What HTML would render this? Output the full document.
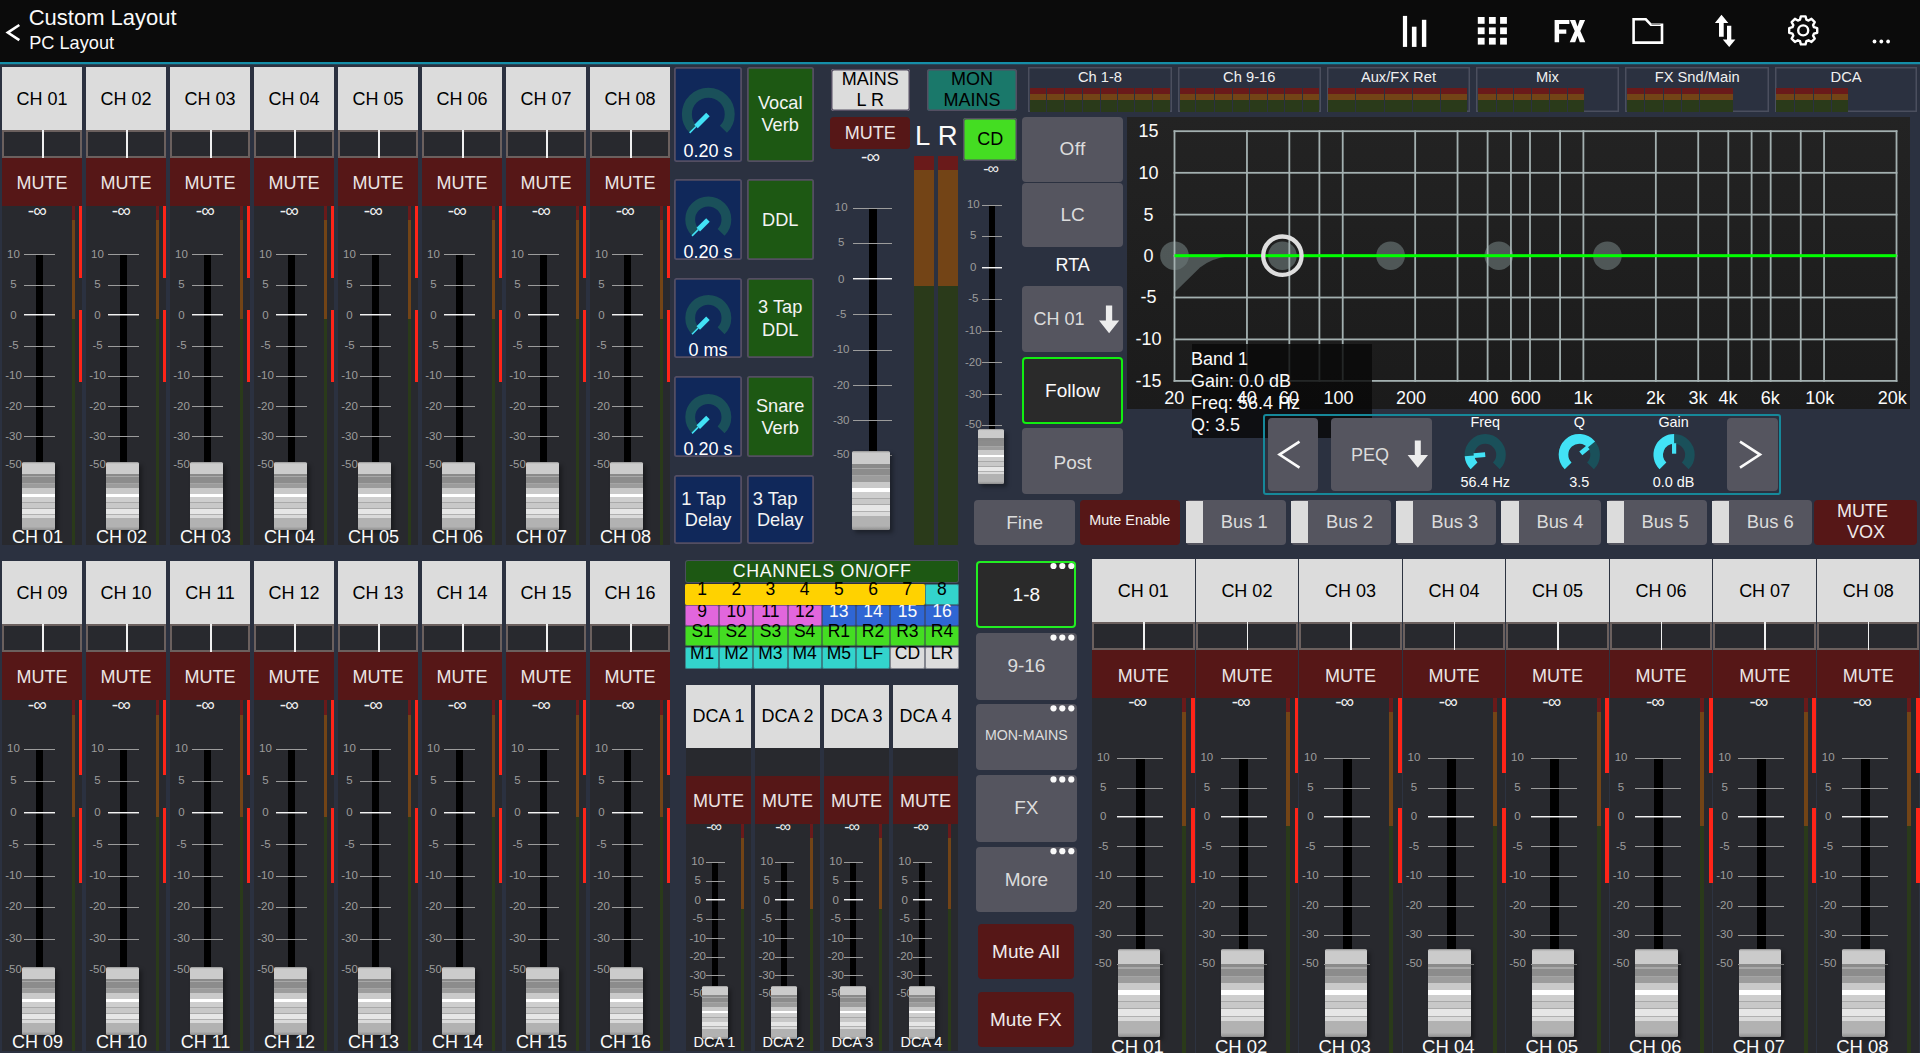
<!DOCTYPE html><html><head><meta charset="utf-8"><style>
*{margin:0;padding:0;box-sizing:border-box}
html,body{width:1920px;height:1053px;overflow:hidden;background:#2b3140}
body{position:relative;font-family:"Liberation Sans",sans-serif}
body>div,body>svg{position:absolute}
.t{white-space:nowrap}
</style></head><body><div style="left:0;top:0;width:1920px;height:62px;background:#0b0b0b"></div>
<div style="left:0px;top:62px;width:1920px;height:2px;background:#158ea8;"></div>
<div style="left:0px;top:64px;width:1920px;height:1px;background:rgba(26,141,166,0.25);"></div>
<div class="t" style="left:28.7px;top:7.38px;width:300px;font-size:22px;line-height:22px;color:#fafafa;text-align:left;">Custom Layout</div>
<div class="t" style="left:29.2px;top:34.39px;width:300px;font-size:18.2px;line-height:18.2px;color:#fafafa;text-align:left;">PC Layout</div>
<svg style="left:0;top:0" width="1920" height="62" viewBox="0 0 1920 62"><path d="M19.3 25 L7.8 32.6 L19.3 40.2" fill="none" stroke="#fff" stroke-width="2.6"/><rect x="1402.9" y="15.9" width="4.2" height="31" fill="#fff"/><rect x="1411.9" y="26.7" width="4.6" height="20.2" fill="#fff"/><rect x="1421.9" y="19.8" width="4.4" height="27.1" fill="#fff"/><rect x="1477.80" y="17.00" width="6.8" height="6.8" fill="#fff"/><rect x="1477.80" y="27.40" width="6.8" height="6.8" fill="#fff"/><rect x="1477.80" y="37.80" width="6.8" height="6.8" fill="#fff"/><rect x="1488.95" y="17.00" width="6.8" height="6.8" fill="#fff"/><rect x="1488.95" y="27.40" width="6.8" height="6.8" fill="#fff"/><rect x="1488.95" y="37.80" width="6.8" height="6.8" fill="#fff"/><rect x="1500.10" y="17.00" width="6.8" height="6.8" fill="#fff"/><rect x="1500.10" y="27.40" width="6.8" height="6.8" fill="#fff"/><rect x="1500.10" y="37.80" width="6.8" height="6.8" fill="#fff"/><path d="M1554.6 20.1 H1569.4 V24.1 H1559.1 V29.6 H1566.3 V33.7 H1559.1 V42.2 H1554.6 Z" fill="#fff"/><path d="M1569.9 20.1 H1575.3 L1577.5 26.4 L1579.7 20.1 H1585.1 L1580.3 31.1 L1585.3 42.2 H1579.8 L1577.5 35.7 L1575.2 42.2 H1569.7 L1574.7 31.1 Z" fill="#fff"/><path d="M1633.6 19.3 H1645.8 L1651 24.8 H1662 V42.6 H1633.6 Z" fill="none" stroke="#fff" stroke-width="2.6" stroke-linejoin="miter"/><path d="M1651.5 24.3 H1660.5" stroke="#888" stroke-width="1.2"/><path d="M1714.9 23 L1721.5 14.8 L1728.3 23 H1723.7 V36.7 H1719 V23 Z" fill="#fff"/><path d="M1727 25.8 H1731.3 V39.5 H1735.4 L1729.2 46.9 L1722.8 39.5 H1727 Z" fill="#fff"/><g transform="translate(1803.2 30.4)"><path d="" id="gear"/></g><circle cx="1874.5" cy="41.5" r="1.9" fill="#fff"/><circle cx="1881.3" cy="41.5" r="1.9" fill="#fff"/><circle cx="1888.1" cy="41.5" r="1.9" fill="#fff"/></svg>
<svg style="left:0;top:0" width="1920" height="62"><path d="M1813.93 27.19 L1817.21 28.07 L1817.21 32.73 L1813.93 33.61 L1813.06 35.72 L1814.75 38.66 L1811.46 41.95 L1808.52 40.26 L1806.41 41.13 L1805.53 44.41 L1800.87 44.41 L1799.99 41.13 L1797.88 40.26 L1794.94 41.95 L1791.65 38.66 L1793.34 35.72 L1792.47 33.61 L1789.19 32.73 L1789.19 28.07 L1792.47 27.19 L1793.34 25.08 L1791.65 22.14 L1794.94 18.85 L1797.88 20.54 L1799.99 19.67 L1800.87 16.39 L1805.53 16.39 L1806.41 19.67 L1808.52 20.54 L1811.46 18.85 L1814.75 22.14 L1813.06 25.08 Z" fill="none" stroke="#fff" stroke-width="2.4" stroke-linejoin="round"/><circle cx="1803.2" cy="30.4" r="5" fill="none" stroke="#fff" stroke-width="2.4"/></svg>
<div style="left:2px;top:67px;width:80px;height:63px;background:#dcdcdc;"></div>
<div class="t" style="left:2px;top:89.66px;width:80px;font-size:18px;line-height:18px;color:#000;text-align:center;">CH 01</div>
<div style="left:2px;top:130px;width:80px;height:28px;background:#28292e;box-shadow:inset 0 0 0 2px #6b605e;"></div>
<div style="left:42px;top:130px;width:1.6px;height:28px;background:#f0f0f0;"></div>
<div style="left:2px;top:158px;width:80px;height:48px;background:#561717;"></div>
<div class="t" style="left:2px;top:173.66px;width:80px;font-size:18px;line-height:18px;color:#ece4e4;text-align:center;">MUTE</div>
<div style="left:2px;top:206px;width:80px;height:339px;background:#28292e;"></div>
<div style="left:72.2px;top:206px;width:2.8px;height:14px;background:#6a1a1a;"></div>
<div style="left:72.2px;top:220px;width:2.8px;height:99px;background:#734416;"></div>
<div style="left:72.2px;top:319px;width:2.8px;height:226px;background:#2a3a1a;"></div>
<div style="left:79px;top:206px;width:3px;height:72px;background:#ff2418;"></div>
<div style="left:79px;top:310px;width:3px;height:72px;background:#ff2418;"></div>
<div class="t" style="left:6.8px;top:201.22px;width:60px;font-size:19px;line-height:19px;color:#f0f0f0;text-align:center;letter-spacing:-1px">-&#8734;</div>
<div style="left:36px;top:254.4px;width:7px;height:209.6px;background:#000;"></div>
<div style="left:24px;top:253.5px;width:31px;height:1px;background:#9c9c9c;"></div>
<div class="t" style="left:-6.5px;top:248.62px;width:40px;font-size:11.5px;line-height:11.5px;color:#9c9c9c;text-align:center;">10</div>
<div style="left:24px;top:284.5px;width:31px;height:1px;background:#9c9c9c;"></div>
<div class="t" style="left:-6.5px;top:279.22px;width:40px;font-size:11.5px;line-height:11.5px;color:#9c9c9c;text-align:center;">5</div>
<div style="left:24px;top:314px;width:31px;height:1px;background:#f4f4f4;"></div>
<div style="left:24px;top:315px;width:31px;height:1px;background:rgba(240,240,240,0.45);"></div>
<div class="t" style="left:-6.5px;top:309.62px;width:40px;font-size:11.5px;line-height:11.5px;color:#9c9c9c;text-align:center;">0</div>
<div style="left:24px;top:345.5px;width:31px;height:1px;background:#9c9c9c;"></div>
<div class="t" style="left:-6.5px;top:339.82px;width:40px;font-size:11.5px;line-height:11.5px;color:#9c9c9c;text-align:center;">-5</div>
<div style="left:24px;top:375.5px;width:31px;height:1px;background:#9c9c9c;"></div>
<div class="t" style="left:-6.5px;top:370.42px;width:40px;font-size:11.5px;line-height:11.5px;color:#9c9c9c;text-align:center;">-10</div>
<div style="left:24px;top:405.5px;width:31px;height:1px;background:#9c9c9c;"></div>
<div class="t" style="left:-6.5px;top:400.72px;width:40px;font-size:11.5px;line-height:11.5px;color:#9c9c9c;text-align:center;">-20</div>
<div style="left:24px;top:435.5px;width:31px;height:1px;background:#9c9c9c;"></div>
<div class="t" style="left:-6.5px;top:430.62px;width:40px;font-size:11.5px;line-height:11.5px;color:#9c9c9c;text-align:center;">-30</div>
<div style="left:24px;top:464.5px;width:31px;height:1px;background:#9c9c9c;"></div>
<div class="t" style="left:-6.5px;top:459.12px;width:40px;font-size:11.5px;line-height:11.5px;color:#9c9c9c;text-align:center;">-50</div>
<div style="left:22.4px;top:462px;width:33px;height:68px;background:linear-gradient(to bottom,#8e8e8e 0%,#b8b8b8 1.5%,#cbcbcb 3%,#cbcbcb 17%,#8a8a8a 17%,#8a8a8a 21%,#a8a8a8 21%,#a8a8a8 22.6%,#8c8c8c 22.6%,#8c8c8c 30.5%,#a5a5a5 30.5%,#a5a5a5 32.2%,#9c9c9c 32.2%,#9c9c9c 38.8%,#c9c9c9 38.8%,#c9c9c9 46.8%,#ffffff 46.8%,#ffffff 51.8%,#cecece 51.8%,#cecece 59%,#a9a9a9 59%,#a9a9a9 60.3%,#c8c8c8 60.3%,#c8c8c8 67.3%,#a9a9a9 67.3%,#a9a9a9 68.5%,#e6e6e6 68.5%,#e6e6e6 76.3%,#b0b0b0 76.3%,#b0b0b0 77.5%,#dadada 77.5%,#dadada 82%,#b2b2b2 82%,#b2b2b2 95%,#9a9a9a 98.5%,#8a8a8a 100%);border-radius:1.5px;box-shadow:3px 3px 4px rgba(0,0,0,.35);"></div>
<div class="t" style="left:-12.5px;top:528.06px;width:100px;font-size:18px;line-height:18px;color:#fafafa;text-align:center;">CH 01</div>
<div style="left:86px;top:67px;width:80px;height:63px;background:#dcdcdc;"></div>
<div class="t" style="left:86px;top:89.66px;width:80px;font-size:18px;line-height:18px;color:#000;text-align:center;">CH 02</div>
<div style="left:86px;top:130px;width:80px;height:28px;background:#28292e;box-shadow:inset 0 0 0 2px #6b605e;"></div>
<div style="left:126px;top:130px;width:1.6px;height:28px;background:#f0f0f0;"></div>
<div style="left:86px;top:158px;width:80px;height:48px;background:#561717;"></div>
<div class="t" style="left:86px;top:173.66px;width:80px;font-size:18px;line-height:18px;color:#ece4e4;text-align:center;">MUTE</div>
<div style="left:86px;top:206px;width:80px;height:339px;background:#28292e;"></div>
<div style="left:156.2px;top:206px;width:2.8px;height:14px;background:#6a1a1a;"></div>
<div style="left:156.2px;top:220px;width:2.8px;height:99px;background:#734416;"></div>
<div style="left:156.2px;top:319px;width:2.8px;height:226px;background:#2a3a1a;"></div>
<div style="left:163px;top:206px;width:3px;height:72px;background:#ff2418;"></div>
<div style="left:163px;top:310px;width:3px;height:72px;background:#ff2418;"></div>
<div class="t" style="left:90.8px;top:201.22px;width:60px;font-size:19px;line-height:19px;color:#f0f0f0;text-align:center;letter-spacing:-1px">-&#8734;</div>
<div style="left:120px;top:254.4px;width:7px;height:209.6px;background:#000;"></div>
<div style="left:108px;top:253.5px;width:31px;height:1px;background:#9c9c9c;"></div>
<div class="t" style="left:77.5px;top:248.62px;width:40px;font-size:11.5px;line-height:11.5px;color:#9c9c9c;text-align:center;">10</div>
<div style="left:108px;top:284.5px;width:31px;height:1px;background:#9c9c9c;"></div>
<div class="t" style="left:77.5px;top:279.22px;width:40px;font-size:11.5px;line-height:11.5px;color:#9c9c9c;text-align:center;">5</div>
<div style="left:108px;top:314px;width:31px;height:1px;background:#f4f4f4;"></div>
<div style="left:108px;top:315px;width:31px;height:1px;background:rgba(240,240,240,0.45);"></div>
<div class="t" style="left:77.5px;top:309.62px;width:40px;font-size:11.5px;line-height:11.5px;color:#9c9c9c;text-align:center;">0</div>
<div style="left:108px;top:345.5px;width:31px;height:1px;background:#9c9c9c;"></div>
<div class="t" style="left:77.5px;top:339.82px;width:40px;font-size:11.5px;line-height:11.5px;color:#9c9c9c;text-align:center;">-5</div>
<div style="left:108px;top:375.5px;width:31px;height:1px;background:#9c9c9c;"></div>
<div class="t" style="left:77.5px;top:370.42px;width:40px;font-size:11.5px;line-height:11.5px;color:#9c9c9c;text-align:center;">-10</div>
<div style="left:108px;top:405.5px;width:31px;height:1px;background:#9c9c9c;"></div>
<div class="t" style="left:77.5px;top:400.72px;width:40px;font-size:11.5px;line-height:11.5px;color:#9c9c9c;text-align:center;">-20</div>
<div style="left:108px;top:435.5px;width:31px;height:1px;background:#9c9c9c;"></div>
<div class="t" style="left:77.5px;top:430.62px;width:40px;font-size:11.5px;line-height:11.5px;color:#9c9c9c;text-align:center;">-30</div>
<div style="left:108px;top:464.5px;width:31px;height:1px;background:#9c9c9c;"></div>
<div class="t" style="left:77.5px;top:459.12px;width:40px;font-size:11.5px;line-height:11.5px;color:#9c9c9c;text-align:center;">-50</div>
<div style="left:106.4px;top:462px;width:33px;height:68px;background:linear-gradient(to bottom,#8e8e8e 0%,#b8b8b8 1.5%,#cbcbcb 3%,#cbcbcb 17%,#8a8a8a 17%,#8a8a8a 21%,#a8a8a8 21%,#a8a8a8 22.6%,#8c8c8c 22.6%,#8c8c8c 30.5%,#a5a5a5 30.5%,#a5a5a5 32.2%,#9c9c9c 32.2%,#9c9c9c 38.8%,#c9c9c9 38.8%,#c9c9c9 46.8%,#ffffff 46.8%,#ffffff 51.8%,#cecece 51.8%,#cecece 59%,#a9a9a9 59%,#a9a9a9 60.3%,#c8c8c8 60.3%,#c8c8c8 67.3%,#a9a9a9 67.3%,#a9a9a9 68.5%,#e6e6e6 68.5%,#e6e6e6 76.3%,#b0b0b0 76.3%,#b0b0b0 77.5%,#dadada 77.5%,#dadada 82%,#b2b2b2 82%,#b2b2b2 95%,#9a9a9a 98.5%,#8a8a8a 100%);border-radius:1.5px;box-shadow:3px 3px 4px rgba(0,0,0,.35);"></div>
<div class="t" style="left:71.5px;top:528.06px;width:100px;font-size:18px;line-height:18px;color:#fafafa;text-align:center;">CH 02</div>
<div style="left:170px;top:67px;width:80px;height:63px;background:#dcdcdc;"></div>
<div class="t" style="left:170px;top:89.66px;width:80px;font-size:18px;line-height:18px;color:#000;text-align:center;">CH 03</div>
<div style="left:170px;top:130px;width:80px;height:28px;background:#28292e;box-shadow:inset 0 0 0 2px #6b605e;"></div>
<div style="left:210px;top:130px;width:1.6px;height:28px;background:#f0f0f0;"></div>
<div style="left:170px;top:158px;width:80px;height:48px;background:#561717;"></div>
<div class="t" style="left:170px;top:173.66px;width:80px;font-size:18px;line-height:18px;color:#ece4e4;text-align:center;">MUTE</div>
<div style="left:170px;top:206px;width:80px;height:339px;background:#28292e;"></div>
<div style="left:240.2px;top:206px;width:2.8px;height:14px;background:#6a1a1a;"></div>
<div style="left:240.2px;top:220px;width:2.8px;height:99px;background:#734416;"></div>
<div style="left:240.2px;top:319px;width:2.8px;height:226px;background:#2a3a1a;"></div>
<div style="left:247px;top:206px;width:3px;height:72px;background:#ff2418;"></div>
<div style="left:247px;top:310px;width:3px;height:72px;background:#ff2418;"></div>
<div class="t" style="left:174.8px;top:201.22px;width:60px;font-size:19px;line-height:19px;color:#f0f0f0;text-align:center;letter-spacing:-1px">-&#8734;</div>
<div style="left:204px;top:254.4px;width:7px;height:209.6px;background:#000;"></div>
<div style="left:192px;top:253.5px;width:31px;height:1px;background:#9c9c9c;"></div>
<div class="t" style="left:161.5px;top:248.62px;width:40px;font-size:11.5px;line-height:11.5px;color:#9c9c9c;text-align:center;">10</div>
<div style="left:192px;top:284.5px;width:31px;height:1px;background:#9c9c9c;"></div>
<div class="t" style="left:161.5px;top:279.22px;width:40px;font-size:11.5px;line-height:11.5px;color:#9c9c9c;text-align:center;">5</div>
<div style="left:192px;top:314px;width:31px;height:1px;background:#f4f4f4;"></div>
<div style="left:192px;top:315px;width:31px;height:1px;background:rgba(240,240,240,0.45);"></div>
<div class="t" style="left:161.5px;top:309.62px;width:40px;font-size:11.5px;line-height:11.5px;color:#9c9c9c;text-align:center;">0</div>
<div style="left:192px;top:345.5px;width:31px;height:1px;background:#9c9c9c;"></div>
<div class="t" style="left:161.5px;top:339.82px;width:40px;font-size:11.5px;line-height:11.5px;color:#9c9c9c;text-align:center;">-5</div>
<div style="left:192px;top:375.5px;width:31px;height:1px;background:#9c9c9c;"></div>
<div class="t" style="left:161.5px;top:370.42px;width:40px;font-size:11.5px;line-height:11.5px;color:#9c9c9c;text-align:center;">-10</div>
<div style="left:192px;top:405.5px;width:31px;height:1px;background:#9c9c9c;"></div>
<div class="t" style="left:161.5px;top:400.72px;width:40px;font-size:11.5px;line-height:11.5px;color:#9c9c9c;text-align:center;">-20</div>
<div style="left:192px;top:435.5px;width:31px;height:1px;background:#9c9c9c;"></div>
<div class="t" style="left:161.5px;top:430.62px;width:40px;font-size:11.5px;line-height:11.5px;color:#9c9c9c;text-align:center;">-30</div>
<div style="left:192px;top:464.5px;width:31px;height:1px;background:#9c9c9c;"></div>
<div class="t" style="left:161.5px;top:459.12px;width:40px;font-size:11.5px;line-height:11.5px;color:#9c9c9c;text-align:center;">-50</div>
<div style="left:190.4px;top:462px;width:33px;height:68px;background:linear-gradient(to bottom,#8e8e8e 0%,#b8b8b8 1.5%,#cbcbcb 3%,#cbcbcb 17%,#8a8a8a 17%,#8a8a8a 21%,#a8a8a8 21%,#a8a8a8 22.6%,#8c8c8c 22.6%,#8c8c8c 30.5%,#a5a5a5 30.5%,#a5a5a5 32.2%,#9c9c9c 32.2%,#9c9c9c 38.8%,#c9c9c9 38.8%,#c9c9c9 46.8%,#ffffff 46.8%,#ffffff 51.8%,#cecece 51.8%,#cecece 59%,#a9a9a9 59%,#a9a9a9 60.3%,#c8c8c8 60.3%,#c8c8c8 67.3%,#a9a9a9 67.3%,#a9a9a9 68.5%,#e6e6e6 68.5%,#e6e6e6 76.3%,#b0b0b0 76.3%,#b0b0b0 77.5%,#dadada 77.5%,#dadada 82%,#b2b2b2 82%,#b2b2b2 95%,#9a9a9a 98.5%,#8a8a8a 100%);border-radius:1.5px;box-shadow:3px 3px 4px rgba(0,0,0,.35);"></div>
<div class="t" style="left:155.5px;top:528.06px;width:100px;font-size:18px;line-height:18px;color:#fafafa;text-align:center;">CH 03</div>
<div style="left:254px;top:67px;width:80px;height:63px;background:#dcdcdc;"></div>
<div class="t" style="left:254px;top:89.66px;width:80px;font-size:18px;line-height:18px;color:#000;text-align:center;">CH 04</div>
<div style="left:254px;top:130px;width:80px;height:28px;background:#28292e;box-shadow:inset 0 0 0 2px #6b605e;"></div>
<div style="left:294px;top:130px;width:1.6px;height:28px;background:#f0f0f0;"></div>
<div style="left:254px;top:158px;width:80px;height:48px;background:#561717;"></div>
<div class="t" style="left:254px;top:173.66px;width:80px;font-size:18px;line-height:18px;color:#ece4e4;text-align:center;">MUTE</div>
<div style="left:254px;top:206px;width:80px;height:339px;background:#28292e;"></div>
<div style="left:324.2px;top:206px;width:2.8px;height:14px;background:#6a1a1a;"></div>
<div style="left:324.2px;top:220px;width:2.8px;height:99px;background:#734416;"></div>
<div style="left:324.2px;top:319px;width:2.8px;height:226px;background:#2a3a1a;"></div>
<div style="left:331px;top:206px;width:3px;height:72px;background:#ff2418;"></div>
<div style="left:331px;top:310px;width:3px;height:72px;background:#ff2418;"></div>
<div class="t" style="left:258.8px;top:201.22px;width:60px;font-size:19px;line-height:19px;color:#f0f0f0;text-align:center;letter-spacing:-1px">-&#8734;</div>
<div style="left:288px;top:254.4px;width:7px;height:209.6px;background:#000;"></div>
<div style="left:276px;top:253.5px;width:31px;height:1px;background:#9c9c9c;"></div>
<div class="t" style="left:245.5px;top:248.62px;width:40px;font-size:11.5px;line-height:11.5px;color:#9c9c9c;text-align:center;">10</div>
<div style="left:276px;top:284.5px;width:31px;height:1px;background:#9c9c9c;"></div>
<div class="t" style="left:245.5px;top:279.22px;width:40px;font-size:11.5px;line-height:11.5px;color:#9c9c9c;text-align:center;">5</div>
<div style="left:276px;top:314px;width:31px;height:1px;background:#f4f4f4;"></div>
<div style="left:276px;top:315px;width:31px;height:1px;background:rgba(240,240,240,0.45);"></div>
<div class="t" style="left:245.5px;top:309.62px;width:40px;font-size:11.5px;line-height:11.5px;color:#9c9c9c;text-align:center;">0</div>
<div style="left:276px;top:345.5px;width:31px;height:1px;background:#9c9c9c;"></div>
<div class="t" style="left:245.5px;top:339.82px;width:40px;font-size:11.5px;line-height:11.5px;color:#9c9c9c;text-align:center;">-5</div>
<div style="left:276px;top:375.5px;width:31px;height:1px;background:#9c9c9c;"></div>
<div class="t" style="left:245.5px;top:370.42px;width:40px;font-size:11.5px;line-height:11.5px;color:#9c9c9c;text-align:center;">-10</div>
<div style="left:276px;top:405.5px;width:31px;height:1px;background:#9c9c9c;"></div>
<div class="t" style="left:245.5px;top:400.72px;width:40px;font-size:11.5px;line-height:11.5px;color:#9c9c9c;text-align:center;">-20</div>
<div style="left:276px;top:435.5px;width:31px;height:1px;background:#9c9c9c;"></div>
<div class="t" style="left:245.5px;top:430.62px;width:40px;font-size:11.5px;line-height:11.5px;color:#9c9c9c;text-align:center;">-30</div>
<div style="left:276px;top:464.5px;width:31px;height:1px;background:#9c9c9c;"></div>
<div class="t" style="left:245.5px;top:459.12px;width:40px;font-size:11.5px;line-height:11.5px;color:#9c9c9c;text-align:center;">-50</div>
<div style="left:274.4px;top:462px;width:33px;height:68px;background:linear-gradient(to bottom,#8e8e8e 0%,#b8b8b8 1.5%,#cbcbcb 3%,#cbcbcb 17%,#8a8a8a 17%,#8a8a8a 21%,#a8a8a8 21%,#a8a8a8 22.6%,#8c8c8c 22.6%,#8c8c8c 30.5%,#a5a5a5 30.5%,#a5a5a5 32.2%,#9c9c9c 32.2%,#9c9c9c 38.8%,#c9c9c9 38.8%,#c9c9c9 46.8%,#ffffff 46.8%,#ffffff 51.8%,#cecece 51.8%,#cecece 59%,#a9a9a9 59%,#a9a9a9 60.3%,#c8c8c8 60.3%,#c8c8c8 67.3%,#a9a9a9 67.3%,#a9a9a9 68.5%,#e6e6e6 68.5%,#e6e6e6 76.3%,#b0b0b0 76.3%,#b0b0b0 77.5%,#dadada 77.5%,#dadada 82%,#b2b2b2 82%,#b2b2b2 95%,#9a9a9a 98.5%,#8a8a8a 100%);border-radius:1.5px;box-shadow:3px 3px 4px rgba(0,0,0,.35);"></div>
<div class="t" style="left:239.5px;top:528.06px;width:100px;font-size:18px;line-height:18px;color:#fafafa;text-align:center;">CH 04</div>
<div style="left:338px;top:67px;width:80px;height:63px;background:#dcdcdc;"></div>
<div class="t" style="left:338px;top:89.66px;width:80px;font-size:18px;line-height:18px;color:#000;text-align:center;">CH 05</div>
<div style="left:338px;top:130px;width:80px;height:28px;background:#28292e;box-shadow:inset 0 0 0 2px #6b605e;"></div>
<div style="left:378px;top:130px;width:1.6px;height:28px;background:#f0f0f0;"></div>
<div style="left:338px;top:158px;width:80px;height:48px;background:#561717;"></div>
<div class="t" style="left:338px;top:173.66px;width:80px;font-size:18px;line-height:18px;color:#ece4e4;text-align:center;">MUTE</div>
<div style="left:338px;top:206px;width:80px;height:339px;background:#28292e;"></div>
<div style="left:408.2px;top:206px;width:2.8px;height:14px;background:#6a1a1a;"></div>
<div style="left:408.2px;top:220px;width:2.8px;height:99px;background:#734416;"></div>
<div style="left:408.2px;top:319px;width:2.8px;height:226px;background:#2a3a1a;"></div>
<div style="left:415px;top:206px;width:3px;height:72px;background:#ff2418;"></div>
<div style="left:415px;top:310px;width:3px;height:72px;background:#ff2418;"></div>
<div class="t" style="left:342.8px;top:201.22px;width:60px;font-size:19px;line-height:19px;color:#f0f0f0;text-align:center;letter-spacing:-1px">-&#8734;</div>
<div style="left:372px;top:254.4px;width:7px;height:209.6px;background:#000;"></div>
<div style="left:360px;top:253.5px;width:31px;height:1px;background:#9c9c9c;"></div>
<div class="t" style="left:329.5px;top:248.62px;width:40px;font-size:11.5px;line-height:11.5px;color:#9c9c9c;text-align:center;">10</div>
<div style="left:360px;top:284.5px;width:31px;height:1px;background:#9c9c9c;"></div>
<div class="t" style="left:329.5px;top:279.22px;width:40px;font-size:11.5px;line-height:11.5px;color:#9c9c9c;text-align:center;">5</div>
<div style="left:360px;top:314px;width:31px;height:1px;background:#f4f4f4;"></div>
<div style="left:360px;top:315px;width:31px;height:1px;background:rgba(240,240,240,0.45);"></div>
<div class="t" style="left:329.5px;top:309.62px;width:40px;font-size:11.5px;line-height:11.5px;color:#9c9c9c;text-align:center;">0</div>
<div style="left:360px;top:345.5px;width:31px;height:1px;background:#9c9c9c;"></div>
<div class="t" style="left:329.5px;top:339.82px;width:40px;font-size:11.5px;line-height:11.5px;color:#9c9c9c;text-align:center;">-5</div>
<div style="left:360px;top:375.5px;width:31px;height:1px;background:#9c9c9c;"></div>
<div class="t" style="left:329.5px;top:370.42px;width:40px;font-size:11.5px;line-height:11.5px;color:#9c9c9c;text-align:center;">-10</div>
<div style="left:360px;top:405.5px;width:31px;height:1px;background:#9c9c9c;"></div>
<div class="t" style="left:329.5px;top:400.72px;width:40px;font-size:11.5px;line-height:11.5px;color:#9c9c9c;text-align:center;">-20</div>
<div style="left:360px;top:435.5px;width:31px;height:1px;background:#9c9c9c;"></div>
<div class="t" style="left:329.5px;top:430.62px;width:40px;font-size:11.5px;line-height:11.5px;color:#9c9c9c;text-align:center;">-30</div>
<div style="left:360px;top:464.5px;width:31px;height:1px;background:#9c9c9c;"></div>
<div class="t" style="left:329.5px;top:459.12px;width:40px;font-size:11.5px;line-height:11.5px;color:#9c9c9c;text-align:center;">-50</div>
<div style="left:358.4px;top:462px;width:33px;height:68px;background:linear-gradient(to bottom,#8e8e8e 0%,#b8b8b8 1.5%,#cbcbcb 3%,#cbcbcb 17%,#8a8a8a 17%,#8a8a8a 21%,#a8a8a8 21%,#a8a8a8 22.6%,#8c8c8c 22.6%,#8c8c8c 30.5%,#a5a5a5 30.5%,#a5a5a5 32.2%,#9c9c9c 32.2%,#9c9c9c 38.8%,#c9c9c9 38.8%,#c9c9c9 46.8%,#ffffff 46.8%,#ffffff 51.8%,#cecece 51.8%,#cecece 59%,#a9a9a9 59%,#a9a9a9 60.3%,#c8c8c8 60.3%,#c8c8c8 67.3%,#a9a9a9 67.3%,#a9a9a9 68.5%,#e6e6e6 68.5%,#e6e6e6 76.3%,#b0b0b0 76.3%,#b0b0b0 77.5%,#dadada 77.5%,#dadada 82%,#b2b2b2 82%,#b2b2b2 95%,#9a9a9a 98.5%,#8a8a8a 100%);border-radius:1.5px;box-shadow:3px 3px 4px rgba(0,0,0,.35);"></div>
<div class="t" style="left:323.5px;top:528.06px;width:100px;font-size:18px;line-height:18px;color:#fafafa;text-align:center;">CH 05</div>
<div style="left:422px;top:67px;width:80px;height:63px;background:#dcdcdc;"></div>
<div class="t" style="left:422px;top:89.66px;width:80px;font-size:18px;line-height:18px;color:#000;text-align:center;">CH 06</div>
<div style="left:422px;top:130px;width:80px;height:28px;background:#28292e;box-shadow:inset 0 0 0 2px #6b605e;"></div>
<div style="left:462px;top:130px;width:1.6px;height:28px;background:#f0f0f0;"></div>
<div style="left:422px;top:158px;width:80px;height:48px;background:#561717;"></div>
<div class="t" style="left:422px;top:173.66px;width:80px;font-size:18px;line-height:18px;color:#ece4e4;text-align:center;">MUTE</div>
<div style="left:422px;top:206px;width:80px;height:339px;background:#28292e;"></div>
<div style="left:492.2px;top:206px;width:2.8px;height:14px;background:#6a1a1a;"></div>
<div style="left:492.2px;top:220px;width:2.8px;height:99px;background:#734416;"></div>
<div style="left:492.2px;top:319px;width:2.8px;height:226px;background:#2a3a1a;"></div>
<div style="left:499px;top:206px;width:3px;height:72px;background:#ff2418;"></div>
<div style="left:499px;top:310px;width:3px;height:72px;background:#ff2418;"></div>
<div class="t" style="left:426.8px;top:201.22px;width:60px;font-size:19px;line-height:19px;color:#f0f0f0;text-align:center;letter-spacing:-1px">-&#8734;</div>
<div style="left:456px;top:254.4px;width:7px;height:209.6px;background:#000;"></div>
<div style="left:444px;top:253.5px;width:31px;height:1px;background:#9c9c9c;"></div>
<div class="t" style="left:413.5px;top:248.62px;width:40px;font-size:11.5px;line-height:11.5px;color:#9c9c9c;text-align:center;">10</div>
<div style="left:444px;top:284.5px;width:31px;height:1px;background:#9c9c9c;"></div>
<div class="t" style="left:413.5px;top:279.22px;width:40px;font-size:11.5px;line-height:11.5px;color:#9c9c9c;text-align:center;">5</div>
<div style="left:444px;top:314px;width:31px;height:1px;background:#f4f4f4;"></div>
<div style="left:444px;top:315px;width:31px;height:1px;background:rgba(240,240,240,0.45);"></div>
<div class="t" style="left:413.5px;top:309.62px;width:40px;font-size:11.5px;line-height:11.5px;color:#9c9c9c;text-align:center;">0</div>
<div style="left:444px;top:345.5px;width:31px;height:1px;background:#9c9c9c;"></div>
<div class="t" style="left:413.5px;top:339.82px;width:40px;font-size:11.5px;line-height:11.5px;color:#9c9c9c;text-align:center;">-5</div>
<div style="left:444px;top:375.5px;width:31px;height:1px;background:#9c9c9c;"></div>
<div class="t" style="left:413.5px;top:370.42px;width:40px;font-size:11.5px;line-height:11.5px;color:#9c9c9c;text-align:center;">-10</div>
<div style="left:444px;top:405.5px;width:31px;height:1px;background:#9c9c9c;"></div>
<div class="t" style="left:413.5px;top:400.72px;width:40px;font-size:11.5px;line-height:11.5px;color:#9c9c9c;text-align:center;">-20</div>
<div style="left:444px;top:435.5px;width:31px;height:1px;background:#9c9c9c;"></div>
<div class="t" style="left:413.5px;top:430.62px;width:40px;font-size:11.5px;line-height:11.5px;color:#9c9c9c;text-align:center;">-30</div>
<div style="left:444px;top:464.5px;width:31px;height:1px;background:#9c9c9c;"></div>
<div class="t" style="left:413.5px;top:459.12px;width:40px;font-size:11.5px;line-height:11.5px;color:#9c9c9c;text-align:center;">-50</div>
<div style="left:442.4px;top:462px;width:33px;height:68px;background:linear-gradient(to bottom,#8e8e8e 0%,#b8b8b8 1.5%,#cbcbcb 3%,#cbcbcb 17%,#8a8a8a 17%,#8a8a8a 21%,#a8a8a8 21%,#a8a8a8 22.6%,#8c8c8c 22.6%,#8c8c8c 30.5%,#a5a5a5 30.5%,#a5a5a5 32.2%,#9c9c9c 32.2%,#9c9c9c 38.8%,#c9c9c9 38.8%,#c9c9c9 46.8%,#ffffff 46.8%,#ffffff 51.8%,#cecece 51.8%,#cecece 59%,#a9a9a9 59%,#a9a9a9 60.3%,#c8c8c8 60.3%,#c8c8c8 67.3%,#a9a9a9 67.3%,#a9a9a9 68.5%,#e6e6e6 68.5%,#e6e6e6 76.3%,#b0b0b0 76.3%,#b0b0b0 77.5%,#dadada 77.5%,#dadada 82%,#b2b2b2 82%,#b2b2b2 95%,#9a9a9a 98.5%,#8a8a8a 100%);border-radius:1.5px;box-shadow:3px 3px 4px rgba(0,0,0,.35);"></div>
<div class="t" style="left:407.5px;top:528.06px;width:100px;font-size:18px;line-height:18px;color:#fafafa;text-align:center;">CH 06</div>
<div style="left:506px;top:67px;width:80px;height:63px;background:#dcdcdc;"></div>
<div class="t" style="left:506px;top:89.66px;width:80px;font-size:18px;line-height:18px;color:#000;text-align:center;">CH 07</div>
<div style="left:506px;top:130px;width:80px;height:28px;background:#28292e;box-shadow:inset 0 0 0 2px #6b605e;"></div>
<div style="left:546px;top:130px;width:1.6px;height:28px;background:#f0f0f0;"></div>
<div style="left:506px;top:158px;width:80px;height:48px;background:#561717;"></div>
<div class="t" style="left:506px;top:173.66px;width:80px;font-size:18px;line-height:18px;color:#ece4e4;text-align:center;">MUTE</div>
<div style="left:506px;top:206px;width:80px;height:339px;background:#28292e;"></div>
<div style="left:576.2px;top:206px;width:2.8px;height:14px;background:#6a1a1a;"></div>
<div style="left:576.2px;top:220px;width:2.8px;height:99px;background:#734416;"></div>
<div style="left:576.2px;top:319px;width:2.8px;height:226px;background:#2a3a1a;"></div>
<div style="left:583px;top:206px;width:3px;height:72px;background:#ff2418;"></div>
<div style="left:583px;top:310px;width:3px;height:72px;background:#ff2418;"></div>
<div class="t" style="left:510.8px;top:201.22px;width:60px;font-size:19px;line-height:19px;color:#f0f0f0;text-align:center;letter-spacing:-1px">-&#8734;</div>
<div style="left:540px;top:254.4px;width:7px;height:209.6px;background:#000;"></div>
<div style="left:528px;top:253.5px;width:31px;height:1px;background:#9c9c9c;"></div>
<div class="t" style="left:497.5px;top:248.62px;width:40px;font-size:11.5px;line-height:11.5px;color:#9c9c9c;text-align:center;">10</div>
<div style="left:528px;top:284.5px;width:31px;height:1px;background:#9c9c9c;"></div>
<div class="t" style="left:497.5px;top:279.22px;width:40px;font-size:11.5px;line-height:11.5px;color:#9c9c9c;text-align:center;">5</div>
<div style="left:528px;top:314px;width:31px;height:1px;background:#f4f4f4;"></div>
<div style="left:528px;top:315px;width:31px;height:1px;background:rgba(240,240,240,0.45);"></div>
<div class="t" style="left:497.5px;top:309.62px;width:40px;font-size:11.5px;line-height:11.5px;color:#9c9c9c;text-align:center;">0</div>
<div style="left:528px;top:345.5px;width:31px;height:1px;background:#9c9c9c;"></div>
<div class="t" style="left:497.5px;top:339.82px;width:40px;font-size:11.5px;line-height:11.5px;color:#9c9c9c;text-align:center;">-5</div>
<div style="left:528px;top:375.5px;width:31px;height:1px;background:#9c9c9c;"></div>
<div class="t" style="left:497.5px;top:370.42px;width:40px;font-size:11.5px;line-height:11.5px;color:#9c9c9c;text-align:center;">-10</div>
<div style="left:528px;top:405.5px;width:31px;height:1px;background:#9c9c9c;"></div>
<div class="t" style="left:497.5px;top:400.72px;width:40px;font-size:11.5px;line-height:11.5px;color:#9c9c9c;text-align:center;">-20</div>
<div style="left:528px;top:435.5px;width:31px;height:1px;background:#9c9c9c;"></div>
<div class="t" style="left:497.5px;top:430.62px;width:40px;font-size:11.5px;line-height:11.5px;color:#9c9c9c;text-align:center;">-30</div>
<div style="left:528px;top:464.5px;width:31px;height:1px;background:#9c9c9c;"></div>
<div class="t" style="left:497.5px;top:459.12px;width:40px;font-size:11.5px;line-height:11.5px;color:#9c9c9c;text-align:center;">-50</div>
<div style="left:526.4px;top:462px;width:33px;height:68px;background:linear-gradient(to bottom,#8e8e8e 0%,#b8b8b8 1.5%,#cbcbcb 3%,#cbcbcb 17%,#8a8a8a 17%,#8a8a8a 21%,#a8a8a8 21%,#a8a8a8 22.6%,#8c8c8c 22.6%,#8c8c8c 30.5%,#a5a5a5 30.5%,#a5a5a5 32.2%,#9c9c9c 32.2%,#9c9c9c 38.8%,#c9c9c9 38.8%,#c9c9c9 46.8%,#ffffff 46.8%,#ffffff 51.8%,#cecece 51.8%,#cecece 59%,#a9a9a9 59%,#a9a9a9 60.3%,#c8c8c8 60.3%,#c8c8c8 67.3%,#a9a9a9 67.3%,#a9a9a9 68.5%,#e6e6e6 68.5%,#e6e6e6 76.3%,#b0b0b0 76.3%,#b0b0b0 77.5%,#dadada 77.5%,#dadada 82%,#b2b2b2 82%,#b2b2b2 95%,#9a9a9a 98.5%,#8a8a8a 100%);border-radius:1.5px;box-shadow:3px 3px 4px rgba(0,0,0,.35);"></div>
<div class="t" style="left:491.5px;top:528.06px;width:100px;font-size:18px;line-height:18px;color:#fafafa;text-align:center;">CH 07</div>
<div style="left:590px;top:67px;width:80px;height:63px;background:#dcdcdc;"></div>
<div class="t" style="left:590px;top:89.66px;width:80px;font-size:18px;line-height:18px;color:#000;text-align:center;">CH 08</div>
<div style="left:590px;top:130px;width:80px;height:28px;background:#28292e;box-shadow:inset 0 0 0 2px #6b605e;"></div>
<div style="left:630px;top:130px;width:1.6px;height:28px;background:#f0f0f0;"></div>
<div style="left:590px;top:158px;width:80px;height:48px;background:#561717;"></div>
<div class="t" style="left:590px;top:173.66px;width:80px;font-size:18px;line-height:18px;color:#ece4e4;text-align:center;">MUTE</div>
<div style="left:590px;top:206px;width:80px;height:339px;background:#28292e;"></div>
<div style="left:660.2px;top:206px;width:2.8px;height:14px;background:#6a1a1a;"></div>
<div style="left:660.2px;top:220px;width:2.8px;height:99px;background:#734416;"></div>
<div style="left:660.2px;top:319px;width:2.8px;height:226px;background:#2a3a1a;"></div>
<div style="left:667px;top:206px;width:3px;height:72px;background:#ff2418;"></div>
<div style="left:667px;top:310px;width:3px;height:72px;background:#ff2418;"></div>
<div class="t" style="left:594.8px;top:201.22px;width:60px;font-size:19px;line-height:19px;color:#f0f0f0;text-align:center;letter-spacing:-1px">-&#8734;</div>
<div style="left:624px;top:254.4px;width:7px;height:209.6px;background:#000;"></div>
<div style="left:612px;top:253.5px;width:31px;height:1px;background:#9c9c9c;"></div>
<div class="t" style="left:581.5px;top:248.62px;width:40px;font-size:11.5px;line-height:11.5px;color:#9c9c9c;text-align:center;">10</div>
<div style="left:612px;top:284.5px;width:31px;height:1px;background:#9c9c9c;"></div>
<div class="t" style="left:581.5px;top:279.22px;width:40px;font-size:11.5px;line-height:11.5px;color:#9c9c9c;text-align:center;">5</div>
<div style="left:612px;top:314px;width:31px;height:1px;background:#f4f4f4;"></div>
<div style="left:612px;top:315px;width:31px;height:1px;background:rgba(240,240,240,0.45);"></div>
<div class="t" style="left:581.5px;top:309.62px;width:40px;font-size:11.5px;line-height:11.5px;color:#9c9c9c;text-align:center;">0</div>
<div style="left:612px;top:345.5px;width:31px;height:1px;background:#9c9c9c;"></div>
<div class="t" style="left:581.5px;top:339.82px;width:40px;font-size:11.5px;line-height:11.5px;color:#9c9c9c;text-align:center;">-5</div>
<div style="left:612px;top:375.5px;width:31px;height:1px;background:#9c9c9c;"></div>
<div class="t" style="left:581.5px;top:370.42px;width:40px;font-size:11.5px;line-height:11.5px;color:#9c9c9c;text-align:center;">-10</div>
<div style="left:612px;top:405.5px;width:31px;height:1px;background:#9c9c9c;"></div>
<div class="t" style="left:581.5px;top:400.72px;width:40px;font-size:11.5px;line-height:11.5px;color:#9c9c9c;text-align:center;">-20</div>
<div style="left:612px;top:435.5px;width:31px;height:1px;background:#9c9c9c;"></div>
<div class="t" style="left:581.5px;top:430.62px;width:40px;font-size:11.5px;line-height:11.5px;color:#9c9c9c;text-align:center;">-30</div>
<div style="left:612px;top:464.5px;width:31px;height:1px;background:#9c9c9c;"></div>
<div class="t" style="left:581.5px;top:459.12px;width:40px;font-size:11.5px;line-height:11.5px;color:#9c9c9c;text-align:center;">-50</div>
<div style="left:610.4px;top:462px;width:33px;height:68px;background:linear-gradient(to bottom,#8e8e8e 0%,#b8b8b8 1.5%,#cbcbcb 3%,#cbcbcb 17%,#8a8a8a 17%,#8a8a8a 21%,#a8a8a8 21%,#a8a8a8 22.6%,#8c8c8c 22.6%,#8c8c8c 30.5%,#a5a5a5 30.5%,#a5a5a5 32.2%,#9c9c9c 32.2%,#9c9c9c 38.8%,#c9c9c9 38.8%,#c9c9c9 46.8%,#ffffff 46.8%,#ffffff 51.8%,#cecece 51.8%,#cecece 59%,#a9a9a9 59%,#a9a9a9 60.3%,#c8c8c8 60.3%,#c8c8c8 67.3%,#a9a9a9 67.3%,#a9a9a9 68.5%,#e6e6e6 68.5%,#e6e6e6 76.3%,#b0b0b0 76.3%,#b0b0b0 77.5%,#dadada 77.5%,#dadada 82%,#b2b2b2 82%,#b2b2b2 95%,#9a9a9a 98.5%,#8a8a8a 100%);border-radius:1.5px;box-shadow:3px 3px 4px rgba(0,0,0,.35);"></div>
<div class="t" style="left:575.5px;top:528.06px;width:100px;font-size:18px;line-height:18px;color:#fafafa;text-align:center;">CH 08</div>
<div style="left:2px;top:561px;width:80px;height:63px;background:#dcdcdc;"></div>
<div class="t" style="left:2px;top:583.66px;width:80px;font-size:18px;line-height:18px;color:#000;text-align:center;">CH 09</div>
<div style="left:2px;top:624px;width:80px;height:28px;background:#28292e;box-shadow:inset 0 0 0 2px #6b605e;"></div>
<div style="left:42px;top:624px;width:1.6px;height:28px;background:#f0f0f0;"></div>
<div style="left:2px;top:652px;width:80px;height:48px;background:#561717;"></div>
<div class="t" style="left:2px;top:667.66px;width:80px;font-size:18px;line-height:18px;color:#ece4e4;text-align:center;">MUTE</div>
<div style="left:2px;top:700px;width:80px;height:351px;background:#28292e;"></div>
<div style="left:72.2px;top:700px;width:2.8px;height:15px;background:#6a1a1a;"></div>
<div style="left:72.2px;top:715px;width:2.8px;height:102px;background:#734416;"></div>
<div style="left:72.2px;top:817px;width:2.8px;height:234px;background:#2a3a1a;"></div>
<div style="left:79px;top:700px;width:3px;height:74.5px;background:#ff2418;"></div>
<div style="left:79px;top:808px;width:3px;height:75px;background:#ff2418;"></div>
<div class="t" style="left:6.8px;top:695.22px;width:60px;font-size:19px;line-height:19px;color:#f0f0f0;text-align:center;letter-spacing:-1px">-&#8734;</div>
<div style="left:36px;top:749px;width:7px;height:220px;background:#000;"></div>
<div style="left:24px;top:748.5px;width:31px;height:1px;background:#9c9c9c;"></div>
<div class="t" style="left:-6.5px;top:743.22px;width:40px;font-size:11.5px;line-height:11.5px;color:#9c9c9c;text-align:center;">10</div>
<div style="left:24px;top:780.5px;width:31px;height:1px;background:#9c9c9c;"></div>
<div class="t" style="left:-6.5px;top:775.12px;width:40px;font-size:11.5px;line-height:11.5px;color:#9c9c9c;text-align:center;">5</div>
<div style="left:24px;top:812px;width:31px;height:1px;background:#f4f4f4;"></div>
<div style="left:24px;top:813px;width:31px;height:1px;background:rgba(240,240,240,0.45);"></div>
<div class="t" style="left:-6.5px;top:806.92px;width:40px;font-size:11.5px;line-height:11.5px;color:#9c9c9c;text-align:center;">0</div>
<div style="left:24px;top:843.5px;width:31px;height:1px;background:#9c9c9c;"></div>
<div class="t" style="left:-6.5px;top:838.52px;width:40px;font-size:11.5px;line-height:11.5px;color:#9c9c9c;text-align:center;">-5</div>
<div style="left:24px;top:875.5px;width:31px;height:1px;background:#9c9c9c;"></div>
<div class="t" style="left:-6.5px;top:870.22px;width:40px;font-size:11.5px;line-height:11.5px;color:#9c9c9c;text-align:center;">-10</div>
<div style="left:24px;top:906.5px;width:31px;height:1px;background:#9c9c9c;"></div>
<div class="t" style="left:-6.5px;top:901.42px;width:40px;font-size:11.5px;line-height:11.5px;color:#9c9c9c;text-align:center;">-20</div>
<div style="left:24px;top:938.5px;width:31px;height:1px;background:#9c9c9c;"></div>
<div class="t" style="left:-6.5px;top:933.22px;width:40px;font-size:11.5px;line-height:11.5px;color:#9c9c9c;text-align:center;">-30</div>
<div style="left:24px;top:969.5px;width:31px;height:1px;background:#9c9c9c;"></div>
<div class="t" style="left:-6.5px;top:964.22px;width:40px;font-size:11.5px;line-height:11.5px;color:#9c9c9c;text-align:center;">-50</div>
<div style="left:22.4px;top:967px;width:33px;height:68px;background:linear-gradient(to bottom,#8e8e8e 0%,#b8b8b8 1.5%,#cbcbcb 3%,#cbcbcb 17%,#8a8a8a 17%,#8a8a8a 21%,#a8a8a8 21%,#a8a8a8 22.6%,#8c8c8c 22.6%,#8c8c8c 30.5%,#a5a5a5 30.5%,#a5a5a5 32.2%,#9c9c9c 32.2%,#9c9c9c 38.8%,#c9c9c9 38.8%,#c9c9c9 46.8%,#ffffff 46.8%,#ffffff 51.8%,#cecece 51.8%,#cecece 59%,#a9a9a9 59%,#a9a9a9 60.3%,#c8c8c8 60.3%,#c8c8c8 67.3%,#a9a9a9 67.3%,#a9a9a9 68.5%,#e6e6e6 68.5%,#e6e6e6 76.3%,#b0b0b0 76.3%,#b0b0b0 77.5%,#dadada 77.5%,#dadada 82%,#b2b2b2 82%,#b2b2b2 95%,#9a9a9a 98.5%,#8a8a8a 100%);border-radius:1.5px;box-shadow:3px 3px 4px rgba(0,0,0,.35);"></div>
<div class="t" style="left:-12.5px;top:1033.06px;width:100px;font-size:18px;line-height:18px;color:#fafafa;text-align:center;">CH 09</div>
<div style="left:86px;top:561px;width:80px;height:63px;background:#dcdcdc;"></div>
<div class="t" style="left:86px;top:583.66px;width:80px;font-size:18px;line-height:18px;color:#000;text-align:center;">CH 10</div>
<div style="left:86px;top:624px;width:80px;height:28px;background:#28292e;box-shadow:inset 0 0 0 2px #6b605e;"></div>
<div style="left:126px;top:624px;width:1.6px;height:28px;background:#f0f0f0;"></div>
<div style="left:86px;top:652px;width:80px;height:48px;background:#561717;"></div>
<div class="t" style="left:86px;top:667.66px;width:80px;font-size:18px;line-height:18px;color:#ece4e4;text-align:center;">MUTE</div>
<div style="left:86px;top:700px;width:80px;height:351px;background:#28292e;"></div>
<div style="left:156.2px;top:700px;width:2.8px;height:15px;background:#6a1a1a;"></div>
<div style="left:156.2px;top:715px;width:2.8px;height:102px;background:#734416;"></div>
<div style="left:156.2px;top:817px;width:2.8px;height:234px;background:#2a3a1a;"></div>
<div style="left:163px;top:700px;width:3px;height:74.5px;background:#ff2418;"></div>
<div style="left:163px;top:808px;width:3px;height:75px;background:#ff2418;"></div>
<div class="t" style="left:90.8px;top:695.22px;width:60px;font-size:19px;line-height:19px;color:#f0f0f0;text-align:center;letter-spacing:-1px">-&#8734;</div>
<div style="left:120px;top:749px;width:7px;height:220px;background:#000;"></div>
<div style="left:108px;top:748.5px;width:31px;height:1px;background:#9c9c9c;"></div>
<div class="t" style="left:77.5px;top:743.22px;width:40px;font-size:11.5px;line-height:11.5px;color:#9c9c9c;text-align:center;">10</div>
<div style="left:108px;top:780.5px;width:31px;height:1px;background:#9c9c9c;"></div>
<div class="t" style="left:77.5px;top:775.12px;width:40px;font-size:11.5px;line-height:11.5px;color:#9c9c9c;text-align:center;">5</div>
<div style="left:108px;top:812px;width:31px;height:1px;background:#f4f4f4;"></div>
<div style="left:108px;top:813px;width:31px;height:1px;background:rgba(240,240,240,0.45);"></div>
<div class="t" style="left:77.5px;top:806.92px;width:40px;font-size:11.5px;line-height:11.5px;color:#9c9c9c;text-align:center;">0</div>
<div style="left:108px;top:843.5px;width:31px;height:1px;background:#9c9c9c;"></div>
<div class="t" style="left:77.5px;top:838.52px;width:40px;font-size:11.5px;line-height:11.5px;color:#9c9c9c;text-align:center;">-5</div>
<div style="left:108px;top:875.5px;width:31px;height:1px;background:#9c9c9c;"></div>
<div class="t" style="left:77.5px;top:870.22px;width:40px;font-size:11.5px;line-height:11.5px;color:#9c9c9c;text-align:center;">-10</div>
<div style="left:108px;top:906.5px;width:31px;height:1px;background:#9c9c9c;"></div>
<div class="t" style="left:77.5px;top:901.42px;width:40px;font-size:11.5px;line-height:11.5px;color:#9c9c9c;text-align:center;">-20</div>
<div style="left:108px;top:938.5px;width:31px;height:1px;background:#9c9c9c;"></div>
<div class="t" style="left:77.5px;top:933.22px;width:40px;font-size:11.5px;line-height:11.5px;color:#9c9c9c;text-align:center;">-30</div>
<div style="left:108px;top:969.5px;width:31px;height:1px;background:#9c9c9c;"></div>
<div class="t" style="left:77.5px;top:964.22px;width:40px;font-size:11.5px;line-height:11.5px;color:#9c9c9c;text-align:center;">-50</div>
<div style="left:106.4px;top:967px;width:33px;height:68px;background:linear-gradient(to bottom,#8e8e8e 0%,#b8b8b8 1.5%,#cbcbcb 3%,#cbcbcb 17%,#8a8a8a 17%,#8a8a8a 21%,#a8a8a8 21%,#a8a8a8 22.6%,#8c8c8c 22.6%,#8c8c8c 30.5%,#a5a5a5 30.5%,#a5a5a5 32.2%,#9c9c9c 32.2%,#9c9c9c 38.8%,#c9c9c9 38.8%,#c9c9c9 46.8%,#ffffff 46.8%,#ffffff 51.8%,#cecece 51.8%,#cecece 59%,#a9a9a9 59%,#a9a9a9 60.3%,#c8c8c8 60.3%,#c8c8c8 67.3%,#a9a9a9 67.3%,#a9a9a9 68.5%,#e6e6e6 68.5%,#e6e6e6 76.3%,#b0b0b0 76.3%,#b0b0b0 77.5%,#dadada 77.5%,#dadada 82%,#b2b2b2 82%,#b2b2b2 95%,#9a9a9a 98.5%,#8a8a8a 100%);border-radius:1.5px;box-shadow:3px 3px 4px rgba(0,0,0,.35);"></div>
<div class="t" style="left:71.5px;top:1033.06px;width:100px;font-size:18px;line-height:18px;color:#fafafa;text-align:center;">CH 10</div>
<div style="left:170px;top:561px;width:80px;height:63px;background:#dcdcdc;"></div>
<div class="t" style="left:170px;top:583.66px;width:80px;font-size:18px;line-height:18px;color:#000;text-align:center;">CH 11</div>
<div style="left:170px;top:624px;width:80px;height:28px;background:#28292e;box-shadow:inset 0 0 0 2px #6b605e;"></div>
<div style="left:210px;top:624px;width:1.6px;height:28px;background:#f0f0f0;"></div>
<div style="left:170px;top:652px;width:80px;height:48px;background:#561717;"></div>
<div class="t" style="left:170px;top:667.66px;width:80px;font-size:18px;line-height:18px;color:#ece4e4;text-align:center;">MUTE</div>
<div style="left:170px;top:700px;width:80px;height:351px;background:#28292e;"></div>
<div style="left:240.2px;top:700px;width:2.8px;height:15px;background:#6a1a1a;"></div>
<div style="left:240.2px;top:715px;width:2.8px;height:102px;background:#734416;"></div>
<div style="left:240.2px;top:817px;width:2.8px;height:234px;background:#2a3a1a;"></div>
<div style="left:247px;top:700px;width:3px;height:74.5px;background:#ff2418;"></div>
<div style="left:247px;top:808px;width:3px;height:75px;background:#ff2418;"></div>
<div class="t" style="left:174.8px;top:695.22px;width:60px;font-size:19px;line-height:19px;color:#f0f0f0;text-align:center;letter-spacing:-1px">-&#8734;</div>
<div style="left:204px;top:749px;width:7px;height:220px;background:#000;"></div>
<div style="left:192px;top:748.5px;width:31px;height:1px;background:#9c9c9c;"></div>
<div class="t" style="left:161.5px;top:743.22px;width:40px;font-size:11.5px;line-height:11.5px;color:#9c9c9c;text-align:center;">10</div>
<div style="left:192px;top:780.5px;width:31px;height:1px;background:#9c9c9c;"></div>
<div class="t" style="left:161.5px;top:775.12px;width:40px;font-size:11.5px;line-height:11.5px;color:#9c9c9c;text-align:center;">5</div>
<div style="left:192px;top:812px;width:31px;height:1px;background:#f4f4f4;"></div>
<div style="left:192px;top:813px;width:31px;height:1px;background:rgba(240,240,240,0.45);"></div>
<div class="t" style="left:161.5px;top:806.92px;width:40px;font-size:11.5px;line-height:11.5px;color:#9c9c9c;text-align:center;">0</div>
<div style="left:192px;top:843.5px;width:31px;height:1px;background:#9c9c9c;"></div>
<div class="t" style="left:161.5px;top:838.52px;width:40px;font-size:11.5px;line-height:11.5px;color:#9c9c9c;text-align:center;">-5</div>
<div style="left:192px;top:875.5px;width:31px;height:1px;background:#9c9c9c;"></div>
<div class="t" style="left:161.5px;top:870.22px;width:40px;font-size:11.5px;line-height:11.5px;color:#9c9c9c;text-align:center;">-10</div>
<div style="left:192px;top:906.5px;width:31px;height:1px;background:#9c9c9c;"></div>
<div class="t" style="left:161.5px;top:901.42px;width:40px;font-size:11.5px;line-height:11.5px;color:#9c9c9c;text-align:center;">-20</div>
<div style="left:192px;top:938.5px;width:31px;height:1px;background:#9c9c9c;"></div>
<div class="t" style="left:161.5px;top:933.22px;width:40px;font-size:11.5px;line-height:11.5px;color:#9c9c9c;text-align:center;">-30</div>
<div style="left:192px;top:969.5px;width:31px;height:1px;background:#9c9c9c;"></div>
<div class="t" style="left:161.5px;top:964.22px;width:40px;font-size:11.5px;line-height:11.5px;color:#9c9c9c;text-align:center;">-50</div>
<div style="left:190.4px;top:967px;width:33px;height:68px;background:linear-gradient(to bottom,#8e8e8e 0%,#b8b8b8 1.5%,#cbcbcb 3%,#cbcbcb 17%,#8a8a8a 17%,#8a8a8a 21%,#a8a8a8 21%,#a8a8a8 22.6%,#8c8c8c 22.6%,#8c8c8c 30.5%,#a5a5a5 30.5%,#a5a5a5 32.2%,#9c9c9c 32.2%,#9c9c9c 38.8%,#c9c9c9 38.8%,#c9c9c9 46.8%,#ffffff 46.8%,#ffffff 51.8%,#cecece 51.8%,#cecece 59%,#a9a9a9 59%,#a9a9a9 60.3%,#c8c8c8 60.3%,#c8c8c8 67.3%,#a9a9a9 67.3%,#a9a9a9 68.5%,#e6e6e6 68.5%,#e6e6e6 76.3%,#b0b0b0 76.3%,#b0b0b0 77.5%,#dadada 77.5%,#dadada 82%,#b2b2b2 82%,#b2b2b2 95%,#9a9a9a 98.5%,#8a8a8a 100%);border-radius:1.5px;box-shadow:3px 3px 4px rgba(0,0,0,.35);"></div>
<div class="t" style="left:155.5px;top:1033.06px;width:100px;font-size:18px;line-height:18px;color:#fafafa;text-align:center;">CH 11</div>
<div style="left:254px;top:561px;width:80px;height:63px;background:#dcdcdc;"></div>
<div class="t" style="left:254px;top:583.66px;width:80px;font-size:18px;line-height:18px;color:#000;text-align:center;">CH 12</div>
<div style="left:254px;top:624px;width:80px;height:28px;background:#28292e;box-shadow:inset 0 0 0 2px #6b605e;"></div>
<div style="left:294px;top:624px;width:1.6px;height:28px;background:#f0f0f0;"></div>
<div style="left:254px;top:652px;width:80px;height:48px;background:#561717;"></div>
<div class="t" style="left:254px;top:667.66px;width:80px;font-size:18px;line-height:18px;color:#ece4e4;text-align:center;">MUTE</div>
<div style="left:254px;top:700px;width:80px;height:351px;background:#28292e;"></div>
<div style="left:324.2px;top:700px;width:2.8px;height:15px;background:#6a1a1a;"></div>
<div style="left:324.2px;top:715px;width:2.8px;height:102px;background:#734416;"></div>
<div style="left:324.2px;top:817px;width:2.8px;height:234px;background:#2a3a1a;"></div>
<div style="left:331px;top:700px;width:3px;height:74.5px;background:#ff2418;"></div>
<div style="left:331px;top:808px;width:3px;height:75px;background:#ff2418;"></div>
<div class="t" style="left:258.8px;top:695.22px;width:60px;font-size:19px;line-height:19px;color:#f0f0f0;text-align:center;letter-spacing:-1px">-&#8734;</div>
<div style="left:288px;top:749px;width:7px;height:220px;background:#000;"></div>
<div style="left:276px;top:748.5px;width:31px;height:1px;background:#9c9c9c;"></div>
<div class="t" style="left:245.5px;top:743.22px;width:40px;font-size:11.5px;line-height:11.5px;color:#9c9c9c;text-align:center;">10</div>
<div style="left:276px;top:780.5px;width:31px;height:1px;background:#9c9c9c;"></div>
<div class="t" style="left:245.5px;top:775.12px;width:40px;font-size:11.5px;line-height:11.5px;color:#9c9c9c;text-align:center;">5</div>
<div style="left:276px;top:812px;width:31px;height:1px;background:#f4f4f4;"></div>
<div style="left:276px;top:813px;width:31px;height:1px;background:rgba(240,240,240,0.45);"></div>
<div class="t" style="left:245.5px;top:806.92px;width:40px;font-size:11.5px;line-height:11.5px;color:#9c9c9c;text-align:center;">0</div>
<div style="left:276px;top:843.5px;width:31px;height:1px;background:#9c9c9c;"></div>
<div class="t" style="left:245.5px;top:838.52px;width:40px;font-size:11.5px;line-height:11.5px;color:#9c9c9c;text-align:center;">-5</div>
<div style="left:276px;top:875.5px;width:31px;height:1px;background:#9c9c9c;"></div>
<div class="t" style="left:245.5px;top:870.22px;width:40px;font-size:11.5px;line-height:11.5px;color:#9c9c9c;text-align:center;">-10</div>
<div style="left:276px;top:906.5px;width:31px;height:1px;background:#9c9c9c;"></div>
<div class="t" style="left:245.5px;top:901.42px;width:40px;font-size:11.5px;line-height:11.5px;color:#9c9c9c;text-align:center;">-20</div>
<div style="left:276px;top:938.5px;width:31px;height:1px;background:#9c9c9c;"></div>
<div class="t" style="left:245.5px;top:933.22px;width:40px;font-size:11.5px;line-height:11.5px;color:#9c9c9c;text-align:center;">-30</div>
<div style="left:276px;top:969.5px;width:31px;height:1px;background:#9c9c9c;"></div>
<div class="t" style="left:245.5px;top:964.22px;width:40px;font-size:11.5px;line-height:11.5px;color:#9c9c9c;text-align:center;">-50</div>
<div style="left:274.4px;top:967px;width:33px;height:68px;background:linear-gradient(to bottom,#8e8e8e 0%,#b8b8b8 1.5%,#cbcbcb 3%,#cbcbcb 17%,#8a8a8a 17%,#8a8a8a 21%,#a8a8a8 21%,#a8a8a8 22.6%,#8c8c8c 22.6%,#8c8c8c 30.5%,#a5a5a5 30.5%,#a5a5a5 32.2%,#9c9c9c 32.2%,#9c9c9c 38.8%,#c9c9c9 38.8%,#c9c9c9 46.8%,#ffffff 46.8%,#ffffff 51.8%,#cecece 51.8%,#cecece 59%,#a9a9a9 59%,#a9a9a9 60.3%,#c8c8c8 60.3%,#c8c8c8 67.3%,#a9a9a9 67.3%,#a9a9a9 68.5%,#e6e6e6 68.5%,#e6e6e6 76.3%,#b0b0b0 76.3%,#b0b0b0 77.5%,#dadada 77.5%,#dadada 82%,#b2b2b2 82%,#b2b2b2 95%,#9a9a9a 98.5%,#8a8a8a 100%);border-radius:1.5px;box-shadow:3px 3px 4px rgba(0,0,0,.35);"></div>
<div class="t" style="left:239.5px;top:1033.06px;width:100px;font-size:18px;line-height:18px;color:#fafafa;text-align:center;">CH 12</div>
<div style="left:338px;top:561px;width:80px;height:63px;background:#dcdcdc;"></div>
<div class="t" style="left:338px;top:583.66px;width:80px;font-size:18px;line-height:18px;color:#000;text-align:center;">CH 13</div>
<div style="left:338px;top:624px;width:80px;height:28px;background:#28292e;box-shadow:inset 0 0 0 2px #6b605e;"></div>
<div style="left:378px;top:624px;width:1.6px;height:28px;background:#f0f0f0;"></div>
<div style="left:338px;top:652px;width:80px;height:48px;background:#561717;"></div>
<div class="t" style="left:338px;top:667.66px;width:80px;font-size:18px;line-height:18px;color:#ece4e4;text-align:center;">MUTE</div>
<div style="left:338px;top:700px;width:80px;height:351px;background:#28292e;"></div>
<div style="left:408.2px;top:700px;width:2.8px;height:15px;background:#6a1a1a;"></div>
<div style="left:408.2px;top:715px;width:2.8px;height:102px;background:#734416;"></div>
<div style="left:408.2px;top:817px;width:2.8px;height:234px;background:#2a3a1a;"></div>
<div style="left:415px;top:700px;width:3px;height:74.5px;background:#ff2418;"></div>
<div style="left:415px;top:808px;width:3px;height:75px;background:#ff2418;"></div>
<div class="t" style="left:342.8px;top:695.22px;width:60px;font-size:19px;line-height:19px;color:#f0f0f0;text-align:center;letter-spacing:-1px">-&#8734;</div>
<div style="left:372px;top:749px;width:7px;height:220px;background:#000;"></div>
<div style="left:360px;top:748.5px;width:31px;height:1px;background:#9c9c9c;"></div>
<div class="t" style="left:329.5px;top:743.22px;width:40px;font-size:11.5px;line-height:11.5px;color:#9c9c9c;text-align:center;">10</div>
<div style="left:360px;top:780.5px;width:31px;height:1px;background:#9c9c9c;"></div>
<div class="t" style="left:329.5px;top:775.12px;width:40px;font-size:11.5px;line-height:11.5px;color:#9c9c9c;text-align:center;">5</div>
<div style="left:360px;top:812px;width:31px;height:1px;background:#f4f4f4;"></div>
<div style="left:360px;top:813px;width:31px;height:1px;background:rgba(240,240,240,0.45);"></div>
<div class="t" style="left:329.5px;top:806.92px;width:40px;font-size:11.5px;line-height:11.5px;color:#9c9c9c;text-align:center;">0</div>
<div style="left:360px;top:843.5px;width:31px;height:1px;background:#9c9c9c;"></div>
<div class="t" style="left:329.5px;top:838.52px;width:40px;font-size:11.5px;line-height:11.5px;color:#9c9c9c;text-align:center;">-5</div>
<div style="left:360px;top:875.5px;width:31px;height:1px;background:#9c9c9c;"></div>
<div class="t" style="left:329.5px;top:870.22px;width:40px;font-size:11.5px;line-height:11.5px;color:#9c9c9c;text-align:center;">-10</div>
<div style="left:360px;top:906.5px;width:31px;height:1px;background:#9c9c9c;"></div>
<div class="t" style="left:329.5px;top:901.42px;width:40px;font-size:11.5px;line-height:11.5px;color:#9c9c9c;text-align:center;">-20</div>
<div style="left:360px;top:938.5px;width:31px;height:1px;background:#9c9c9c;"></div>
<div class="t" style="left:329.5px;top:933.22px;width:40px;font-size:11.5px;line-height:11.5px;color:#9c9c9c;text-align:center;">-30</div>
<div style="left:360px;top:969.5px;width:31px;height:1px;background:#9c9c9c;"></div>
<div class="t" style="left:329.5px;top:964.22px;width:40px;font-size:11.5px;line-height:11.5px;color:#9c9c9c;text-align:center;">-50</div>
<div style="left:358.4px;top:967px;width:33px;height:68px;background:linear-gradient(to bottom,#8e8e8e 0%,#b8b8b8 1.5%,#cbcbcb 3%,#cbcbcb 17%,#8a8a8a 17%,#8a8a8a 21%,#a8a8a8 21%,#a8a8a8 22.6%,#8c8c8c 22.6%,#8c8c8c 30.5%,#a5a5a5 30.5%,#a5a5a5 32.2%,#9c9c9c 32.2%,#9c9c9c 38.8%,#c9c9c9 38.8%,#c9c9c9 46.8%,#ffffff 46.8%,#ffffff 51.8%,#cecece 51.8%,#cecece 59%,#a9a9a9 59%,#a9a9a9 60.3%,#c8c8c8 60.3%,#c8c8c8 67.3%,#a9a9a9 67.3%,#a9a9a9 68.5%,#e6e6e6 68.5%,#e6e6e6 76.3%,#b0b0b0 76.3%,#b0b0b0 77.5%,#dadada 77.5%,#dadada 82%,#b2b2b2 82%,#b2b2b2 95%,#9a9a9a 98.5%,#8a8a8a 100%);border-radius:1.5px;box-shadow:3px 3px 4px rgba(0,0,0,.35);"></div>
<div class="t" style="left:323.5px;top:1033.06px;width:100px;font-size:18px;line-height:18px;color:#fafafa;text-align:center;">CH 13</div>
<div style="left:422px;top:561px;width:80px;height:63px;background:#dcdcdc;"></div>
<div class="t" style="left:422px;top:583.66px;width:80px;font-size:18px;line-height:18px;color:#000;text-align:center;">CH 14</div>
<div style="left:422px;top:624px;width:80px;height:28px;background:#28292e;box-shadow:inset 0 0 0 2px #6b605e;"></div>
<div style="left:462px;top:624px;width:1.6px;height:28px;background:#f0f0f0;"></div>
<div style="left:422px;top:652px;width:80px;height:48px;background:#561717;"></div>
<div class="t" style="left:422px;top:667.66px;width:80px;font-size:18px;line-height:18px;color:#ece4e4;text-align:center;">MUTE</div>
<div style="left:422px;top:700px;width:80px;height:351px;background:#28292e;"></div>
<div style="left:492.2px;top:700px;width:2.8px;height:15px;background:#6a1a1a;"></div>
<div style="left:492.2px;top:715px;width:2.8px;height:102px;background:#734416;"></div>
<div style="left:492.2px;top:817px;width:2.8px;height:234px;background:#2a3a1a;"></div>
<div style="left:499px;top:700px;width:3px;height:74.5px;background:#ff2418;"></div>
<div style="left:499px;top:808px;width:3px;height:75px;background:#ff2418;"></div>
<div class="t" style="left:426.8px;top:695.22px;width:60px;font-size:19px;line-height:19px;color:#f0f0f0;text-align:center;letter-spacing:-1px">-&#8734;</div>
<div style="left:456px;top:749px;width:7px;height:220px;background:#000;"></div>
<div style="left:444px;top:748.5px;width:31px;height:1px;background:#9c9c9c;"></div>
<div class="t" style="left:413.5px;top:743.22px;width:40px;font-size:11.5px;line-height:11.5px;color:#9c9c9c;text-align:center;">10</div>
<div style="left:444px;top:780.5px;width:31px;height:1px;background:#9c9c9c;"></div>
<div class="t" style="left:413.5px;top:775.12px;width:40px;font-size:11.5px;line-height:11.5px;color:#9c9c9c;text-align:center;">5</div>
<div style="left:444px;top:812px;width:31px;height:1px;background:#f4f4f4;"></div>
<div style="left:444px;top:813px;width:31px;height:1px;background:rgba(240,240,240,0.45);"></div>
<div class="t" style="left:413.5px;top:806.92px;width:40px;font-size:11.5px;line-height:11.5px;color:#9c9c9c;text-align:center;">0</div>
<div style="left:444px;top:843.5px;width:31px;height:1px;background:#9c9c9c;"></div>
<div class="t" style="left:413.5px;top:838.52px;width:40px;font-size:11.5px;line-height:11.5px;color:#9c9c9c;text-align:center;">-5</div>
<div style="left:444px;top:875.5px;width:31px;height:1px;background:#9c9c9c;"></div>
<div class="t" style="left:413.5px;top:870.22px;width:40px;font-size:11.5px;line-height:11.5px;color:#9c9c9c;text-align:center;">-10</div>
<div style="left:444px;top:906.5px;width:31px;height:1px;background:#9c9c9c;"></div>
<div class="t" style="left:413.5px;top:901.42px;width:40px;font-size:11.5px;line-height:11.5px;color:#9c9c9c;text-align:center;">-20</div>
<div style="left:444px;top:938.5px;width:31px;height:1px;background:#9c9c9c;"></div>
<div class="t" style="left:413.5px;top:933.22px;width:40px;font-size:11.5px;line-height:11.5px;color:#9c9c9c;text-align:center;">-30</div>
<div style="left:444px;top:969.5px;width:31px;height:1px;background:#9c9c9c;"></div>
<div class="t" style="left:413.5px;top:964.22px;width:40px;font-size:11.5px;line-height:11.5px;color:#9c9c9c;text-align:center;">-50</div>
<div style="left:442.4px;top:967px;width:33px;height:68px;background:linear-gradient(to bottom,#8e8e8e 0%,#b8b8b8 1.5%,#cbcbcb 3%,#cbcbcb 17%,#8a8a8a 17%,#8a8a8a 21%,#a8a8a8 21%,#a8a8a8 22.6%,#8c8c8c 22.6%,#8c8c8c 30.5%,#a5a5a5 30.5%,#a5a5a5 32.2%,#9c9c9c 32.2%,#9c9c9c 38.8%,#c9c9c9 38.8%,#c9c9c9 46.8%,#ffffff 46.8%,#ffffff 51.8%,#cecece 51.8%,#cecece 59%,#a9a9a9 59%,#a9a9a9 60.3%,#c8c8c8 60.3%,#c8c8c8 67.3%,#a9a9a9 67.3%,#a9a9a9 68.5%,#e6e6e6 68.5%,#e6e6e6 76.3%,#b0b0b0 76.3%,#b0b0b0 77.5%,#dadada 77.5%,#dadada 82%,#b2b2b2 82%,#b2b2b2 95%,#9a9a9a 98.5%,#8a8a8a 100%);border-radius:1.5px;box-shadow:3px 3px 4px rgba(0,0,0,.35);"></div>
<div class="t" style="left:407.5px;top:1033.06px;width:100px;font-size:18px;line-height:18px;color:#fafafa;text-align:center;">CH 14</div>
<div style="left:506px;top:561px;width:80px;height:63px;background:#dcdcdc;"></div>
<div class="t" style="left:506px;top:583.66px;width:80px;font-size:18px;line-height:18px;color:#000;text-align:center;">CH 15</div>
<div style="left:506px;top:624px;width:80px;height:28px;background:#28292e;box-shadow:inset 0 0 0 2px #6b605e;"></div>
<div style="left:546px;top:624px;width:1.6px;height:28px;background:#f0f0f0;"></div>
<div style="left:506px;top:652px;width:80px;height:48px;background:#561717;"></div>
<div class="t" style="left:506px;top:667.66px;width:80px;font-size:18px;line-height:18px;color:#ece4e4;text-align:center;">MUTE</div>
<div style="left:506px;top:700px;width:80px;height:351px;background:#28292e;"></div>
<div style="left:576.2px;top:700px;width:2.8px;height:15px;background:#6a1a1a;"></div>
<div style="left:576.2px;top:715px;width:2.8px;height:102px;background:#734416;"></div>
<div style="left:576.2px;top:817px;width:2.8px;height:234px;background:#2a3a1a;"></div>
<div style="left:583px;top:700px;width:3px;height:74.5px;background:#ff2418;"></div>
<div style="left:583px;top:808px;width:3px;height:75px;background:#ff2418;"></div>
<div class="t" style="left:510.8px;top:695.22px;width:60px;font-size:19px;line-height:19px;color:#f0f0f0;text-align:center;letter-spacing:-1px">-&#8734;</div>
<div style="left:540px;top:749px;width:7px;height:220px;background:#000;"></div>
<div style="left:528px;top:748.5px;width:31px;height:1px;background:#9c9c9c;"></div>
<div class="t" style="left:497.5px;top:743.22px;width:40px;font-size:11.5px;line-height:11.5px;color:#9c9c9c;text-align:center;">10</div>
<div style="left:528px;top:780.5px;width:31px;height:1px;background:#9c9c9c;"></div>
<div class="t" style="left:497.5px;top:775.12px;width:40px;font-size:11.5px;line-height:11.5px;color:#9c9c9c;text-align:center;">5</div>
<div style="left:528px;top:812px;width:31px;height:1px;background:#f4f4f4;"></div>
<div style="left:528px;top:813px;width:31px;height:1px;background:rgba(240,240,240,0.45);"></div>
<div class="t" style="left:497.5px;top:806.92px;width:40px;font-size:11.5px;line-height:11.5px;color:#9c9c9c;text-align:center;">0</div>
<div style="left:528px;top:843.5px;width:31px;height:1px;background:#9c9c9c;"></div>
<div class="t" style="left:497.5px;top:838.52px;width:40px;font-size:11.5px;line-height:11.5px;color:#9c9c9c;text-align:center;">-5</div>
<div style="left:528px;top:875.5px;width:31px;height:1px;background:#9c9c9c;"></div>
<div class="t" style="left:497.5px;top:870.22px;width:40px;font-size:11.5px;line-height:11.5px;color:#9c9c9c;text-align:center;">-10</div>
<div style="left:528px;top:906.5px;width:31px;height:1px;background:#9c9c9c;"></div>
<div class="t" style="left:497.5px;top:901.42px;width:40px;font-size:11.5px;line-height:11.5px;color:#9c9c9c;text-align:center;">-20</div>
<div style="left:528px;top:938.5px;width:31px;height:1px;background:#9c9c9c;"></div>
<div class="t" style="left:497.5px;top:933.22px;width:40px;font-size:11.5px;line-height:11.5px;color:#9c9c9c;text-align:center;">-30</div>
<div style="left:528px;top:969.5px;width:31px;height:1px;background:#9c9c9c;"></div>
<div class="t" style="left:497.5px;top:964.22px;width:40px;font-size:11.5px;line-height:11.5px;color:#9c9c9c;text-align:center;">-50</div>
<div style="left:526.4px;top:967px;width:33px;height:68px;background:linear-gradient(to bottom,#8e8e8e 0%,#b8b8b8 1.5%,#cbcbcb 3%,#cbcbcb 17%,#8a8a8a 17%,#8a8a8a 21%,#a8a8a8 21%,#a8a8a8 22.6%,#8c8c8c 22.6%,#8c8c8c 30.5%,#a5a5a5 30.5%,#a5a5a5 32.2%,#9c9c9c 32.2%,#9c9c9c 38.8%,#c9c9c9 38.8%,#c9c9c9 46.8%,#ffffff 46.8%,#ffffff 51.8%,#cecece 51.8%,#cecece 59%,#a9a9a9 59%,#a9a9a9 60.3%,#c8c8c8 60.3%,#c8c8c8 67.3%,#a9a9a9 67.3%,#a9a9a9 68.5%,#e6e6e6 68.5%,#e6e6e6 76.3%,#b0b0b0 76.3%,#b0b0b0 77.5%,#dadada 77.5%,#dadada 82%,#b2b2b2 82%,#b2b2b2 95%,#9a9a9a 98.5%,#8a8a8a 100%);border-radius:1.5px;box-shadow:3px 3px 4px rgba(0,0,0,.35);"></div>
<div class="t" style="left:491.5px;top:1033.06px;width:100px;font-size:18px;line-height:18px;color:#fafafa;text-align:center;">CH 15</div>
<div style="left:590px;top:561px;width:80px;height:63px;background:#dcdcdc;"></div>
<div class="t" style="left:590px;top:583.66px;width:80px;font-size:18px;line-height:18px;color:#000;text-align:center;">CH 16</div>
<div style="left:590px;top:624px;width:80px;height:28px;background:#28292e;box-shadow:inset 0 0 0 2px #6b605e;"></div>
<div style="left:630px;top:624px;width:1.6px;height:28px;background:#f0f0f0;"></div>
<div style="left:590px;top:652px;width:80px;height:48px;background:#561717;"></div>
<div class="t" style="left:590px;top:667.66px;width:80px;font-size:18px;line-height:18px;color:#ece4e4;text-align:center;">MUTE</div>
<div style="left:590px;top:700px;width:80px;height:351px;background:#28292e;"></div>
<div style="left:660.2px;top:700px;width:2.8px;height:15px;background:#6a1a1a;"></div>
<div style="left:660.2px;top:715px;width:2.8px;height:102px;background:#734416;"></div>
<div style="left:660.2px;top:817px;width:2.8px;height:234px;background:#2a3a1a;"></div>
<div style="left:667px;top:700px;width:3px;height:74.5px;background:#ff2418;"></div>
<div style="left:667px;top:808px;width:3px;height:75px;background:#ff2418;"></div>
<div class="t" style="left:594.8px;top:695.22px;width:60px;font-size:19px;line-height:19px;color:#f0f0f0;text-align:center;letter-spacing:-1px">-&#8734;</div>
<div style="left:624px;top:749px;width:7px;height:220px;background:#000;"></div>
<div style="left:612px;top:748.5px;width:31px;height:1px;background:#9c9c9c;"></div>
<div class="t" style="left:581.5px;top:743.22px;width:40px;font-size:11.5px;line-height:11.5px;color:#9c9c9c;text-align:center;">10</div>
<div style="left:612px;top:780.5px;width:31px;height:1px;background:#9c9c9c;"></div>
<div class="t" style="left:581.5px;top:775.12px;width:40px;font-size:11.5px;line-height:11.5px;color:#9c9c9c;text-align:center;">5</div>
<div style="left:612px;top:812px;width:31px;height:1px;background:#f4f4f4;"></div>
<div style="left:612px;top:813px;width:31px;height:1px;background:rgba(240,240,240,0.45);"></div>
<div class="t" style="left:581.5px;top:806.92px;width:40px;font-size:11.5px;line-height:11.5px;color:#9c9c9c;text-align:center;">0</div>
<div style="left:612px;top:843.5px;width:31px;height:1px;background:#9c9c9c;"></div>
<div class="t" style="left:581.5px;top:838.52px;width:40px;font-size:11.5px;line-height:11.5px;color:#9c9c9c;text-align:center;">-5</div>
<div style="left:612px;top:875.5px;width:31px;height:1px;background:#9c9c9c;"></div>
<div class="t" style="left:581.5px;top:870.22px;width:40px;font-size:11.5px;line-height:11.5px;color:#9c9c9c;text-align:center;">-10</div>
<div style="left:612px;top:906.5px;width:31px;height:1px;background:#9c9c9c;"></div>
<div class="t" style="left:581.5px;top:901.42px;width:40px;font-size:11.5px;line-height:11.5px;color:#9c9c9c;text-align:center;">-20</div>
<div style="left:612px;top:938.5px;width:31px;height:1px;background:#9c9c9c;"></div>
<div class="t" style="left:581.5px;top:933.22px;width:40px;font-size:11.5px;line-height:11.5px;color:#9c9c9c;text-align:center;">-30</div>
<div style="left:612px;top:969.5px;width:31px;height:1px;background:#9c9c9c;"></div>
<div class="t" style="left:581.5px;top:964.22px;width:40px;font-size:11.5px;line-height:11.5px;color:#9c9c9c;text-align:center;">-50</div>
<div style="left:610.4px;top:967px;width:33px;height:68px;background:linear-gradient(to bottom,#8e8e8e 0%,#b8b8b8 1.5%,#cbcbcb 3%,#cbcbcb 17%,#8a8a8a 17%,#8a8a8a 21%,#a8a8a8 21%,#a8a8a8 22.6%,#8c8c8c 22.6%,#8c8c8c 30.5%,#a5a5a5 30.5%,#a5a5a5 32.2%,#9c9c9c 32.2%,#9c9c9c 38.8%,#c9c9c9 38.8%,#c9c9c9 46.8%,#ffffff 46.8%,#ffffff 51.8%,#cecece 51.8%,#cecece 59%,#a9a9a9 59%,#a9a9a9 60.3%,#c8c8c8 60.3%,#c8c8c8 67.3%,#a9a9a9 67.3%,#a9a9a9 68.5%,#e6e6e6 68.5%,#e6e6e6 76.3%,#b0b0b0 76.3%,#b0b0b0 77.5%,#dadada 77.5%,#dadada 82%,#b2b2b2 82%,#b2b2b2 95%,#9a9a9a 98.5%,#8a8a8a 100%);border-radius:1.5px;box-shadow:3px 3px 4px rgba(0,0,0,.35);"></div>
<div class="t" style="left:575.5px;top:1033.06px;width:100px;font-size:18px;line-height:18px;color:#fafafa;text-align:center;">CH 16</div>
<div style="left:674.2px;top:67.3px;width:67.8px;height:94.4px;background:#10285a;border-radius:2.5px;box-shadow:inset 0 0 0 1.8px #544e62;"></div>
<div style="left:746.8px;top:67.3px;width:66.8px;height:94.4px;background:#1d5813;border-radius:2.5px;box-shadow:inset 0 0 0 1.8px #544e62;"></div>
<div class="t" style="left:674.2px;top:142.16px;width:67.8px;font-size:18px;line-height:18px;color:#fff;text-align:center;">0.20 s</div>
<div class="t" style="left:746.8px;top:94.39px;width:66.8px;font-size:18.2px;line-height:18.2px;color:#f4f4f4;text-align:center;">Vocal</div>
<div class="t" style="left:746.8px;top:116.29px;width:66.8px;font-size:18.2px;line-height:18.2px;color:#f4f4f4;text-align:center;">Verb</div>
<div style="left:674.2px;top:178.5px;width:67.8px;height:81.7px;background:#10285a;border-radius:2.5px;box-shadow:inset 0 0 0 1.8px #544e62;"></div>
<div style="left:746.8px;top:178.5px;width:66.8px;height:81.7px;background:#1d5813;border-radius:2.5px;box-shadow:inset 0 0 0 1.8px #544e62;"></div>
<div class="t" style="left:674.2px;top:242.86px;width:67.8px;font-size:18px;line-height:18px;color:#fff;text-align:center;">0.20 s</div>
<div class="t" style="left:746.8px;top:210.59px;width:66.8px;font-size:18.2px;line-height:18.2px;color:#f4f4f4;text-align:center;">DDL</div>
<div style="left:674.2px;top:277.8px;width:67.8px;height:80.4px;background:#10285a;border-radius:2.5px;box-shadow:inset 0 0 0 1.8px #544e62;"></div>
<div style="left:746.8px;top:277.8px;width:66.8px;height:80.4px;background:#1d5813;border-radius:2.5px;box-shadow:inset 0 0 0 1.8px #544e62;"></div>
<div class="t" style="left:674.2px;top:340.66px;width:67.8px;font-size:18px;line-height:18px;color:#fff;text-align:center;">0 ms</div>
<div class="t" style="left:746.8px;top:297.89px;width:66.8px;font-size:18.2px;line-height:18.2px;color:#f4f4f4;text-align:center;">3 Tap</div>
<div class="t" style="left:746.8px;top:320.69px;width:66.8px;font-size:18.2px;line-height:18.2px;color:#f4f4f4;text-align:center;">DDL</div>
<div style="left:674.2px;top:376.4px;width:67.8px;height:80.8px;background:#10285a;border-radius:2.5px;box-shadow:inset 0 0 0 1.8px #544e62;"></div>
<div style="left:746.8px;top:376.4px;width:66.8px;height:80.8px;background:#1d5813;border-radius:2.5px;box-shadow:inset 0 0 0 1.8px #544e62;"></div>
<div class="t" style="left:674.2px;top:440.16px;width:67.8px;font-size:18px;line-height:18px;color:#fff;text-align:center;">0.20 s</div>
<div class="t" style="left:746.8px;top:397.39px;width:66.8px;font-size:18.2px;line-height:18.2px;color:#f4f4f4;text-align:center;">Snare</div>
<div class="t" style="left:746.8px;top:418.99px;width:66.8px;font-size:18.2px;line-height:18.2px;color:#f4f4f4;text-align:center;">Verb</div>
<div style="left:674.2px;top:475.2px;width:67.8px;height:69px;background:#10285a;border-radius:2.5px;box-shadow:inset 0 0 0 1.8px #544e62;"></div>
<div style="left:746.8px;top:475.2px;width:66.8px;height:69px;background:#10285a;border-radius:2.5px;box-shadow:inset 0 0 0 1.8px #544e62;"></div>
<div class="t" style="left:669.7px;top:489.92px;width:67.8px;font-size:18.4px;line-height:18.4px;color:#f4f4f4;text-align:center;">1 Tap</div>
<div class="t" style="left:674.2px;top:510.89px;width:67.8px;font-size:18.2px;line-height:18.2px;color:#f4f4f4;text-align:center;">Delay</div>
<div class="t" style="left:741.8px;top:489.92px;width:66.8px;font-size:18.4px;line-height:18.4px;color:#f4f4f4;text-align:center;">3 Tap</div>
<div class="t" style="left:746.8px;top:510.89px;width:66.8px;font-size:18.2px;line-height:18.2px;color:#f4f4f4;text-align:center;">Delay</div>
<svg style="left:0;top:0" width="1920" height="1053"><path d="M693.17 129.33 A21.40 21.40 0 1 1 723.43 129.33" fill="none" stroke="#1a505a" stroke-width="10.00"/><path d="M707.95 114.55 L696.00 126.50" stroke="#42e2f6" stroke-width="5"/><path d="M696.00 126.50 L689.63 132.87" stroke="#42e2f6" stroke-width="1.5"/><path d="M695.50 232.40 A18.10 18.10 0 1 1 721.10 232.40" fill="none" stroke="#1a505a" stroke-width="9.80"/><path d="M707.95 219.95 L698.26 229.64" stroke="#42e2f6" stroke-width="5"/><path d="M698.26 229.64 L692.04 235.86" stroke="#42e2f6" stroke-width="1.5"/><path d="M695.50 330.70 A18.10 18.10 0 1 1 721.10 330.70" fill="none" stroke="#1a505a" stroke-width="9.80"/><path d="M707.95 318.25 L698.26 327.94" stroke="#42e2f6" stroke-width="5"/><path d="M698.26 327.94 L692.04 334.16" stroke="#42e2f6" stroke-width="1.5"/><path d="M695.50 429.90 A18.10 18.10 0 1 1 721.10 429.90" fill="none" stroke="#1a505a" stroke-width="9.80"/><path d="M707.95 417.45 L698.26 427.14" stroke="#42e2f6" stroke-width="5"/><path d="M698.26 427.14 L692.04 433.36" stroke="#42e2f6" stroke-width="1.5"/></svg>
<div style="left:831px;top:68.7px;width:78.5px;height:42.6px;background:#dcdcdc;border-radius:3px;box-shadow:inset 0 0 0 1.5px #544e62;"></div>
<div class="t" style="left:831px;top:69.76px;width:78.5px;font-size:18px;line-height:18px;color:#000;text-align:center;">MAINS</div>
<div class="t" style="left:831px;top:91.46px;width:78.5px;font-size:18px;line-height:18px;color:#000;text-align:center;">L R</div>
<div style="left:926.7px;top:68.7px;width:90.7px;height:42.6px;background:#1a786a;border-radius:3px;box-shadow:inset 0 0 0 1.5px #544e62;"></div>
<div class="t" style="left:926.7px;top:69.76px;width:90.7px;font-size:18px;line-height:18px;color:#000;text-align:center;">MON</div>
<div class="t" style="left:926.7px;top:91.46px;width:90.7px;font-size:18px;line-height:18px;color:#000;text-align:center;">MAINS</div>
<div style="left:830.3px;top:117px;width:79.7px;height:32px;background:#561717;border-radius:4px;"></div>
<div class="t" style="left:830.3px;top:124.36px;width:79.7px;font-size:18px;line-height:18px;color:#ece4e4;text-align:center;">MUTE</div>
<div class="t" style="left:906.3px;top:122.22px;width:60px;font-size:27.5px;line-height:27.5px;color:#fafafa;text-align:center;">L&nbsp;R</div>
<div class="t" style="left:840px;top:146.92px;width:60px;font-size:19px;line-height:19px;color:#f0f0f0;text-align:center;letter-spacing:-1px">-&#8734;</div>
<div style="left:914px;top:155.8px;width:20px;height:14.1px;background:#6a1a1a;"></div>
<div style="left:914px;top:169.9px;width:20px;height:116.3px;background:#734416;"></div>
<div style="left:914px;top:286.2px;width:20px;height:258.8px;background:#2a3a1a;"></div>
<div style="left:937.9px;top:155.8px;width:20px;height:14.1px;background:#6a1a1a;"></div>
<div style="left:937.9px;top:169.9px;width:20px;height:116.3px;background:#734416;"></div>
<div style="left:937.9px;top:286.2px;width:20px;height:258.8px;background:#2a3a1a;"></div>
<div style="left:869px;top:209.3px;width:8px;height:243.7px;background:#000;"></div>
<div style="left:853px;top:207.5px;width:39px;height:1.2px;background:#9c9c9c;"></div>
<div class="t" style="left:821.2px;top:202.42px;width:40px;font-size:11.5px;line-height:11.5px;color:#9c9c9c;text-align:center;">10</div>
<div style="left:853px;top:242.5px;width:39px;height:1.2px;background:#9c9c9c;"></div>
<div class="t" style="left:821.2px;top:237.22px;width:40px;font-size:11.5px;line-height:11.5px;color:#9c9c9c;text-align:center;">5</div>
<div style="left:853px;top:278px;width:39px;height:1px;background:#f4f4f4;"></div>
<div style="left:853px;top:279px;width:39px;height:1px;background:rgba(240,240,240,0.45);"></div>
<div class="t" style="left:821.2px;top:273.52px;width:40px;font-size:11.5px;line-height:11.5px;color:#9c9c9c;text-align:center;">0</div>
<div style="left:853px;top:313.5px;width:39px;height:1.2px;background:#9c9c9c;"></div>
<div class="t" style="left:821.2px;top:308.62px;width:40px;font-size:11.5px;line-height:11.5px;color:#9c9c9c;text-align:center;">-5</div>
<div style="left:853px;top:349.5px;width:39px;height:1.2px;background:#9c9c9c;"></div>
<div class="t" style="left:821.2px;top:343.72px;width:40px;font-size:11.5px;line-height:11.5px;color:#9c9c9c;text-align:center;">-10</div>
<div style="left:853px;top:384.5px;width:39px;height:1.2px;background:#9c9c9c;"></div>
<div class="t" style="left:821.2px;top:379.62px;width:40px;font-size:11.5px;line-height:11.5px;color:#9c9c9c;text-align:center;">-20</div>
<div style="left:853px;top:419.5px;width:39px;height:1.2px;background:#9c9c9c;"></div>
<div class="t" style="left:821.2px;top:414.52px;width:40px;font-size:11.5px;line-height:11.5px;color:#9c9c9c;text-align:center;">-30</div>
<div style="left:853px;top:454.5px;width:39px;height:1.2px;background:#9c9c9c;"></div>
<div class="t" style="left:821.2px;top:449.22px;width:40px;font-size:11.5px;line-height:11.5px;color:#9c9c9c;text-align:center;">-50</div>
<div style="left:852px;top:451px;width:37.7px;height:78.7px;background:linear-gradient(to bottom,#8e8e8e 0%,#b8b8b8 1.5%,#cbcbcb 3%,#cbcbcb 17%,#8a8a8a 17%,#8a8a8a 21%,#a8a8a8 21%,#a8a8a8 22.6%,#8c8c8c 22.6%,#8c8c8c 30.5%,#a5a5a5 30.5%,#a5a5a5 32.2%,#9c9c9c 32.2%,#9c9c9c 38.8%,#c9c9c9 38.8%,#c9c9c9 46.8%,#ffffff 46.8%,#ffffff 51.8%,#cecece 51.8%,#cecece 59%,#a9a9a9 59%,#a9a9a9 60.3%,#c8c8c8 60.3%,#c8c8c8 67.3%,#a9a9a9 67.3%,#a9a9a9 68.5%,#e6e6e6 68.5%,#e6e6e6 76.3%,#b0b0b0 76.3%,#b0b0b0 77.5%,#dadada 77.5%,#dadada 82%,#b2b2b2 82%,#b2b2b2 95%,#9a9a9a 98.5%,#8a8a8a 100%);border-radius:1.5px;box-shadow:3px 3px 4px rgba(0,0,0,.35);"></div>
<div style="left:963.2px;top:117.5px;width:54.2px;height:43.3px;background:#44dd22;border-radius:3px;box-shadow:inset 0 0 0 1.5px #544e62;"></div>
<div class="t" style="left:963.2px;top:129.76px;width:54.2px;font-size:18px;line-height:18px;color:#000;text-align:center;">CD</div>
<div class="t" style="left:960.5px;top:160.96px;width:60px;font-size:16px;line-height:16px;color:#f0f0f0;text-align:center;letter-spacing:-1px">-&#8734;</div>
<div style="left:988.7px;top:206px;width:6.4px;height:225.2px;background:#000;"></div>
<div style="left:982px;top:204.5px;width:20px;height:1.2px;background:#9c9c9c;"></div>
<div class="t" style="left:953.3px;top:199.22px;width:40px;font-size:11.5px;line-height:11.5px;color:#9c9c9c;text-align:center;">10</div>
<div style="left:982px;top:235.5px;width:20px;height:1.2px;background:#9c9c9c;"></div>
<div class="t" style="left:953.3px;top:230.42px;width:40px;font-size:11.5px;line-height:11.5px;color:#9c9c9c;text-align:center;">5</div>
<div style="left:982px;top:267px;width:20px;height:1px;background:#f4f4f4;"></div>
<div style="left:982px;top:268px;width:20px;height:1px;background:rgba(240,240,240,0.45);"></div>
<div class="t" style="left:953.3px;top:262.42px;width:40px;font-size:11.5px;line-height:11.5px;color:#9c9c9c;text-align:center;">0</div>
<div style="left:982px;top:298.5px;width:20px;height:1.2px;background:#9c9c9c;"></div>
<div class="t" style="left:953.3px;top:293.42px;width:40px;font-size:11.5px;line-height:11.5px;color:#9c9c9c;text-align:center;">-5</div>
<div style="left:982px;top:330.5px;width:20px;height:1.2px;background:#9c9c9c;"></div>
<div class="t" style="left:953.3px;top:325.22px;width:40px;font-size:11.5px;line-height:11.5px;color:#9c9c9c;text-align:center;">-10</div>
<div style="left:982px;top:361.5px;width:20px;height:1.2px;background:#9c9c9c;"></div>
<div class="t" style="left:953.3px;top:356.52px;width:40px;font-size:11.5px;line-height:11.5px;color:#9c9c9c;text-align:center;">-20</div>
<div style="left:982px;top:393.5px;width:20px;height:1.2px;background:#9c9c9c;"></div>
<div class="t" style="left:953.3px;top:388.62px;width:40px;font-size:11.5px;line-height:11.5px;color:#9c9c9c;text-align:center;">-30</div>
<div style="left:982px;top:424.5px;width:20px;height:1.2px;background:#9c9c9c;"></div>
<div class="t" style="left:953.3px;top:419.32px;width:40px;font-size:11.5px;line-height:11.5px;color:#9c9c9c;text-align:center;">-50</div>
<div style="left:977.7px;top:429.2px;width:26.3px;height:54.9px;background:linear-gradient(to bottom,#8e8e8e 0%,#b8b8b8 1.5%,#cbcbcb 3%,#cbcbcb 17%,#8a8a8a 17%,#8a8a8a 21%,#a8a8a8 21%,#a8a8a8 22.6%,#8c8c8c 22.6%,#8c8c8c 30.5%,#a5a5a5 30.5%,#a5a5a5 32.2%,#9c9c9c 32.2%,#9c9c9c 38.8%,#c9c9c9 38.8%,#c9c9c9 46.8%,#ffffff 46.8%,#ffffff 51.8%,#cecece 51.8%,#cecece 59%,#a9a9a9 59%,#a9a9a9 60.3%,#c8c8c8 60.3%,#c8c8c8 67.3%,#a9a9a9 67.3%,#a9a9a9 68.5%,#e6e6e6 68.5%,#e6e6e6 76.3%,#b0b0b0 76.3%,#b0b0b0 77.5%,#dadada 77.5%,#dadada 82%,#b2b2b2 82%,#b2b2b2 95%,#9a9a9a 98.5%,#8a8a8a 100%);border-radius:1.5px;box-shadow:3px 3px 4px rgba(0,0,0,.35);"></div>
<div style="left:1028px;top:67.3px;width:144px;height:44.9px;box-shadow:inset 0 0 0 1.5px #4b4f5e;"></div>
<div class="t" style="left:1028px;top:69.86px;width:144px;font-size:14.7px;line-height:14.7px;color:#f0f0f0;text-align:center;">Ch 1-8</div>
<div style="left:1030px;top:88px;width:140px;height:6px;background:#6a1a1a;"></div>
<div style="left:1030px;top:94px;width:140px;height:6px;background:#734416;"></div>
<div style="left:1030px;top:100px;width:140px;height:12px;background:#2a3a1a;"></div>
<div style="left:1045.5px;top:88px;width:1.2px;height:24px;background:#2b3140;"></div>
<div style="left:1063.5px;top:88px;width:1.2px;height:24px;background:#2b3140;"></div>
<div style="left:1081.5px;top:88px;width:1.2px;height:24px;background:#2b3140;"></div>
<div style="left:1099.5px;top:88px;width:1.2px;height:24px;background:#2b3140;"></div>
<div style="left:1116.5px;top:88px;width:1.2px;height:24px;background:#2b3140;"></div>
<div style="left:1133.5px;top:88px;width:1.2px;height:24px;background:#2b3140;"></div>
<div style="left:1151.5px;top:88px;width:1.2px;height:24px;background:#2b3140;"></div>
<div style="left:1178px;top:67.3px;width:142.5px;height:44.9px;box-shadow:inset 0 0 0 1.5px #4b4f5e;"></div>
<div class="t" style="left:1178px;top:69.86px;width:142.5px;font-size:14.7px;line-height:14.7px;color:#f0f0f0;text-align:center;">Ch 9-16</div>
<div style="left:1179.5px;top:88px;width:139px;height:6px;background:#6a1a1a;"></div>
<div style="left:1179.5px;top:94px;width:139px;height:6px;background:#734416;"></div>
<div style="left:1179.5px;top:100px;width:139px;height:12px;background:#2a3a1a;"></div>
<div style="left:1194.5px;top:88px;width:1.2px;height:24px;background:#2b3140;"></div>
<div style="left:1213.5px;top:88px;width:1.2px;height:24px;background:#2b3140;"></div>
<div style="left:1231.5px;top:88px;width:1.2px;height:24px;background:#2b3140;"></div>
<div style="left:1248.5px;top:88px;width:1.2px;height:24px;background:#2b3140;"></div>
<div style="left:1266.5px;top:88px;width:1.2px;height:24px;background:#2b3140;"></div>
<div style="left:1283.5px;top:88px;width:1.2px;height:24px;background:#2b3140;"></div>
<div style="left:1301.5px;top:88px;width:1.2px;height:24px;background:#2b3140;"></div>
<div style="left:1326.9px;top:67.3px;width:143.1px;height:44.9px;box-shadow:inset 0 0 0 1.5px #4b4f5e;"></div>
<div class="t" style="left:1326.9px;top:69.86px;width:143.1px;font-size:14.7px;line-height:14.7px;color:#f0f0f0;text-align:center;">Aux/FX Ret</div>
<div style="left:1327.8px;top:88px;width:139.2px;height:6px;background:#6a1a1a;"></div>
<div style="left:1327.8px;top:94px;width:139.2px;height:6px;background:#734416;"></div>
<div style="left:1327.8px;top:100px;width:139.2px;height:12px;background:#2a3a1a;"></div>
<div style="left:1354.5px;top:88px;width:1.2px;height:24px;background:#2b3140;"></div>
<div style="left:1383.5px;top:88px;width:1.2px;height:24px;background:#2b3140;"></div>
<div style="left:1411.5px;top:88px;width:1.2px;height:24px;background:#2b3140;"></div>
<div style="left:1439.5px;top:88px;width:1.2px;height:24px;background:#2b3140;"></div>
<div style="left:1476px;top:67.3px;width:143px;height:44.9px;box-shadow:inset 0 0 0 1.5px #4b4f5e;"></div>
<div class="t" style="left:1476px;top:69.86px;width:143px;font-size:14.7px;line-height:14.7px;color:#f0f0f0;text-align:center;">Mix</div>
<div style="left:1477.8px;top:88px;width:106.2px;height:6px;background:#6a1a1a;"></div>
<div style="left:1477.8px;top:94px;width:106.2px;height:6px;background:#734416;"></div>
<div style="left:1477.8px;top:100px;width:106.2px;height:12px;background:#2a3a1a;"></div>
<div style="left:1495.5px;top:88px;width:1.2px;height:24px;background:#2b3140;"></div>
<div style="left:1512.5px;top:88px;width:1.2px;height:24px;background:#2b3140;"></div>
<div style="left:1530.5px;top:88px;width:1.2px;height:24px;background:#2b3140;"></div>
<div style="left:1548.5px;top:88px;width:1.2px;height:24px;background:#2b3140;"></div>
<div style="left:1566.5px;top:88px;width:1.2px;height:24px;background:#2b3140;"></div>
<div style="left:1625.3px;top:67.3px;width:143.7px;height:44.9px;box-shadow:inset 0 0 0 1.5px #4b4f5e;"></div>
<div class="t" style="left:1625.3px;top:69.86px;width:143.7px;font-size:14.7px;line-height:14.7px;color:#f0f0f0;text-align:center;">FX Snd/Main</div>
<div style="left:1626.9px;top:88px;width:106.1px;height:6px;background:#6a1a1a;"></div>
<div style="left:1626.9px;top:94px;width:106.1px;height:6px;background:#734416;"></div>
<div style="left:1626.9px;top:100px;width:106.1px;height:12px;background:#2a3a1a;"></div>
<div style="left:1643.5px;top:88px;width:1.2px;height:24px;background:#2b3140;"></div>
<div style="left:1662.5px;top:88px;width:1.2px;height:24px;background:#2b3140;"></div>
<div style="left:1680.5px;top:88px;width:1.2px;height:24px;background:#2b3140;"></div>
<div style="left:1698.5px;top:88px;width:1.2px;height:24px;background:#2b3140;"></div>
<div style="left:1774.7px;top:67.3px;width:142.8px;height:44.9px;box-shadow:inset 0 0 0 1.5px #4b4f5e;"></div>
<div class="t" style="left:1774.7px;top:69.86px;width:142.8px;font-size:14.7px;line-height:14.7px;color:#f0f0f0;text-align:center;">DCA</div>
<div style="left:1776.2px;top:88px;width:71.8px;height:6px;background:#6a1a1a;"></div>
<div style="left:1776.2px;top:94px;width:71.8px;height:6px;background:#734416;"></div>
<div style="left:1776.2px;top:100px;width:71.8px;height:12px;background:#2a3a1a;"></div>
<div style="left:1793.5px;top:88px;width:1.2px;height:24px;background:#2b3140;"></div>
<div style="left:1812.5px;top:88px;width:1.2px;height:24px;background:#2b3140;"></div>
<div style="left:1830.5px;top:88px;width:1.2px;height:24px;background:#2b3140;"></div>
<div style="left:1022.3px;top:116.8px;width:100.7px;height:64.8px;background:#55555f;border-radius:4px;box-shadow:inset 0 0 0 0px #55555f;"></div>
<div class="t" style="left:1022.3px;top:138.92px;width:100.7px;font-size:19px;line-height:19px;color:#dcdcdc;text-align:center;letter-spacing:0.5px">Off</div>
<div style="left:1022.3px;top:183.2px;width:100.7px;height:64.2px;background:#55555f;border-radius:4px;box-shadow:inset 0 0 0 0px #55555f;"></div>
<div class="t" style="left:1022.3px;top:204.92px;width:100.7px;font-size:19px;line-height:19px;color:#dcdcdc;text-align:center;">LC</div>
<div class="t" style="left:1022.3px;top:255.66px;width:100.7px;font-size:18px;line-height:18px;color:#fafafa;text-align:center;">RTA</div>
<div style="left:1021.9px;top:286.2px;width:101.2px;height:66.1px;background:#55555f;border-radius:4px;box-shadow:inset 0 0 0 0px #55555f;"></div>
<div class="t" style="left:1033.4px;top:309.96px;width:60px;font-size:18px;line-height:18px;color:#dcdcdc;text-align:left;">CH 01</div>
<svg style="left:0;top:0" width="1920" height="1053"><path d="M1105.9 305.4 H1112.2 V320.5 H1119.2 L1109.1 333.3 L1099 320.5 H1105.9 Z" fill="#ececec"/></svg>
<div style="left:1021.9px;top:356.8px;width:101.2px;height:67px;background:#2a2a2a;border-radius:4px;box-shadow:inset 0 0 0 2px #11ee11;"></div>
<div class="t" style="left:1021.9px;top:381.42px;width:101.2px;font-size:19px;line-height:19px;color:#fafafa;text-align:center;">Follow</div>
<div style="left:1021.9px;top:428.4px;width:101.2px;height:65.9px;background:#55555f;border-radius:4px;box-shadow:inset 0 0 0 0px #55555f;"></div>
<div class="t" style="left:1021.9px;top:452.92px;width:101.2px;font-size:19px;line-height:19px;color:#dcdcdc;text-align:center;">Post</div>
<div style="left:1127px;top:116.6px;width:783.3px;height:292.3px;background:linear-gradient(#232323,#1b1b1b);"></div>
<svg style="left:0;top:0" width="1920" height="1053"><path d="M1174.5 292.5 L1200 267.5 Q1212 258 1228 256.5 L1174.5 256.5 Z" fill="#4e5656"/><circle cx="1174.5" cy="255.7" r="14.3" fill="#687575" fill-opacity="0.66"/><circle cx="1282.4" cy="255.7" r="14.3" fill="#687575" fill-opacity="0.66"/><circle cx="1390.6" cy="255.7" r="14.3" fill="#687575" fill-opacity="0.66"/><circle cx="1498.8" cy="255.7" r="14.3" fill="#687575" fill-opacity="0.66"/><circle cx="1607.4" cy="255.7" r="14.3" fill="#687575" fill-opacity="0.66"/><rect x="1173.60" y="130.30" width="723.80" height="1.8" fill="#a3b0b0"/><rect x="1173.60" y="171.90" width="723.80" height="1.8" fill="#a3b0b0"/><rect x="1173.60" y="213.70" width="723.80" height="1.8" fill="#a3b0b0"/><rect x="1173.60" y="254.90" width="723.80" height="1.8" fill="#a3b0b0"/><rect x="1173.60" y="296.60" width="723.80" height="1.8" fill="#a3b0b0"/><rect x="1173.60" y="338.50" width="723.80" height="1.8" fill="#a3b0b0"/><rect x="1173.60" y="380.00" width="723.80" height="1.8" fill="#a3b0b0"/><rect x="1173.60" y="130.30" width="1.8" height="251.50" fill="#a3b0b0"/><rect x="1246.05" y="130.30" width="1.8" height="251.50" fill="#a3b0b0"/><rect x="1288.43" y="130.30" width="1.8" height="251.50" fill="#a3b0b0"/><rect x="1318.50" y="130.30" width="1.8" height="251.50" fill="#a3b0b0"/><rect x="1341.82" y="130.30" width="1.8" height="251.50" fill="#a3b0b0"/><rect x="1414.27" y="130.30" width="1.8" height="251.50" fill="#a3b0b0"/><rect x="1456.65" y="130.30" width="1.8" height="251.50" fill="#a3b0b0"/><rect x="1486.72" y="130.30" width="1.8" height="251.50" fill="#a3b0b0"/><rect x="1510.04" y="130.30" width="1.8" height="251.50" fill="#a3b0b0"/><rect x="1529.10" y="130.30" width="1.8" height="251.50" fill="#a3b0b0"/><rect x="1559.17" y="130.30" width="1.8" height="251.50" fill="#a3b0b0"/><rect x="1582.49" y="130.30" width="1.8" height="251.50" fill="#a3b0b0"/><rect x="1654.94" y="130.30" width="1.8" height="251.50" fill="#a3b0b0"/><rect x="1697.32" y="130.30" width="1.8" height="251.50" fill="#a3b0b0"/><rect x="1727.39" y="130.30" width="1.8" height="251.50" fill="#a3b0b0"/><rect x="1750.71" y="130.30" width="1.8" height="251.50" fill="#a3b0b0"/><rect x="1769.77" y="130.30" width="1.8" height="251.50" fill="#a3b0b0"/><rect x="1799.84" y="130.30" width="1.8" height="251.50" fill="#a3b0b0"/><rect x="1823.16" y="130.30" width="1.8" height="251.50" fill="#a3b0b0"/><rect x="1895.61" y="130.30" width="1.8" height="251.50" fill="#a3b0b0"/><rect x="1174.5" y="254.2" width="722.0" height="3" fill="#00ff00"/><circle cx="1282.4" cy="255.7" r="19.2" fill="none" stroke="#dedede" stroke-width="4.3"/></svg>
<div style="left:1192px;top:343.8px;width:179.5px;height:94.7px;background:rgba(8,8,8,0.82);"></div>
<div class="t" style="left:1191px;top:349.76px;width:200px;font-size:18px;line-height:18px;color:#fafafa;text-align:left;">Band 1</div>
<div class="t" style="left:1191px;top:371.76px;width:200px;font-size:18px;line-height:18px;color:#fafafa;text-align:left;">Gain: 0.0 dB</div>
<div class="t" style="left:1191px;top:393.76px;width:200px;font-size:18px;line-height:18px;color:#fafafa;text-align:left;">Freq: 56.4 Hz</div>
<div class="t" style="left:1191px;top:415.76px;width:200px;font-size:18px;line-height:18px;color:#fafafa;text-align:left;">Q: 3.5</div>
<div class="t" style="left:1118.5px;top:122.16px;width:60px;font-size:18px;line-height:18px;color:#fafafa;text-align:center;">15</div>
<div class="t" style="left:1118.5px;top:163.76px;width:60px;font-size:18px;line-height:18px;color:#fafafa;text-align:center;">10</div>
<div class="t" style="left:1118.5px;top:205.56px;width:60px;font-size:18px;line-height:18px;color:#fafafa;text-align:center;">5</div>
<div class="t" style="left:1118.5px;top:246.76px;width:60px;font-size:18px;line-height:18px;color:#fafafa;text-align:center;">0</div>
<div class="t" style="left:1118.5px;top:288.46px;width:60px;font-size:18px;line-height:18px;color:#fafafa;text-align:center;">-5</div>
<div class="t" style="left:1118.5px;top:330.36px;width:60px;font-size:18px;line-height:18px;color:#fafafa;text-align:center;">-10</div>
<div class="t" style="left:1118.5px;top:371.86px;width:60px;font-size:18px;line-height:18px;color:#fafafa;text-align:center;">-15</div>
<div class="t" style="left:1134.2px;top:388.76px;width:80px;font-size:18px;line-height:18px;color:#fafafa;text-align:center;">20</div>
<div class="t" style="left:1206.65px;top:388.76px;width:80px;font-size:18px;line-height:18px;color:#fafafa;text-align:center;">40</div>
<div class="t" style="left:1249.03px;top:388.76px;width:80px;font-size:18px;line-height:18px;color:#fafafa;text-align:center;">60</div>
<div class="t" style="left:1298.52px;top:388.76px;width:80px;font-size:18px;line-height:18px;color:#fafafa;text-align:center;">100</div>
<div class="t" style="left:1370.97px;top:388.76px;width:80px;font-size:18px;line-height:18px;color:#fafafa;text-align:center;">200</div>
<div class="t" style="left:1443.42px;top:388.76px;width:80px;font-size:18px;line-height:18px;color:#fafafa;text-align:center;">400</div>
<div class="t" style="left:1485.8px;top:388.76px;width:80px;font-size:18px;line-height:18px;color:#fafafa;text-align:center;">600</div>
<div class="t" style="left:1543.09px;top:388.76px;width:80px;font-size:18px;line-height:18px;color:#fafafa;text-align:center;">1k</div>
<div class="t" style="left:1615.54px;top:388.76px;width:80px;font-size:18px;line-height:18px;color:#fafafa;text-align:center;">2k</div>
<div class="t" style="left:1657.92px;top:388.76px;width:80px;font-size:18px;line-height:18px;color:#fafafa;text-align:center;">3k</div>
<div class="t" style="left:1687.99px;top:388.76px;width:80px;font-size:18px;line-height:18px;color:#fafafa;text-align:center;">4k</div>
<div class="t" style="left:1730.37px;top:388.76px;width:80px;font-size:18px;line-height:18px;color:#fafafa;text-align:center;">6k</div>
<div class="t" style="left:1779.86px;top:388.76px;width:80px;font-size:18px;line-height:18px;color:#fafafa;text-align:center;">10k</div>
<div class="t" style="left:1852.31px;top:388.76px;width:80px;font-size:18px;line-height:18px;color:#fafafa;text-align:center;">20k</div>
<div style="left:1263.3px;top:413.6px;width:517.9px;height:81px;border-radius:3px;box-shadow:inset 0 0 0 2px #16889a;"></div>
<div style="left:1267.8px;top:417.8px;width:50.4px;height:73.2px;background:#55555f;border-radius:4px;box-shadow:inset 0 0 0 0px #55555f;"></div>
<div style="left:1331.1px;top:417.8px;width:100.8px;height:73.2px;background:#55555f;border-radius:4px;box-shadow:inset 0 0 0 0px #55555f;"></div>
<div style="left:1727.3px;top:417.8px;width:50.7px;height:73.2px;background:#55555f;border-radius:4px;box-shadow:inset 0 0 0 0px #55555f;"></div>
<div class="t" style="left:1351px;top:445.76px;width:60px;font-size:18px;line-height:18px;color:#dcdcdc;text-align:left;">PEQ</div>
<svg style="left:0;top:0" width="1920" height="1053"><path d="M1299.5 441.6 L1279.5 454.6 L1299.5 467.6" fill="none" stroke="#fafafa" stroke-width="2.6"/><path d="M1740 441.6 L1760 454.6 L1740 467.6" fill="none" stroke="#fafafa" stroke-width="2.6"/><path d="M1414.8 440.4 H1420.8 V455 H1428 L1417.8 467.8 L1407.6 455 H1414.8 Z" fill="#ececec"/><path d="M1474.03 465.87 A15.80 15.80 0 1 1 1496.37 465.87" fill="none" stroke="#1a505a" stroke-width="9.60"/><path d="M1474.03 465.87 A15.80 15.80 0 0 1 1469.45 455.94" fill="none" stroke="#42e2f6" stroke-width="9.60"/><path d="M1485.20 454.70 L1473.74 455.60" stroke="#42e2f6" stroke-width="4.8"/><path d="M1568.13 465.87 A15.80 15.80 0 1 1 1590.47 465.87" fill="none" stroke="#1a505a" stroke-width="9.60"/><path d="M1568.13 465.87 A15.80 15.80 0 1 1 1591.40 444.54" fill="none" stroke="#42e2f6" stroke-width="9.60"/><path d="M1580.83 453.41 L1588.11 447.31" stroke="#42e2f6" stroke-width="4.8"/><path d="M1662.93 465.87 A15.80 15.80 0 1 1 1685.27 465.87" fill="none" stroke="#1a505a" stroke-width="9.60"/><path d="M1662.93 465.87 A15.80 15.80 0 0 1 1674.10 438.90" fill="none" stroke="#42e2f6" stroke-width="9.60"/><path d="M1674.10 453.70 L1674.10 443.20" stroke="#42e2f6" stroke-width="4.2"/></svg>
<div class="t" style="left:1435.2px;top:414.71px;width:100px;font-size:14.4px;line-height:14.4px;color:#fafafa;text-align:center;">Freq</div>
<div class="t" style="left:1435.2px;top:474.71px;width:100px;font-size:14.4px;line-height:14.4px;color:#fafafa;text-align:center;">56.4 Hz</div>
<div class="t" style="left:1529.3px;top:414.71px;width:100px;font-size:14.4px;line-height:14.4px;color:#fafafa;text-align:center;">Q</div>
<div class="t" style="left:1529.3px;top:474.71px;width:100px;font-size:14.4px;line-height:14.4px;color:#fafafa;text-align:center;">3.5</div>
<div class="t" style="left:1623.6px;top:414.71px;width:100px;font-size:14.4px;line-height:14.4px;color:#fafafa;text-align:center;">Gain</div>
<div class="t" style="left:1623.6px;top:474.71px;width:100px;font-size:14.4px;line-height:14.4px;color:#fafafa;text-align:center;">0.0 dB</div>
<div style="left:974.3px;top:500px;width:100.7px;height:44.5px;background:#55555f;border-radius:4px;box-shadow:inset 0 0 0 0px #55555f;"></div>
<div class="t" style="left:974.3px;top:512.52px;width:100.7px;font-size:19px;line-height:19px;color:#dcdcdc;text-align:center;">Fine</div>
<div style="left:1079.5px;top:500px;width:100.5px;height:44.5px;background:#561717;border-radius:4px;box-shadow:inset 0 0 0 0px #561717;"></div>
<div class="t" style="left:1079.5px;top:512.81px;width:100.5px;font-size:14.4px;line-height:14.4px;color:#f4f0f0;text-align:center;">Mute Enable</div>
<div style="left:1185.8px;top:500px;width:100px;height:44.5px;background:#55555f;border-radius:4px;box-shadow:inset 0 0 0 0px #55555f;"></div>
<div style="left:1185.8px;top:501px;width:17.2px;height:42px;background:#dcdcdc;"></div>
<div class="t" style="left:1202.8px;top:513.02px;width:83px;font-size:18.4px;line-height:18.4px;color:#dcdcdc;text-align:center;">Bus 1</div>
<div style="left:1291px;top:500px;width:100px;height:44.5px;background:#55555f;border-radius:4px;box-shadow:inset 0 0 0 0px #55555f;"></div>
<div style="left:1291px;top:501px;width:17.2px;height:42px;background:#dcdcdc;"></div>
<div class="t" style="left:1308px;top:513.02px;width:83px;font-size:18.4px;line-height:18.4px;color:#dcdcdc;text-align:center;">Bus 2</div>
<div style="left:1396.2px;top:500px;width:100px;height:44.5px;background:#55555f;border-radius:4px;box-shadow:inset 0 0 0 0px #55555f;"></div>
<div style="left:1396.2px;top:501px;width:17.2px;height:42px;background:#dcdcdc;"></div>
<div class="t" style="left:1413.2px;top:513.02px;width:83px;font-size:18.4px;line-height:18.4px;color:#dcdcdc;text-align:center;">Bus 3</div>
<div style="left:1501.4px;top:500px;width:100px;height:44.5px;background:#55555f;border-radius:4px;box-shadow:inset 0 0 0 0px #55555f;"></div>
<div style="left:1501.4px;top:501px;width:17.2px;height:42px;background:#dcdcdc;"></div>
<div class="t" style="left:1518.4px;top:513.02px;width:83px;font-size:18.4px;line-height:18.4px;color:#dcdcdc;text-align:center;">Bus 4</div>
<div style="left:1606.6px;top:500px;width:100px;height:44.5px;background:#55555f;border-radius:4px;box-shadow:inset 0 0 0 0px #55555f;"></div>
<div style="left:1606.6px;top:501px;width:17.2px;height:42px;background:#dcdcdc;"></div>
<div class="t" style="left:1623.6px;top:513.02px;width:83px;font-size:18.4px;line-height:18.4px;color:#dcdcdc;text-align:center;">Bus 5</div>
<div style="left:1711.8px;top:500px;width:100px;height:44.5px;background:#55555f;border-radius:4px;box-shadow:inset 0 0 0 0px #55555f;"></div>
<div style="left:1711.8px;top:501px;width:17.2px;height:42px;background:#dcdcdc;"></div>
<div class="t" style="left:1728.8px;top:513.02px;width:83px;font-size:18.4px;line-height:18.4px;color:#dcdcdc;text-align:center;">Bus 6</div>
<div style="left:1814.3px;top:500px;width:103.2px;height:44.5px;background:#561717;border-radius:4px;box-shadow:inset 0 0 0 0px #561717;"></div>
<div class="t" style="left:1810.8px;top:501.76px;width:103.2px;font-size:18px;line-height:18px;color:#f0eaea;text-align:center;">MUTE</div>
<div class="t" style="left:1814.3px;top:523.46px;width:103.2px;font-size:18px;line-height:18px;color:#f0eaea;text-align:center;">VOX</div>
<div style="left:685px;top:560px;width:274.3px;height:22.6px;background:#1d5813;border-radius:3px;box-shadow:inset 0 0 0 1px #4b4f5e;"></div>
<div class="t" style="left:685px;top:562.93px;width:274.3px;font-size:17.8px;line-height:17.8px;color:#fafafa;text-align:center;letter-spacing:0.65px">CHANNELS ON/OFF</div>
<div style="left:685px;top:584.1px;width:34.3px;height:21.2px;background:#ffd200;border-radius:2px;box-shadow:inset 0 0 0 1px rgba(60,64,80,0.55);"></div>
<div class="t" style="left:685px;top:581.19px;width:34.3px;font-size:17.5px;line-height:17.5px;color:#000;text-align:center;">1</div>
<div style="left:719.3px;top:584.1px;width:34px;height:21.2px;background:#ffd200;border-radius:2px;box-shadow:inset 0 0 0 1px rgba(60,64,80,0.55);"></div>
<div class="t" style="left:719.3px;top:581.19px;width:34px;font-size:17.5px;line-height:17.5px;color:#000;text-align:center;">2</div>
<div style="left:753.3px;top:584.1px;width:34.3px;height:21.2px;background:#ffd200;border-radius:2px;box-shadow:inset 0 0 0 1px rgba(60,64,80,0.55);"></div>
<div class="t" style="left:753.3px;top:581.19px;width:34.3px;font-size:17.5px;line-height:17.5px;color:#000;text-align:center;">3</div>
<div style="left:787.6px;top:584.1px;width:34.1px;height:21.2px;background:#ffd200;border-radius:2px;box-shadow:inset 0 0 0 1px rgba(60,64,80,0.55);"></div>
<div class="t" style="left:787.6px;top:581.19px;width:34.1px;font-size:17.5px;line-height:17.5px;color:#000;text-align:center;">4</div>
<div style="left:821.7px;top:584.1px;width:34.3px;height:21.2px;background:#ffd200;border-radius:2px;box-shadow:inset 0 0 0 1px rgba(60,64,80,0.55);"></div>
<div class="t" style="left:821.7px;top:581.19px;width:34.3px;font-size:17.5px;line-height:17.5px;color:#000;text-align:center;">5</div>
<div style="left:856px;top:584.1px;width:34.1px;height:21.2px;background:#ffd200;border-radius:2px;box-shadow:inset 0 0 0 1px rgba(60,64,80,0.55);"></div>
<div class="t" style="left:856px;top:581.19px;width:34.1px;font-size:17.5px;line-height:17.5px;color:#000;text-align:center;">6</div>
<div style="left:890.1px;top:584.1px;width:34.6px;height:21.2px;background:#ffd200;border-radius:2px;box-shadow:inset 0 0 0 1px rgba(60,64,80,0.55);"></div>
<div class="t" style="left:890.1px;top:581.19px;width:34.6px;font-size:17.5px;line-height:17.5px;color:#000;text-align:center;">7</div>
<div style="left:924.7px;top:584.1px;width:34.6px;height:21.2px;background:#33d4cc;border-radius:2px;box-shadow:inset 0 0 0 1px rgba(60,64,80,0.55);"></div>
<div class="t" style="left:924.7px;top:581.19px;width:34.6px;font-size:17.5px;line-height:17.5px;color:#000;text-align:center;">8</div>
<div style="left:685px;top:605.3px;width:34.3px;height:20.9px;background:#e266dd;border-radius:2px;box-shadow:inset 0 0 0 1px rgba(60,64,80,0.55);"></div>
<div class="t" style="left:685px;top:602.79px;width:34.3px;font-size:17.5px;line-height:17.5px;color:#000;text-align:center;">9</div>
<div style="left:719.3px;top:605.3px;width:34px;height:20.9px;background:#e266dd;border-radius:2px;box-shadow:inset 0 0 0 1px rgba(60,64,80,0.55);"></div>
<div class="t" style="left:719.3px;top:602.79px;width:34px;font-size:17.5px;line-height:17.5px;color:#000;text-align:center;">10</div>
<div style="left:753.3px;top:605.3px;width:34.3px;height:20.9px;background:#e266dd;border-radius:2px;box-shadow:inset 0 0 0 1px rgba(60,64,80,0.55);"></div>
<div class="t" style="left:753.3px;top:602.79px;width:34.3px;font-size:17.5px;line-height:17.5px;color:#000;text-align:center;">11</div>
<div style="left:787.6px;top:605.3px;width:34.1px;height:20.9px;background:#e266dd;border-radius:2px;box-shadow:inset 0 0 0 1px rgba(60,64,80,0.55);"></div>
<div class="t" style="left:787.6px;top:602.79px;width:34.1px;font-size:17.5px;line-height:17.5px;color:#000;text-align:center;">12</div>
<div style="left:821.7px;top:605.3px;width:34.3px;height:20.9px;background:#2f66d4;border-radius:2px;box-shadow:inset 0 0 0 1px rgba(60,64,80,0.55);"></div>
<div class="t" style="left:821.7px;top:602.79px;width:34.3px;font-size:17.5px;line-height:17.5px;color:#fafafa;text-align:center;">13</div>
<div style="left:856px;top:605.3px;width:34.1px;height:20.9px;background:#2f66d4;border-radius:2px;box-shadow:inset 0 0 0 1px rgba(60,64,80,0.55);"></div>
<div class="t" style="left:856px;top:602.79px;width:34.1px;font-size:17.5px;line-height:17.5px;color:#fafafa;text-align:center;">14</div>
<div style="left:890.1px;top:605.3px;width:34.6px;height:20.9px;background:#2f66d4;border-radius:2px;box-shadow:inset 0 0 0 1px rgba(60,64,80,0.55);"></div>
<div class="t" style="left:890.1px;top:602.79px;width:34.6px;font-size:17.5px;line-height:17.5px;color:#fafafa;text-align:center;">15</div>
<div style="left:924.7px;top:605.3px;width:34.6px;height:20.9px;background:#2f66d4;border-radius:2px;box-shadow:inset 0 0 0 1px rgba(60,64,80,0.55);"></div>
<div class="t" style="left:924.7px;top:602.79px;width:34.6px;font-size:17.5px;line-height:17.5px;color:#fafafa;text-align:center;">16</div>
<div style="left:685px;top:626.2px;width:34.3px;height:20.3px;background:#44dd22;border-radius:2px;box-shadow:inset 0 0 0 1px rgba(60,64,80,0.55);"></div>
<div class="t" style="left:685px;top:623.09px;width:34.3px;font-size:17.5px;line-height:17.5px;color:#000;text-align:center;">S1</div>
<div style="left:719.3px;top:626.2px;width:34px;height:20.3px;background:#44dd22;border-radius:2px;box-shadow:inset 0 0 0 1px rgba(60,64,80,0.55);"></div>
<div class="t" style="left:719.3px;top:623.09px;width:34px;font-size:17.5px;line-height:17.5px;color:#000;text-align:center;">S2</div>
<div style="left:753.3px;top:626.2px;width:34.3px;height:20.3px;background:#44dd22;border-radius:2px;box-shadow:inset 0 0 0 1px rgba(60,64,80,0.55);"></div>
<div class="t" style="left:753.3px;top:623.09px;width:34.3px;font-size:17.5px;line-height:17.5px;color:#000;text-align:center;">S3</div>
<div style="left:787.6px;top:626.2px;width:34.1px;height:20.3px;background:#44dd22;border-radius:2px;box-shadow:inset 0 0 0 1px rgba(60,64,80,0.55);"></div>
<div class="t" style="left:787.6px;top:623.09px;width:34.1px;font-size:17.5px;line-height:17.5px;color:#000;text-align:center;">S4</div>
<div style="left:821.7px;top:626.2px;width:34.3px;height:20.3px;background:#44dd22;border-radius:2px;box-shadow:inset 0 0 0 1px rgba(60,64,80,0.55);"></div>
<div class="t" style="left:821.7px;top:623.09px;width:34.3px;font-size:17.5px;line-height:17.5px;color:#000;text-align:center;">R1</div>
<div style="left:856px;top:626.2px;width:34.1px;height:20.3px;background:#44dd22;border-radius:2px;box-shadow:inset 0 0 0 1px rgba(60,64,80,0.55);"></div>
<div class="t" style="left:856px;top:623.09px;width:34.1px;font-size:17.5px;line-height:17.5px;color:#000;text-align:center;">R2</div>
<div style="left:890.1px;top:626.2px;width:34.6px;height:20.3px;background:#44dd22;border-radius:2px;box-shadow:inset 0 0 0 1px rgba(60,64,80,0.55);"></div>
<div class="t" style="left:890.1px;top:623.09px;width:34.6px;font-size:17.5px;line-height:17.5px;color:#000;text-align:center;">R3</div>
<div style="left:924.7px;top:626.2px;width:34.6px;height:20.3px;background:#44dd22;border-radius:2px;box-shadow:inset 0 0 0 1px rgba(60,64,80,0.55);"></div>
<div class="t" style="left:924.7px;top:623.09px;width:34.6px;font-size:17.5px;line-height:17.5px;color:#000;text-align:center;">R4</div>
<div style="left:685px;top:646.5px;width:34.3px;height:22.1px;background:#33d4cc;border-radius:2px;box-shadow:inset 0 0 0 1px rgba(60,64,80,0.55);"></div>
<div class="t" style="left:685px;top:644.59px;width:34.3px;font-size:17.5px;line-height:17.5px;color:#000;text-align:center;">M1</div>
<div style="left:719.3px;top:646.5px;width:34px;height:22.1px;background:#33d4cc;border-radius:2px;box-shadow:inset 0 0 0 1px rgba(60,64,80,0.55);"></div>
<div class="t" style="left:719.3px;top:644.59px;width:34px;font-size:17.5px;line-height:17.5px;color:#000;text-align:center;">M2</div>
<div style="left:753.3px;top:646.5px;width:34.3px;height:22.1px;background:#33d4cc;border-radius:2px;box-shadow:inset 0 0 0 1px rgba(60,64,80,0.55);"></div>
<div class="t" style="left:753.3px;top:644.59px;width:34.3px;font-size:17.5px;line-height:17.5px;color:#000;text-align:center;">M3</div>
<div style="left:787.6px;top:646.5px;width:34.1px;height:22.1px;background:#33d4cc;border-radius:2px;box-shadow:inset 0 0 0 1px rgba(60,64,80,0.55);"></div>
<div class="t" style="left:787.6px;top:644.59px;width:34.1px;font-size:17.5px;line-height:17.5px;color:#000;text-align:center;">M4</div>
<div style="left:821.7px;top:646.5px;width:34.3px;height:22.1px;background:#33d4cc;border-radius:2px;box-shadow:inset 0 0 0 1px rgba(60,64,80,0.55);"></div>
<div class="t" style="left:821.7px;top:644.59px;width:34.3px;font-size:17.5px;line-height:17.5px;color:#000;text-align:center;">M5</div>
<div style="left:856px;top:646.5px;width:34.1px;height:22.1px;background:#33d4cc;border-radius:2px;box-shadow:inset 0 0 0 1px rgba(60,64,80,0.55);"></div>
<div class="t" style="left:856px;top:644.59px;width:34.1px;font-size:17.5px;line-height:17.5px;color:#000;text-align:center;">LF</div>
<div style="left:890.1px;top:646.5px;width:34.6px;height:22.1px;background:#dcdcdc;border-radius:2px;box-shadow:inset 0 0 0 1px rgba(60,64,80,0.55);"></div>
<div class="t" style="left:890.1px;top:644.59px;width:34.6px;font-size:17.5px;line-height:17.5px;color:#000;text-align:center;">CD</div>
<div style="left:924.7px;top:646.5px;width:34.6px;height:22.1px;background:#dcdcdc;border-radius:2px;box-shadow:inset 0 0 0 1px rgba(60,64,80,0.55);"></div>
<div class="t" style="left:924.7px;top:644.59px;width:34.6px;font-size:17.5px;line-height:17.5px;color:#000;text-align:center;">LR</div>
<div style="left:685px;top:584.1px;width:239.7px;height:21.2px;background:#ffd200;border-radius:2px;"></div>
<div class="t" style="left:685px;top:581.19px;width:34.3px;font-size:17.5px;line-height:17.5px;color:#000;text-align:center;">1</div>
<div class="t" style="left:719.3px;top:581.19px;width:34px;font-size:17.5px;line-height:17.5px;color:#000;text-align:center;">2</div>
<div class="t" style="left:753.3px;top:581.19px;width:34.3px;font-size:17.5px;line-height:17.5px;color:#000;text-align:center;">3</div>
<div class="t" style="left:787.6px;top:581.19px;width:34.1px;font-size:17.5px;line-height:17.5px;color:#000;text-align:center;">4</div>
<div class="t" style="left:821.7px;top:581.19px;width:34.3px;font-size:17.5px;line-height:17.5px;color:#000;text-align:center;">5</div>
<div class="t" style="left:856px;top:581.19px;width:34.1px;font-size:17.5px;line-height:17.5px;color:#000;text-align:center;">6</div>
<div class="t" style="left:890.1px;top:581.19px;width:34.6px;font-size:17.5px;line-height:17.5px;color:#000;text-align:center;">7</div>
<div style="left:686px;top:685.2px;width:65px;height:62.7px;background:#dcdcdc;"></div>
<div class="t" style="left:686px;top:706.76px;width:65px;font-size:18px;line-height:18px;color:#000;text-align:center;">DCA 1</div>
<div style="left:686px;top:747.9px;width:65px;height:28.5px;background:#28292e;"></div>
<div style="left:686px;top:776.4px;width:65px;height:47.5px;background:#561717;"></div>
<div class="t" style="left:686px;top:791.76px;width:65px;font-size:18px;line-height:18px;color:#ece4e4;text-align:center;">MUTE</div>
<div style="left:686px;top:823.9px;width:65px;height:226.9px;background:#28292e;"></div>
<div style="left:741px;top:823.9px;width:3px;height:14.2px;background:#6a1a1a;"></div>
<div style="left:741px;top:838.1px;width:3px;height:70.7px;background:#734416;"></div>
<div style="left:741px;top:908.8px;width:3px;height:142px;background:#2a3a1a;"></div>
<div class="t" style="left:683.5px;top:818.76px;width:60px;font-size:16px;line-height:16px;color:#f0f0f0;text-align:center;letter-spacing:-1px">-&#8734;</div>
<div style="left:712px;top:862.1px;width:6px;height:125.9px;background:#000;"></div>
<div style="left:706px;top:861.5px;width:19px;height:1px;background:#9c9c9c;"></div>
<div class="t" style="left:677.7px;top:856.32px;width:40px;font-size:11.5px;line-height:11.5px;color:#9c9c9c;text-align:center;">10</div>
<div style="left:706px;top:880.5px;width:19px;height:1px;background:#9c9c9c;"></div>
<div class="t" style="left:677.7px;top:875.42px;width:40px;font-size:11.5px;line-height:11.5px;color:#9c9c9c;text-align:center;">5</div>
<div style="left:706px;top:899px;width:19px;height:1px;background:#f4f4f4;"></div>
<div style="left:706px;top:900px;width:19px;height:1px;background:rgba(240,240,240,0.45);"></div>
<div class="t" style="left:677.7px;top:894.72px;width:40px;font-size:11.5px;line-height:11.5px;color:#9c9c9c;text-align:center;">0</div>
<div style="left:706px;top:918.5px;width:19px;height:1px;background:#9c9c9c;"></div>
<div class="t" style="left:677.7px;top:913.22px;width:40px;font-size:11.5px;line-height:11.5px;color:#9c9c9c;text-align:center;">-5</div>
<div style="left:706px;top:937.5px;width:19px;height:1px;background:#9c9c9c;"></div>
<div class="t" style="left:677.7px;top:932.52px;width:40px;font-size:11.5px;line-height:11.5px;color:#9c9c9c;text-align:center;">-10</div>
<div style="left:706px;top:956.5px;width:19px;height:1px;background:#9c9c9c;"></div>
<div class="t" style="left:677.7px;top:951.42px;width:40px;font-size:11.5px;line-height:11.5px;color:#9c9c9c;text-align:center;">-20</div>
<div style="left:706px;top:974.5px;width:19px;height:1px;background:#9c9c9c;"></div>
<div class="t" style="left:677.7px;top:969.52px;width:40px;font-size:11.5px;line-height:11.5px;color:#9c9c9c;text-align:center;">-30</div>
<div style="left:706px;top:993.5px;width:19px;height:1px;background:#9c9c9c;"></div>
<div class="t" style="left:677.7px;top:987.92px;width:40px;font-size:11.5px;line-height:11.5px;color:#9c9c9c;text-align:center;">-50</div>
<div style="left:702px;top:986px;width:25.6px;height:53px;background:linear-gradient(to bottom,#8e8e8e 0%,#b8b8b8 1.5%,#cbcbcb 3%,#cbcbcb 17%,#8a8a8a 17%,#8a8a8a 21%,#a8a8a8 21%,#a8a8a8 22.6%,#8c8c8c 22.6%,#8c8c8c 30.5%,#a5a5a5 30.5%,#a5a5a5 32.2%,#9c9c9c 32.2%,#9c9c9c 38.8%,#c9c9c9 38.8%,#c9c9c9 46.8%,#ffffff 46.8%,#ffffff 51.8%,#cecece 51.8%,#cecece 59%,#a9a9a9 59%,#a9a9a9 60.3%,#c8c8c8 60.3%,#c8c8c8 67.3%,#a9a9a9 67.3%,#a9a9a9 68.5%,#e6e6e6 68.5%,#e6e6e6 76.3%,#b0b0b0 76.3%,#b0b0b0 77.5%,#dadada 77.5%,#dadada 82%,#b2b2b2 82%,#b2b2b2 95%,#9a9a9a 98.5%,#8a8a8a 100%);border-radius:1.5px;box-shadow:3px 3px 4px rgba(0,0,0,.35);"></div>
<div class="t" style="left:664.5px;top:1035.33px;width:100px;font-size:14.5px;line-height:14.5px;color:#fafafa;text-align:center;">DCA 1</div>
<div style="left:755px;top:685.2px;width:65px;height:62.7px;background:#dcdcdc;"></div>
<div class="t" style="left:755px;top:706.76px;width:65px;font-size:18px;line-height:18px;color:#000;text-align:center;">DCA 2</div>
<div style="left:755px;top:747.9px;width:65px;height:28.5px;background:#28292e;"></div>
<div style="left:755px;top:776.4px;width:65px;height:47.5px;background:#561717;"></div>
<div class="t" style="left:755px;top:791.76px;width:65px;font-size:18px;line-height:18px;color:#ece4e4;text-align:center;">MUTE</div>
<div style="left:755px;top:823.9px;width:65px;height:226.9px;background:#28292e;"></div>
<div style="left:810px;top:823.9px;width:3px;height:14.2px;background:#6a1a1a;"></div>
<div style="left:810px;top:838.1px;width:3px;height:70.7px;background:#734416;"></div>
<div style="left:810px;top:908.8px;width:3px;height:142px;background:#2a3a1a;"></div>
<div class="t" style="left:752.5px;top:818.76px;width:60px;font-size:16px;line-height:16px;color:#f0f0f0;text-align:center;letter-spacing:-1px">-&#8734;</div>
<div style="left:781px;top:862.1px;width:6px;height:125.9px;background:#000;"></div>
<div style="left:775px;top:861.5px;width:19px;height:1px;background:#9c9c9c;"></div>
<div class="t" style="left:746.7px;top:856.32px;width:40px;font-size:11.5px;line-height:11.5px;color:#9c9c9c;text-align:center;">10</div>
<div style="left:775px;top:880.5px;width:19px;height:1px;background:#9c9c9c;"></div>
<div class="t" style="left:746.7px;top:875.42px;width:40px;font-size:11.5px;line-height:11.5px;color:#9c9c9c;text-align:center;">5</div>
<div style="left:775px;top:899px;width:19px;height:1px;background:#f4f4f4;"></div>
<div style="left:775px;top:900px;width:19px;height:1px;background:rgba(240,240,240,0.45);"></div>
<div class="t" style="left:746.7px;top:894.72px;width:40px;font-size:11.5px;line-height:11.5px;color:#9c9c9c;text-align:center;">0</div>
<div style="left:775px;top:918.5px;width:19px;height:1px;background:#9c9c9c;"></div>
<div class="t" style="left:746.7px;top:913.22px;width:40px;font-size:11.5px;line-height:11.5px;color:#9c9c9c;text-align:center;">-5</div>
<div style="left:775px;top:937.5px;width:19px;height:1px;background:#9c9c9c;"></div>
<div class="t" style="left:746.7px;top:932.52px;width:40px;font-size:11.5px;line-height:11.5px;color:#9c9c9c;text-align:center;">-10</div>
<div style="left:775px;top:956.5px;width:19px;height:1px;background:#9c9c9c;"></div>
<div class="t" style="left:746.7px;top:951.42px;width:40px;font-size:11.5px;line-height:11.5px;color:#9c9c9c;text-align:center;">-20</div>
<div style="left:775px;top:974.5px;width:19px;height:1px;background:#9c9c9c;"></div>
<div class="t" style="left:746.7px;top:969.52px;width:40px;font-size:11.5px;line-height:11.5px;color:#9c9c9c;text-align:center;">-30</div>
<div style="left:775px;top:993.5px;width:19px;height:1px;background:#9c9c9c;"></div>
<div class="t" style="left:746.7px;top:987.92px;width:40px;font-size:11.5px;line-height:11.5px;color:#9c9c9c;text-align:center;">-50</div>
<div style="left:771px;top:986px;width:25.6px;height:53px;background:linear-gradient(to bottom,#8e8e8e 0%,#b8b8b8 1.5%,#cbcbcb 3%,#cbcbcb 17%,#8a8a8a 17%,#8a8a8a 21%,#a8a8a8 21%,#a8a8a8 22.6%,#8c8c8c 22.6%,#8c8c8c 30.5%,#a5a5a5 30.5%,#a5a5a5 32.2%,#9c9c9c 32.2%,#9c9c9c 38.8%,#c9c9c9 38.8%,#c9c9c9 46.8%,#ffffff 46.8%,#ffffff 51.8%,#cecece 51.8%,#cecece 59%,#a9a9a9 59%,#a9a9a9 60.3%,#c8c8c8 60.3%,#c8c8c8 67.3%,#a9a9a9 67.3%,#a9a9a9 68.5%,#e6e6e6 68.5%,#e6e6e6 76.3%,#b0b0b0 76.3%,#b0b0b0 77.5%,#dadada 77.5%,#dadada 82%,#b2b2b2 82%,#b2b2b2 95%,#9a9a9a 98.5%,#8a8a8a 100%);border-radius:1.5px;box-shadow:3px 3px 4px rgba(0,0,0,.35);"></div>
<div class="t" style="left:733.5px;top:1035.33px;width:100px;font-size:14.5px;line-height:14.5px;color:#fafafa;text-align:center;">DCA 2</div>
<div style="left:824px;top:685.2px;width:65px;height:62.7px;background:#dcdcdc;"></div>
<div class="t" style="left:824px;top:706.76px;width:65px;font-size:18px;line-height:18px;color:#000;text-align:center;">DCA 3</div>
<div style="left:824px;top:747.9px;width:65px;height:28.5px;background:#28292e;"></div>
<div style="left:824px;top:776.4px;width:65px;height:47.5px;background:#561717;"></div>
<div class="t" style="left:824px;top:791.76px;width:65px;font-size:18px;line-height:18px;color:#ece4e4;text-align:center;">MUTE</div>
<div style="left:824px;top:823.9px;width:65px;height:226.9px;background:#28292e;"></div>
<div style="left:879px;top:823.9px;width:3px;height:14.2px;background:#6a1a1a;"></div>
<div style="left:879px;top:838.1px;width:3px;height:70.7px;background:#734416;"></div>
<div style="left:879px;top:908.8px;width:3px;height:142px;background:#2a3a1a;"></div>
<div class="t" style="left:821.5px;top:818.76px;width:60px;font-size:16px;line-height:16px;color:#f0f0f0;text-align:center;letter-spacing:-1px">-&#8734;</div>
<div style="left:850px;top:862.1px;width:6px;height:125.9px;background:#000;"></div>
<div style="left:844px;top:861.5px;width:19px;height:1px;background:#9c9c9c;"></div>
<div class="t" style="left:815.7px;top:856.32px;width:40px;font-size:11.5px;line-height:11.5px;color:#9c9c9c;text-align:center;">10</div>
<div style="left:844px;top:880.5px;width:19px;height:1px;background:#9c9c9c;"></div>
<div class="t" style="left:815.7px;top:875.42px;width:40px;font-size:11.5px;line-height:11.5px;color:#9c9c9c;text-align:center;">5</div>
<div style="left:844px;top:899px;width:19px;height:1px;background:#f4f4f4;"></div>
<div style="left:844px;top:900px;width:19px;height:1px;background:rgba(240,240,240,0.45);"></div>
<div class="t" style="left:815.7px;top:894.72px;width:40px;font-size:11.5px;line-height:11.5px;color:#9c9c9c;text-align:center;">0</div>
<div style="left:844px;top:918.5px;width:19px;height:1px;background:#9c9c9c;"></div>
<div class="t" style="left:815.7px;top:913.22px;width:40px;font-size:11.5px;line-height:11.5px;color:#9c9c9c;text-align:center;">-5</div>
<div style="left:844px;top:937.5px;width:19px;height:1px;background:#9c9c9c;"></div>
<div class="t" style="left:815.7px;top:932.52px;width:40px;font-size:11.5px;line-height:11.5px;color:#9c9c9c;text-align:center;">-10</div>
<div style="left:844px;top:956.5px;width:19px;height:1px;background:#9c9c9c;"></div>
<div class="t" style="left:815.7px;top:951.42px;width:40px;font-size:11.5px;line-height:11.5px;color:#9c9c9c;text-align:center;">-20</div>
<div style="left:844px;top:974.5px;width:19px;height:1px;background:#9c9c9c;"></div>
<div class="t" style="left:815.7px;top:969.52px;width:40px;font-size:11.5px;line-height:11.5px;color:#9c9c9c;text-align:center;">-30</div>
<div style="left:844px;top:993.5px;width:19px;height:1px;background:#9c9c9c;"></div>
<div class="t" style="left:815.7px;top:987.92px;width:40px;font-size:11.5px;line-height:11.5px;color:#9c9c9c;text-align:center;">-50</div>
<div style="left:840px;top:986px;width:25.6px;height:53px;background:linear-gradient(to bottom,#8e8e8e 0%,#b8b8b8 1.5%,#cbcbcb 3%,#cbcbcb 17%,#8a8a8a 17%,#8a8a8a 21%,#a8a8a8 21%,#a8a8a8 22.6%,#8c8c8c 22.6%,#8c8c8c 30.5%,#a5a5a5 30.5%,#a5a5a5 32.2%,#9c9c9c 32.2%,#9c9c9c 38.8%,#c9c9c9 38.8%,#c9c9c9 46.8%,#ffffff 46.8%,#ffffff 51.8%,#cecece 51.8%,#cecece 59%,#a9a9a9 59%,#a9a9a9 60.3%,#c8c8c8 60.3%,#c8c8c8 67.3%,#a9a9a9 67.3%,#a9a9a9 68.5%,#e6e6e6 68.5%,#e6e6e6 76.3%,#b0b0b0 76.3%,#b0b0b0 77.5%,#dadada 77.5%,#dadada 82%,#b2b2b2 82%,#b2b2b2 95%,#9a9a9a 98.5%,#8a8a8a 100%);border-radius:1.5px;box-shadow:3px 3px 4px rgba(0,0,0,.35);"></div>
<div class="t" style="left:802.5px;top:1035.33px;width:100px;font-size:14.5px;line-height:14.5px;color:#fafafa;text-align:center;">DCA 3</div>
<div style="left:893px;top:685.2px;width:65px;height:62.7px;background:#dcdcdc;"></div>
<div class="t" style="left:893px;top:706.76px;width:65px;font-size:18px;line-height:18px;color:#000;text-align:center;">DCA 4</div>
<div style="left:893px;top:747.9px;width:65px;height:28.5px;background:#28292e;"></div>
<div style="left:893px;top:776.4px;width:65px;height:47.5px;background:#561717;"></div>
<div class="t" style="left:893px;top:791.76px;width:65px;font-size:18px;line-height:18px;color:#ece4e4;text-align:center;">MUTE</div>
<div style="left:893px;top:823.9px;width:65px;height:226.9px;background:#28292e;"></div>
<div style="left:948px;top:823.9px;width:3px;height:14.2px;background:#6a1a1a;"></div>
<div style="left:948px;top:838.1px;width:3px;height:70.7px;background:#734416;"></div>
<div style="left:948px;top:908.8px;width:3px;height:142px;background:#2a3a1a;"></div>
<div class="t" style="left:890.5px;top:818.76px;width:60px;font-size:16px;line-height:16px;color:#f0f0f0;text-align:center;letter-spacing:-1px">-&#8734;</div>
<div style="left:919px;top:862.1px;width:6px;height:125.9px;background:#000;"></div>
<div style="left:913px;top:861.5px;width:19px;height:1px;background:#9c9c9c;"></div>
<div class="t" style="left:884.7px;top:856.32px;width:40px;font-size:11.5px;line-height:11.5px;color:#9c9c9c;text-align:center;">10</div>
<div style="left:913px;top:880.5px;width:19px;height:1px;background:#9c9c9c;"></div>
<div class="t" style="left:884.7px;top:875.42px;width:40px;font-size:11.5px;line-height:11.5px;color:#9c9c9c;text-align:center;">5</div>
<div style="left:913px;top:899px;width:19px;height:1px;background:#f4f4f4;"></div>
<div style="left:913px;top:900px;width:19px;height:1px;background:rgba(240,240,240,0.45);"></div>
<div class="t" style="left:884.7px;top:894.72px;width:40px;font-size:11.5px;line-height:11.5px;color:#9c9c9c;text-align:center;">0</div>
<div style="left:913px;top:918.5px;width:19px;height:1px;background:#9c9c9c;"></div>
<div class="t" style="left:884.7px;top:913.22px;width:40px;font-size:11.5px;line-height:11.5px;color:#9c9c9c;text-align:center;">-5</div>
<div style="left:913px;top:937.5px;width:19px;height:1px;background:#9c9c9c;"></div>
<div class="t" style="left:884.7px;top:932.52px;width:40px;font-size:11.5px;line-height:11.5px;color:#9c9c9c;text-align:center;">-10</div>
<div style="left:913px;top:956.5px;width:19px;height:1px;background:#9c9c9c;"></div>
<div class="t" style="left:884.7px;top:951.42px;width:40px;font-size:11.5px;line-height:11.5px;color:#9c9c9c;text-align:center;">-20</div>
<div style="left:913px;top:974.5px;width:19px;height:1px;background:#9c9c9c;"></div>
<div class="t" style="left:884.7px;top:969.52px;width:40px;font-size:11.5px;line-height:11.5px;color:#9c9c9c;text-align:center;">-30</div>
<div style="left:913px;top:993.5px;width:19px;height:1px;background:#9c9c9c;"></div>
<div class="t" style="left:884.7px;top:987.92px;width:40px;font-size:11.5px;line-height:11.5px;color:#9c9c9c;text-align:center;">-50</div>
<div style="left:909px;top:986px;width:25.6px;height:53px;background:linear-gradient(to bottom,#8e8e8e 0%,#b8b8b8 1.5%,#cbcbcb 3%,#cbcbcb 17%,#8a8a8a 17%,#8a8a8a 21%,#a8a8a8 21%,#a8a8a8 22.6%,#8c8c8c 22.6%,#8c8c8c 30.5%,#a5a5a5 30.5%,#a5a5a5 32.2%,#9c9c9c 32.2%,#9c9c9c 38.8%,#c9c9c9 38.8%,#c9c9c9 46.8%,#ffffff 46.8%,#ffffff 51.8%,#cecece 51.8%,#cecece 59%,#a9a9a9 59%,#a9a9a9 60.3%,#c8c8c8 60.3%,#c8c8c8 67.3%,#a9a9a9 67.3%,#a9a9a9 68.5%,#e6e6e6 68.5%,#e6e6e6 76.3%,#b0b0b0 76.3%,#b0b0b0 77.5%,#dadada 77.5%,#dadada 82%,#b2b2b2 82%,#b2b2b2 95%,#9a9a9a 98.5%,#8a8a8a 100%);border-radius:1.5px;box-shadow:3px 3px 4px rgba(0,0,0,.35);"></div>
<div class="t" style="left:871.5px;top:1035.33px;width:100px;font-size:14.5px;line-height:14.5px;color:#fafafa;text-align:center;">DCA 4</div>
<div style="left:976.2px;top:561.4px;width:100.3px;height:66.4px;background:#2a2a2a;border-radius:4px;box-shadow:inset 0 0 0 2px #22ee22;"></div>
<div class="t" style="left:976.2px;top:584.82px;width:100.3px;font-size:19px;line-height:19px;color:#fafafa;text-align:center;">1-8</div>
<div style="left:976px;top:633px;width:100.8px;height:66.5px;background:#55555f;border-radius:4px;box-shadow:inset 0 0 0 0px #55555f;"></div>
<div class="t" style="left:976px;top:656.42px;width:100.8px;font-size:19px;line-height:19px;color:#dcdcdc;text-align:center;">9-16</div>
<div style="left:976px;top:703.7px;width:100.8px;height:66.5px;background:#55555f;border-radius:4px;box-shadow:inset 0 0 0 0px #55555f;"></div>
<div class="t" style="left:976px;top:727.98px;width:100.8px;font-size:14.2px;line-height:14.2px;color:#dcdcdc;text-align:center;">MON-MAINS</div>
<div style="left:976px;top:774.8px;width:100.8px;height:67.3px;background:#55555f;border-radius:4px;box-shadow:inset 0 0 0 0px #55555f;"></div>
<div class="t" style="left:976px;top:798.22px;width:100.8px;font-size:19px;line-height:19px;color:#dcdcdc;text-align:center;">FX</div>
<div style="left:976px;top:846.6px;width:100.8px;height:65.9px;background:#55555f;border-radius:4px;box-shadow:inset 0 0 0 0px #55555f;"></div>
<div class="t" style="left:976px;top:870.02px;width:100.8px;font-size:19px;line-height:19px;color:#dcdcdc;text-align:center;">More</div>
<svg style="left:0;top:0" width="1920" height="1053"><circle cx="1053.5" cy="566.0" r="3.1" fill="#fafafa"/><circle cx="1062.3" cy="566.0" r="3.1" fill="#fafafa"/><circle cx="1071.3" cy="566.0" r="3.1" fill="#fafafa"/><circle cx="1053.5" cy="637.6" r="3.1" fill="#fafafa"/><circle cx="1062.3" cy="637.6" r="3.1" fill="#fafafa"/><circle cx="1071.3" cy="637.6" r="3.1" fill="#fafafa"/><circle cx="1053.5" cy="708.3" r="3.1" fill="#fafafa"/><circle cx="1062.3" cy="708.3" r="3.1" fill="#fafafa"/><circle cx="1071.3" cy="708.3" r="3.1" fill="#fafafa"/><circle cx="1053.5" cy="779.4" r="3.1" fill="#fafafa"/><circle cx="1062.3" cy="779.4" r="3.1" fill="#fafafa"/><circle cx="1071.3" cy="779.4" r="3.1" fill="#fafafa"/><circle cx="1053.5" cy="851.2" r="3.1" fill="#fafafa"/><circle cx="1062.3" cy="851.2" r="3.1" fill="#fafafa"/><circle cx="1071.3" cy="851.2" r="3.1" fill="#fafafa"/></svg>
<div style="left:977.9px;top:923.8px;width:96px;height:55.1px;background:#561717;border-radius:4px;"></div>
<div class="t" style="left:977.9px;top:941.52px;width:96px;font-size:19px;line-height:19px;color:#f0eaea;text-align:center;">Mute All</div>
<div style="left:977.9px;top:991.8px;width:96px;height:55.2px;background:#561717;border-radius:4px;"></div>
<div class="t" style="left:977.9px;top:1009.52px;width:96px;font-size:19px;line-height:19px;color:#f0eaea;text-align:center;">Mute FX</div>
<div style="left:1092px;top:559px;width:828px;height:494px;background:#2d3341;"></div>
<div style="left:1092.1px;top:559px;width:102.5px;height:62.7px;background:#dcdcdc;"></div>
<div class="t" style="left:1092.1px;top:582.26px;width:102.5px;font-size:18px;line-height:18px;color:#000;text-align:center;">CH 01</div>
<div style="left:1092.1px;top:621.7px;width:102.5px;height:28px;background:#28292e;box-shadow:inset 0 0 0 2px #6b605e;"></div>
<div style="left:1142.95px;top:621.7px;width:1.6px;height:28px;background:#f0f0f0;"></div>
<div style="left:1092.1px;top:649.7px;width:102.5px;height:47.9px;background:#561717;"></div>
<div class="t" style="left:1092.1px;top:667.06px;width:102.5px;font-size:18px;line-height:18px;color:#ece4e4;text-align:center;">MUTE</div>
<div style="left:1092.1px;top:697.6px;width:102.5px;height:355.4px;background:#28292e;"></div>
<div style="left:1182.3px;top:697.6px;width:4px;height:14.5px;background:#6a1a1a;"></div>
<div style="left:1182.3px;top:712.1px;width:4px;height:114.1px;background:#734416;"></div>
<div style="left:1182.3px;top:826.2px;width:4px;height:226.8px;background:#2a3a1a;"></div>
<div style="left:1191.1px;top:697.6px;width:3.8px;height:75.5px;background:#ff2418;"></div>
<div style="left:1191.1px;top:808px;width:3.8px;height:75px;background:#ff2418;"></div>
<div class="t" style="left:1107.1px;top:691.72px;width:60px;font-size:19px;line-height:19px;color:#f0f0f0;text-align:center;letter-spacing:-1px">-&#8734;</div>
<div style="left:1135.9px;top:758.2px;width:9px;height:193px;background:#000;"></div>
<div style="left:1117.1px;top:757.5px;width:46px;height:1px;background:#9c9c9c;"></div>
<div class="t" style="left:1083.3px;top:752.42px;width:40px;font-size:11.5px;line-height:11.5px;color:#9c9c9c;text-align:center;">10</div>
<div style="left:1117.1px;top:787.5px;width:46px;height:1px;background:#9c9c9c;"></div>
<div class="t" style="left:1083.3px;top:782.32px;width:40px;font-size:11.5px;line-height:11.5px;color:#9c9c9c;text-align:center;">5</div>
<div style="left:1117.1px;top:816px;width:46px;height:1px;background:#f4f4f4;"></div>
<div style="left:1117.1px;top:817px;width:46px;height:1px;background:rgba(240,240,240,0.45);"></div>
<div class="t" style="left:1083.3px;top:811.22px;width:40px;font-size:11.5px;line-height:11.5px;color:#9c9c9c;text-align:center;">0</div>
<div style="left:1117.1px;top:845.5px;width:46px;height:1px;background:#9c9c9c;"></div>
<div class="t" style="left:1083.3px;top:840.72px;width:40px;font-size:11.5px;line-height:11.5px;color:#9c9c9c;text-align:center;">-5</div>
<div style="left:1117.1px;top:875.5px;width:46px;height:1px;background:#9c9c9c;"></div>
<div class="t" style="left:1083.3px;top:870.42px;width:40px;font-size:11.5px;line-height:11.5px;color:#9c9c9c;text-align:center;">-10</div>
<div style="left:1117.1px;top:905.5px;width:46px;height:1px;background:#9c9c9c;"></div>
<div class="t" style="left:1083.3px;top:899.72px;width:40px;font-size:11.5px;line-height:11.5px;color:#9c9c9c;text-align:center;">-20</div>
<div style="left:1117.1px;top:934.5px;width:46px;height:1px;background:#9c9c9c;"></div>
<div class="t" style="left:1083.3px;top:929.22px;width:40px;font-size:11.5px;line-height:11.5px;color:#9c9c9c;text-align:center;">-30</div>
<div style="left:1117.1px;top:963.5px;width:46px;height:1px;background:#9c9c9c;"></div>
<div class="t" style="left:1083.3px;top:958.22px;width:40px;font-size:11.5px;line-height:11.5px;color:#9c9c9c;text-align:center;">-50</div>
<div style="left:1117.6px;top:949.2px;width:42.5px;height:88.3px;background:linear-gradient(to bottom,#8e8e8e 0%,#b8b8b8 1.5%,#cbcbcb 3%,#cbcbcb 17%,#8a8a8a 17%,#8a8a8a 21%,#a8a8a8 21%,#a8a8a8 22.6%,#8c8c8c 22.6%,#8c8c8c 30.5%,#a5a5a5 30.5%,#a5a5a5 32.2%,#9c9c9c 32.2%,#9c9c9c 38.8%,#c9c9c9 38.8%,#c9c9c9 46.8%,#ffffff 46.8%,#ffffff 51.8%,#cecece 51.8%,#cecece 59%,#a9a9a9 59%,#a9a9a9 60.3%,#c8c8c8 60.3%,#c8c8c8 67.3%,#a9a9a9 67.3%,#a9a9a9 68.5%,#e6e6e6 68.5%,#e6e6e6 76.3%,#b0b0b0 76.3%,#b0b0b0 77.5%,#dadada 77.5%,#dadada 82%,#b2b2b2 82%,#b2b2b2 95%,#9a9a9a 98.5%,#8a8a8a 100%);border-radius:1.5px;box-shadow:3px 3px 4px rgba(0,0,0,.35);"></div>
<div class="t" style="left:1087.6px;top:1037.84px;width:100px;font-size:18.5px;line-height:18.5px;color:#fafafa;text-align:center;">CH 01</div>
<div style="left:1195.65px;top:559px;width:102.5px;height:62.7px;background:#dcdcdc;"></div>
<div class="t" style="left:1195.65px;top:582.26px;width:102.5px;font-size:18px;line-height:18px;color:#000;text-align:center;">CH 02</div>
<div style="left:1195.65px;top:621.7px;width:102.5px;height:28px;background:#28292e;box-shadow:inset 0 0 0 2px #6b605e;"></div>
<div style="left:1246.5px;top:621.7px;width:1.6px;height:28px;background:#f0f0f0;"></div>
<div style="left:1195.65px;top:649.7px;width:102.5px;height:47.9px;background:#561717;"></div>
<div class="t" style="left:1195.65px;top:667.06px;width:102.5px;font-size:18px;line-height:18px;color:#ece4e4;text-align:center;">MUTE</div>
<div style="left:1195.65px;top:697.6px;width:102.5px;height:355.4px;background:#28292e;"></div>
<div style="left:1285.85px;top:697.6px;width:4px;height:14.5px;background:#6a1a1a;"></div>
<div style="left:1285.85px;top:712.1px;width:4px;height:114.1px;background:#734416;"></div>
<div style="left:1285.85px;top:826.2px;width:4px;height:226.8px;background:#2a3a1a;"></div>
<div style="left:1294.65px;top:697.6px;width:3.8px;height:75.5px;background:#ff2418;"></div>
<div style="left:1294.65px;top:808px;width:3.8px;height:75px;background:#ff2418;"></div>
<div class="t" style="left:1210.65px;top:691.72px;width:60px;font-size:19px;line-height:19px;color:#f0f0f0;text-align:center;letter-spacing:-1px">-&#8734;</div>
<div style="left:1239.45px;top:758.2px;width:9px;height:193px;background:#000;"></div>
<div style="left:1220.65px;top:757.5px;width:46px;height:1px;background:#9c9c9c;"></div>
<div class="t" style="left:1186.85px;top:752.42px;width:40px;font-size:11.5px;line-height:11.5px;color:#9c9c9c;text-align:center;">10</div>
<div style="left:1220.65px;top:787.5px;width:46px;height:1px;background:#9c9c9c;"></div>
<div class="t" style="left:1186.85px;top:782.32px;width:40px;font-size:11.5px;line-height:11.5px;color:#9c9c9c;text-align:center;">5</div>
<div style="left:1220.65px;top:816px;width:46px;height:1px;background:#f4f4f4;"></div>
<div style="left:1220.65px;top:817px;width:46px;height:1px;background:rgba(240,240,240,0.45);"></div>
<div class="t" style="left:1186.85px;top:811.22px;width:40px;font-size:11.5px;line-height:11.5px;color:#9c9c9c;text-align:center;">0</div>
<div style="left:1220.65px;top:845.5px;width:46px;height:1px;background:#9c9c9c;"></div>
<div class="t" style="left:1186.85px;top:840.72px;width:40px;font-size:11.5px;line-height:11.5px;color:#9c9c9c;text-align:center;">-5</div>
<div style="left:1220.65px;top:875.5px;width:46px;height:1px;background:#9c9c9c;"></div>
<div class="t" style="left:1186.85px;top:870.42px;width:40px;font-size:11.5px;line-height:11.5px;color:#9c9c9c;text-align:center;">-10</div>
<div style="left:1220.65px;top:905.5px;width:46px;height:1px;background:#9c9c9c;"></div>
<div class="t" style="left:1186.85px;top:899.72px;width:40px;font-size:11.5px;line-height:11.5px;color:#9c9c9c;text-align:center;">-20</div>
<div style="left:1220.65px;top:934.5px;width:46px;height:1px;background:#9c9c9c;"></div>
<div class="t" style="left:1186.85px;top:929.22px;width:40px;font-size:11.5px;line-height:11.5px;color:#9c9c9c;text-align:center;">-30</div>
<div style="left:1220.65px;top:963.5px;width:46px;height:1px;background:#9c9c9c;"></div>
<div class="t" style="left:1186.85px;top:958.22px;width:40px;font-size:11.5px;line-height:11.5px;color:#9c9c9c;text-align:center;">-50</div>
<div style="left:1221.15px;top:949.2px;width:42.5px;height:88.3px;background:linear-gradient(to bottom,#8e8e8e 0%,#b8b8b8 1.5%,#cbcbcb 3%,#cbcbcb 17%,#8a8a8a 17%,#8a8a8a 21%,#a8a8a8 21%,#a8a8a8 22.6%,#8c8c8c 22.6%,#8c8c8c 30.5%,#a5a5a5 30.5%,#a5a5a5 32.2%,#9c9c9c 32.2%,#9c9c9c 38.8%,#c9c9c9 38.8%,#c9c9c9 46.8%,#ffffff 46.8%,#ffffff 51.8%,#cecece 51.8%,#cecece 59%,#a9a9a9 59%,#a9a9a9 60.3%,#c8c8c8 60.3%,#c8c8c8 67.3%,#a9a9a9 67.3%,#a9a9a9 68.5%,#e6e6e6 68.5%,#e6e6e6 76.3%,#b0b0b0 76.3%,#b0b0b0 77.5%,#dadada 77.5%,#dadada 82%,#b2b2b2 82%,#b2b2b2 95%,#9a9a9a 98.5%,#8a8a8a 100%);border-radius:1.5px;box-shadow:3px 3px 4px rgba(0,0,0,.35);"></div>
<div class="t" style="left:1191.15px;top:1037.84px;width:100px;font-size:18.5px;line-height:18.5px;color:#fafafa;text-align:center;">CH 02</div>
<div style="left:1299.2px;top:559px;width:102.5px;height:62.7px;background:#dcdcdc;"></div>
<div class="t" style="left:1299.2px;top:582.26px;width:102.5px;font-size:18px;line-height:18px;color:#000;text-align:center;">CH 03</div>
<div style="left:1299.2px;top:621.7px;width:102.5px;height:28px;background:#28292e;box-shadow:inset 0 0 0 2px #6b605e;"></div>
<div style="left:1350.05px;top:621.7px;width:1.6px;height:28px;background:#f0f0f0;"></div>
<div style="left:1299.2px;top:649.7px;width:102.5px;height:47.9px;background:#561717;"></div>
<div class="t" style="left:1299.2px;top:667.06px;width:102.5px;font-size:18px;line-height:18px;color:#ece4e4;text-align:center;">MUTE</div>
<div style="left:1299.2px;top:697.6px;width:102.5px;height:355.4px;background:#28292e;"></div>
<div style="left:1389.4px;top:697.6px;width:4px;height:14.5px;background:#6a1a1a;"></div>
<div style="left:1389.4px;top:712.1px;width:4px;height:114.1px;background:#734416;"></div>
<div style="left:1389.4px;top:826.2px;width:4px;height:226.8px;background:#2a3a1a;"></div>
<div style="left:1398.2px;top:697.6px;width:3.8px;height:75.5px;background:#ff2418;"></div>
<div style="left:1398.2px;top:808px;width:3.8px;height:75px;background:#ff2418;"></div>
<div class="t" style="left:1314.2px;top:691.72px;width:60px;font-size:19px;line-height:19px;color:#f0f0f0;text-align:center;letter-spacing:-1px">-&#8734;</div>
<div style="left:1343px;top:758.2px;width:9px;height:193px;background:#000;"></div>
<div style="left:1324.2px;top:757.5px;width:46px;height:1px;background:#9c9c9c;"></div>
<div class="t" style="left:1290.4px;top:752.42px;width:40px;font-size:11.5px;line-height:11.5px;color:#9c9c9c;text-align:center;">10</div>
<div style="left:1324.2px;top:787.5px;width:46px;height:1px;background:#9c9c9c;"></div>
<div class="t" style="left:1290.4px;top:782.32px;width:40px;font-size:11.5px;line-height:11.5px;color:#9c9c9c;text-align:center;">5</div>
<div style="left:1324.2px;top:816px;width:46px;height:1px;background:#f4f4f4;"></div>
<div style="left:1324.2px;top:817px;width:46px;height:1px;background:rgba(240,240,240,0.45);"></div>
<div class="t" style="left:1290.4px;top:811.22px;width:40px;font-size:11.5px;line-height:11.5px;color:#9c9c9c;text-align:center;">0</div>
<div style="left:1324.2px;top:845.5px;width:46px;height:1px;background:#9c9c9c;"></div>
<div class="t" style="left:1290.4px;top:840.72px;width:40px;font-size:11.5px;line-height:11.5px;color:#9c9c9c;text-align:center;">-5</div>
<div style="left:1324.2px;top:875.5px;width:46px;height:1px;background:#9c9c9c;"></div>
<div class="t" style="left:1290.4px;top:870.42px;width:40px;font-size:11.5px;line-height:11.5px;color:#9c9c9c;text-align:center;">-10</div>
<div style="left:1324.2px;top:905.5px;width:46px;height:1px;background:#9c9c9c;"></div>
<div class="t" style="left:1290.4px;top:899.72px;width:40px;font-size:11.5px;line-height:11.5px;color:#9c9c9c;text-align:center;">-20</div>
<div style="left:1324.2px;top:934.5px;width:46px;height:1px;background:#9c9c9c;"></div>
<div class="t" style="left:1290.4px;top:929.22px;width:40px;font-size:11.5px;line-height:11.5px;color:#9c9c9c;text-align:center;">-30</div>
<div style="left:1324.2px;top:963.5px;width:46px;height:1px;background:#9c9c9c;"></div>
<div class="t" style="left:1290.4px;top:958.22px;width:40px;font-size:11.5px;line-height:11.5px;color:#9c9c9c;text-align:center;">-50</div>
<div style="left:1324.7px;top:949.2px;width:42.5px;height:88.3px;background:linear-gradient(to bottom,#8e8e8e 0%,#b8b8b8 1.5%,#cbcbcb 3%,#cbcbcb 17%,#8a8a8a 17%,#8a8a8a 21%,#a8a8a8 21%,#a8a8a8 22.6%,#8c8c8c 22.6%,#8c8c8c 30.5%,#a5a5a5 30.5%,#a5a5a5 32.2%,#9c9c9c 32.2%,#9c9c9c 38.8%,#c9c9c9 38.8%,#c9c9c9 46.8%,#ffffff 46.8%,#ffffff 51.8%,#cecece 51.8%,#cecece 59%,#a9a9a9 59%,#a9a9a9 60.3%,#c8c8c8 60.3%,#c8c8c8 67.3%,#a9a9a9 67.3%,#a9a9a9 68.5%,#e6e6e6 68.5%,#e6e6e6 76.3%,#b0b0b0 76.3%,#b0b0b0 77.5%,#dadada 77.5%,#dadada 82%,#b2b2b2 82%,#b2b2b2 95%,#9a9a9a 98.5%,#8a8a8a 100%);border-radius:1.5px;box-shadow:3px 3px 4px rgba(0,0,0,.35);"></div>
<div class="t" style="left:1294.7px;top:1037.84px;width:100px;font-size:18.5px;line-height:18.5px;color:#fafafa;text-align:center;">CH 03</div>
<div style="left:1402.75px;top:559px;width:102.5px;height:62.7px;background:#dcdcdc;"></div>
<div class="t" style="left:1402.75px;top:582.26px;width:102.5px;font-size:18px;line-height:18px;color:#000;text-align:center;">CH 04</div>
<div style="left:1402.75px;top:621.7px;width:102.5px;height:28px;background:#28292e;box-shadow:inset 0 0 0 2px #6b605e;"></div>
<div style="left:1453.6px;top:621.7px;width:1.6px;height:28px;background:#f0f0f0;"></div>
<div style="left:1402.75px;top:649.7px;width:102.5px;height:47.9px;background:#561717;"></div>
<div class="t" style="left:1402.75px;top:667.06px;width:102.5px;font-size:18px;line-height:18px;color:#ece4e4;text-align:center;">MUTE</div>
<div style="left:1402.75px;top:697.6px;width:102.5px;height:355.4px;background:#28292e;"></div>
<div style="left:1492.95px;top:697.6px;width:4px;height:14.5px;background:#6a1a1a;"></div>
<div style="left:1492.95px;top:712.1px;width:4px;height:114.1px;background:#734416;"></div>
<div style="left:1492.95px;top:826.2px;width:4px;height:226.8px;background:#2a3a1a;"></div>
<div style="left:1501.75px;top:697.6px;width:3.8px;height:75.5px;background:#ff2418;"></div>
<div style="left:1501.75px;top:808px;width:3.8px;height:75px;background:#ff2418;"></div>
<div class="t" style="left:1417.75px;top:691.72px;width:60px;font-size:19px;line-height:19px;color:#f0f0f0;text-align:center;letter-spacing:-1px">-&#8734;</div>
<div style="left:1446.55px;top:758.2px;width:9px;height:193px;background:#000;"></div>
<div style="left:1427.75px;top:757.5px;width:46px;height:1px;background:#9c9c9c;"></div>
<div class="t" style="left:1393.95px;top:752.42px;width:40px;font-size:11.5px;line-height:11.5px;color:#9c9c9c;text-align:center;">10</div>
<div style="left:1427.75px;top:787.5px;width:46px;height:1px;background:#9c9c9c;"></div>
<div class="t" style="left:1393.95px;top:782.32px;width:40px;font-size:11.5px;line-height:11.5px;color:#9c9c9c;text-align:center;">5</div>
<div style="left:1427.75px;top:816px;width:46px;height:1px;background:#f4f4f4;"></div>
<div style="left:1427.75px;top:817px;width:46px;height:1px;background:rgba(240,240,240,0.45);"></div>
<div class="t" style="left:1393.95px;top:811.22px;width:40px;font-size:11.5px;line-height:11.5px;color:#9c9c9c;text-align:center;">0</div>
<div style="left:1427.75px;top:845.5px;width:46px;height:1px;background:#9c9c9c;"></div>
<div class="t" style="left:1393.95px;top:840.72px;width:40px;font-size:11.5px;line-height:11.5px;color:#9c9c9c;text-align:center;">-5</div>
<div style="left:1427.75px;top:875.5px;width:46px;height:1px;background:#9c9c9c;"></div>
<div class="t" style="left:1393.95px;top:870.42px;width:40px;font-size:11.5px;line-height:11.5px;color:#9c9c9c;text-align:center;">-10</div>
<div style="left:1427.75px;top:905.5px;width:46px;height:1px;background:#9c9c9c;"></div>
<div class="t" style="left:1393.95px;top:899.72px;width:40px;font-size:11.5px;line-height:11.5px;color:#9c9c9c;text-align:center;">-20</div>
<div style="left:1427.75px;top:934.5px;width:46px;height:1px;background:#9c9c9c;"></div>
<div class="t" style="left:1393.95px;top:929.22px;width:40px;font-size:11.5px;line-height:11.5px;color:#9c9c9c;text-align:center;">-30</div>
<div style="left:1427.75px;top:963.5px;width:46px;height:1px;background:#9c9c9c;"></div>
<div class="t" style="left:1393.95px;top:958.22px;width:40px;font-size:11.5px;line-height:11.5px;color:#9c9c9c;text-align:center;">-50</div>
<div style="left:1428.25px;top:949.2px;width:42.5px;height:88.3px;background:linear-gradient(to bottom,#8e8e8e 0%,#b8b8b8 1.5%,#cbcbcb 3%,#cbcbcb 17%,#8a8a8a 17%,#8a8a8a 21%,#a8a8a8 21%,#a8a8a8 22.6%,#8c8c8c 22.6%,#8c8c8c 30.5%,#a5a5a5 30.5%,#a5a5a5 32.2%,#9c9c9c 32.2%,#9c9c9c 38.8%,#c9c9c9 38.8%,#c9c9c9 46.8%,#ffffff 46.8%,#ffffff 51.8%,#cecece 51.8%,#cecece 59%,#a9a9a9 59%,#a9a9a9 60.3%,#c8c8c8 60.3%,#c8c8c8 67.3%,#a9a9a9 67.3%,#a9a9a9 68.5%,#e6e6e6 68.5%,#e6e6e6 76.3%,#b0b0b0 76.3%,#b0b0b0 77.5%,#dadada 77.5%,#dadada 82%,#b2b2b2 82%,#b2b2b2 95%,#9a9a9a 98.5%,#8a8a8a 100%);border-radius:1.5px;box-shadow:3px 3px 4px rgba(0,0,0,.35);"></div>
<div class="t" style="left:1398.25px;top:1037.84px;width:100px;font-size:18.5px;line-height:18.5px;color:#fafafa;text-align:center;">CH 04</div>
<div style="left:1506.3px;top:559px;width:102.5px;height:62.7px;background:#dcdcdc;"></div>
<div class="t" style="left:1506.3px;top:582.26px;width:102.5px;font-size:18px;line-height:18px;color:#000;text-align:center;">CH 05</div>
<div style="left:1506.3px;top:621.7px;width:102.5px;height:28px;background:#28292e;box-shadow:inset 0 0 0 2px #6b605e;"></div>
<div style="left:1557.15px;top:621.7px;width:1.6px;height:28px;background:#f0f0f0;"></div>
<div style="left:1506.3px;top:649.7px;width:102.5px;height:47.9px;background:#561717;"></div>
<div class="t" style="left:1506.3px;top:667.06px;width:102.5px;font-size:18px;line-height:18px;color:#ece4e4;text-align:center;">MUTE</div>
<div style="left:1506.3px;top:697.6px;width:102.5px;height:355.4px;background:#28292e;"></div>
<div style="left:1596.5px;top:697.6px;width:4px;height:14.5px;background:#6a1a1a;"></div>
<div style="left:1596.5px;top:712.1px;width:4px;height:114.1px;background:#734416;"></div>
<div style="left:1596.5px;top:826.2px;width:4px;height:226.8px;background:#2a3a1a;"></div>
<div style="left:1605.3px;top:697.6px;width:3.8px;height:75.5px;background:#ff2418;"></div>
<div style="left:1605.3px;top:808px;width:3.8px;height:75px;background:#ff2418;"></div>
<div class="t" style="left:1521.3px;top:691.72px;width:60px;font-size:19px;line-height:19px;color:#f0f0f0;text-align:center;letter-spacing:-1px">-&#8734;</div>
<div style="left:1550.1px;top:758.2px;width:9px;height:193px;background:#000;"></div>
<div style="left:1531.3px;top:757.5px;width:46px;height:1px;background:#9c9c9c;"></div>
<div class="t" style="left:1497.5px;top:752.42px;width:40px;font-size:11.5px;line-height:11.5px;color:#9c9c9c;text-align:center;">10</div>
<div style="left:1531.3px;top:787.5px;width:46px;height:1px;background:#9c9c9c;"></div>
<div class="t" style="left:1497.5px;top:782.32px;width:40px;font-size:11.5px;line-height:11.5px;color:#9c9c9c;text-align:center;">5</div>
<div style="left:1531.3px;top:816px;width:46px;height:1px;background:#f4f4f4;"></div>
<div style="left:1531.3px;top:817px;width:46px;height:1px;background:rgba(240,240,240,0.45);"></div>
<div class="t" style="left:1497.5px;top:811.22px;width:40px;font-size:11.5px;line-height:11.5px;color:#9c9c9c;text-align:center;">0</div>
<div style="left:1531.3px;top:845.5px;width:46px;height:1px;background:#9c9c9c;"></div>
<div class="t" style="left:1497.5px;top:840.72px;width:40px;font-size:11.5px;line-height:11.5px;color:#9c9c9c;text-align:center;">-5</div>
<div style="left:1531.3px;top:875.5px;width:46px;height:1px;background:#9c9c9c;"></div>
<div class="t" style="left:1497.5px;top:870.42px;width:40px;font-size:11.5px;line-height:11.5px;color:#9c9c9c;text-align:center;">-10</div>
<div style="left:1531.3px;top:905.5px;width:46px;height:1px;background:#9c9c9c;"></div>
<div class="t" style="left:1497.5px;top:899.72px;width:40px;font-size:11.5px;line-height:11.5px;color:#9c9c9c;text-align:center;">-20</div>
<div style="left:1531.3px;top:934.5px;width:46px;height:1px;background:#9c9c9c;"></div>
<div class="t" style="left:1497.5px;top:929.22px;width:40px;font-size:11.5px;line-height:11.5px;color:#9c9c9c;text-align:center;">-30</div>
<div style="left:1531.3px;top:963.5px;width:46px;height:1px;background:#9c9c9c;"></div>
<div class="t" style="left:1497.5px;top:958.22px;width:40px;font-size:11.5px;line-height:11.5px;color:#9c9c9c;text-align:center;">-50</div>
<div style="left:1531.8px;top:949.2px;width:42.5px;height:88.3px;background:linear-gradient(to bottom,#8e8e8e 0%,#b8b8b8 1.5%,#cbcbcb 3%,#cbcbcb 17%,#8a8a8a 17%,#8a8a8a 21%,#a8a8a8 21%,#a8a8a8 22.6%,#8c8c8c 22.6%,#8c8c8c 30.5%,#a5a5a5 30.5%,#a5a5a5 32.2%,#9c9c9c 32.2%,#9c9c9c 38.8%,#c9c9c9 38.8%,#c9c9c9 46.8%,#ffffff 46.8%,#ffffff 51.8%,#cecece 51.8%,#cecece 59%,#a9a9a9 59%,#a9a9a9 60.3%,#c8c8c8 60.3%,#c8c8c8 67.3%,#a9a9a9 67.3%,#a9a9a9 68.5%,#e6e6e6 68.5%,#e6e6e6 76.3%,#b0b0b0 76.3%,#b0b0b0 77.5%,#dadada 77.5%,#dadada 82%,#b2b2b2 82%,#b2b2b2 95%,#9a9a9a 98.5%,#8a8a8a 100%);border-radius:1.5px;box-shadow:3px 3px 4px rgba(0,0,0,.35);"></div>
<div class="t" style="left:1501.8px;top:1037.84px;width:100px;font-size:18.5px;line-height:18.5px;color:#fafafa;text-align:center;">CH 05</div>
<div style="left:1609.85px;top:559px;width:102.5px;height:62.7px;background:#dcdcdc;"></div>
<div class="t" style="left:1609.85px;top:582.26px;width:102.5px;font-size:18px;line-height:18px;color:#000;text-align:center;">CH 06</div>
<div style="left:1609.85px;top:621.7px;width:102.5px;height:28px;background:#28292e;box-shadow:inset 0 0 0 2px #6b605e;"></div>
<div style="left:1660.7px;top:621.7px;width:1.6px;height:28px;background:#f0f0f0;"></div>
<div style="left:1609.85px;top:649.7px;width:102.5px;height:47.9px;background:#561717;"></div>
<div class="t" style="left:1609.85px;top:667.06px;width:102.5px;font-size:18px;line-height:18px;color:#ece4e4;text-align:center;">MUTE</div>
<div style="left:1609.85px;top:697.6px;width:102.5px;height:355.4px;background:#28292e;"></div>
<div style="left:1700.05px;top:697.6px;width:4px;height:14.5px;background:#6a1a1a;"></div>
<div style="left:1700.05px;top:712.1px;width:4px;height:114.1px;background:#734416;"></div>
<div style="left:1700.05px;top:826.2px;width:4px;height:226.8px;background:#2a3a1a;"></div>
<div style="left:1708.85px;top:697.6px;width:3.8px;height:75.5px;background:#ff2418;"></div>
<div style="left:1708.85px;top:808px;width:3.8px;height:75px;background:#ff2418;"></div>
<div class="t" style="left:1624.85px;top:691.72px;width:60px;font-size:19px;line-height:19px;color:#f0f0f0;text-align:center;letter-spacing:-1px">-&#8734;</div>
<div style="left:1653.65px;top:758.2px;width:9px;height:193px;background:#000;"></div>
<div style="left:1634.85px;top:757.5px;width:46px;height:1px;background:#9c9c9c;"></div>
<div class="t" style="left:1601.05px;top:752.42px;width:40px;font-size:11.5px;line-height:11.5px;color:#9c9c9c;text-align:center;">10</div>
<div style="left:1634.85px;top:787.5px;width:46px;height:1px;background:#9c9c9c;"></div>
<div class="t" style="left:1601.05px;top:782.32px;width:40px;font-size:11.5px;line-height:11.5px;color:#9c9c9c;text-align:center;">5</div>
<div style="left:1634.85px;top:816px;width:46px;height:1px;background:#f4f4f4;"></div>
<div style="left:1634.85px;top:817px;width:46px;height:1px;background:rgba(240,240,240,0.45);"></div>
<div class="t" style="left:1601.05px;top:811.22px;width:40px;font-size:11.5px;line-height:11.5px;color:#9c9c9c;text-align:center;">0</div>
<div style="left:1634.85px;top:845.5px;width:46px;height:1px;background:#9c9c9c;"></div>
<div class="t" style="left:1601.05px;top:840.72px;width:40px;font-size:11.5px;line-height:11.5px;color:#9c9c9c;text-align:center;">-5</div>
<div style="left:1634.85px;top:875.5px;width:46px;height:1px;background:#9c9c9c;"></div>
<div class="t" style="left:1601.05px;top:870.42px;width:40px;font-size:11.5px;line-height:11.5px;color:#9c9c9c;text-align:center;">-10</div>
<div style="left:1634.85px;top:905.5px;width:46px;height:1px;background:#9c9c9c;"></div>
<div class="t" style="left:1601.05px;top:899.72px;width:40px;font-size:11.5px;line-height:11.5px;color:#9c9c9c;text-align:center;">-20</div>
<div style="left:1634.85px;top:934.5px;width:46px;height:1px;background:#9c9c9c;"></div>
<div class="t" style="left:1601.05px;top:929.22px;width:40px;font-size:11.5px;line-height:11.5px;color:#9c9c9c;text-align:center;">-30</div>
<div style="left:1634.85px;top:963.5px;width:46px;height:1px;background:#9c9c9c;"></div>
<div class="t" style="left:1601.05px;top:958.22px;width:40px;font-size:11.5px;line-height:11.5px;color:#9c9c9c;text-align:center;">-50</div>
<div style="left:1635.35px;top:949.2px;width:42.5px;height:88.3px;background:linear-gradient(to bottom,#8e8e8e 0%,#b8b8b8 1.5%,#cbcbcb 3%,#cbcbcb 17%,#8a8a8a 17%,#8a8a8a 21%,#a8a8a8 21%,#a8a8a8 22.6%,#8c8c8c 22.6%,#8c8c8c 30.5%,#a5a5a5 30.5%,#a5a5a5 32.2%,#9c9c9c 32.2%,#9c9c9c 38.8%,#c9c9c9 38.8%,#c9c9c9 46.8%,#ffffff 46.8%,#ffffff 51.8%,#cecece 51.8%,#cecece 59%,#a9a9a9 59%,#a9a9a9 60.3%,#c8c8c8 60.3%,#c8c8c8 67.3%,#a9a9a9 67.3%,#a9a9a9 68.5%,#e6e6e6 68.5%,#e6e6e6 76.3%,#b0b0b0 76.3%,#b0b0b0 77.5%,#dadada 77.5%,#dadada 82%,#b2b2b2 82%,#b2b2b2 95%,#9a9a9a 98.5%,#8a8a8a 100%);border-radius:1.5px;box-shadow:3px 3px 4px rgba(0,0,0,.35);"></div>
<div class="t" style="left:1605.35px;top:1037.84px;width:100px;font-size:18.5px;line-height:18.5px;color:#fafafa;text-align:center;">CH 06</div>
<div style="left:1713.4px;top:559px;width:102.5px;height:62.7px;background:#dcdcdc;"></div>
<div class="t" style="left:1713.4px;top:582.26px;width:102.5px;font-size:18px;line-height:18px;color:#000;text-align:center;">CH 07</div>
<div style="left:1713.4px;top:621.7px;width:102.5px;height:28px;background:#28292e;box-shadow:inset 0 0 0 2px #6b605e;"></div>
<div style="left:1764.25px;top:621.7px;width:1.6px;height:28px;background:#f0f0f0;"></div>
<div style="left:1713.4px;top:649.7px;width:102.5px;height:47.9px;background:#561717;"></div>
<div class="t" style="left:1713.4px;top:667.06px;width:102.5px;font-size:18px;line-height:18px;color:#ece4e4;text-align:center;">MUTE</div>
<div style="left:1713.4px;top:697.6px;width:102.5px;height:355.4px;background:#28292e;"></div>
<div style="left:1803.6px;top:697.6px;width:4px;height:14.5px;background:#6a1a1a;"></div>
<div style="left:1803.6px;top:712.1px;width:4px;height:114.1px;background:#734416;"></div>
<div style="left:1803.6px;top:826.2px;width:4px;height:226.8px;background:#2a3a1a;"></div>
<div style="left:1812.4px;top:697.6px;width:3.8px;height:75.5px;background:#ff2418;"></div>
<div style="left:1812.4px;top:808px;width:3.8px;height:75px;background:#ff2418;"></div>
<div class="t" style="left:1728.4px;top:691.72px;width:60px;font-size:19px;line-height:19px;color:#f0f0f0;text-align:center;letter-spacing:-1px">-&#8734;</div>
<div style="left:1757.2px;top:758.2px;width:9px;height:193px;background:#000;"></div>
<div style="left:1738.4px;top:757.5px;width:46px;height:1px;background:#9c9c9c;"></div>
<div class="t" style="left:1704.6px;top:752.42px;width:40px;font-size:11.5px;line-height:11.5px;color:#9c9c9c;text-align:center;">10</div>
<div style="left:1738.4px;top:787.5px;width:46px;height:1px;background:#9c9c9c;"></div>
<div class="t" style="left:1704.6px;top:782.32px;width:40px;font-size:11.5px;line-height:11.5px;color:#9c9c9c;text-align:center;">5</div>
<div style="left:1738.4px;top:816px;width:46px;height:1px;background:#f4f4f4;"></div>
<div style="left:1738.4px;top:817px;width:46px;height:1px;background:rgba(240,240,240,0.45);"></div>
<div class="t" style="left:1704.6px;top:811.22px;width:40px;font-size:11.5px;line-height:11.5px;color:#9c9c9c;text-align:center;">0</div>
<div style="left:1738.4px;top:845.5px;width:46px;height:1px;background:#9c9c9c;"></div>
<div class="t" style="left:1704.6px;top:840.72px;width:40px;font-size:11.5px;line-height:11.5px;color:#9c9c9c;text-align:center;">-5</div>
<div style="left:1738.4px;top:875.5px;width:46px;height:1px;background:#9c9c9c;"></div>
<div class="t" style="left:1704.6px;top:870.42px;width:40px;font-size:11.5px;line-height:11.5px;color:#9c9c9c;text-align:center;">-10</div>
<div style="left:1738.4px;top:905.5px;width:46px;height:1px;background:#9c9c9c;"></div>
<div class="t" style="left:1704.6px;top:899.72px;width:40px;font-size:11.5px;line-height:11.5px;color:#9c9c9c;text-align:center;">-20</div>
<div style="left:1738.4px;top:934.5px;width:46px;height:1px;background:#9c9c9c;"></div>
<div class="t" style="left:1704.6px;top:929.22px;width:40px;font-size:11.5px;line-height:11.5px;color:#9c9c9c;text-align:center;">-30</div>
<div style="left:1738.4px;top:963.5px;width:46px;height:1px;background:#9c9c9c;"></div>
<div class="t" style="left:1704.6px;top:958.22px;width:40px;font-size:11.5px;line-height:11.5px;color:#9c9c9c;text-align:center;">-50</div>
<div style="left:1738.9px;top:949.2px;width:42.5px;height:88.3px;background:linear-gradient(to bottom,#8e8e8e 0%,#b8b8b8 1.5%,#cbcbcb 3%,#cbcbcb 17%,#8a8a8a 17%,#8a8a8a 21%,#a8a8a8 21%,#a8a8a8 22.6%,#8c8c8c 22.6%,#8c8c8c 30.5%,#a5a5a5 30.5%,#a5a5a5 32.2%,#9c9c9c 32.2%,#9c9c9c 38.8%,#c9c9c9 38.8%,#c9c9c9 46.8%,#ffffff 46.8%,#ffffff 51.8%,#cecece 51.8%,#cecece 59%,#a9a9a9 59%,#a9a9a9 60.3%,#c8c8c8 60.3%,#c8c8c8 67.3%,#a9a9a9 67.3%,#a9a9a9 68.5%,#e6e6e6 68.5%,#e6e6e6 76.3%,#b0b0b0 76.3%,#b0b0b0 77.5%,#dadada 77.5%,#dadada 82%,#b2b2b2 82%,#b2b2b2 95%,#9a9a9a 98.5%,#8a8a8a 100%);border-radius:1.5px;box-shadow:3px 3px 4px rgba(0,0,0,.35);"></div>
<div class="t" style="left:1708.9px;top:1037.84px;width:100px;font-size:18.5px;line-height:18.5px;color:#fafafa;text-align:center;">CH 07</div>
<div style="left:1816.95px;top:559px;width:102.5px;height:62.7px;background:#dcdcdc;"></div>
<div class="t" style="left:1816.95px;top:582.26px;width:102.5px;font-size:18px;line-height:18px;color:#000;text-align:center;">CH 08</div>
<div style="left:1816.95px;top:621.7px;width:102.5px;height:28px;background:#28292e;box-shadow:inset 0 0 0 2px #6b605e;"></div>
<div style="left:1867.8px;top:621.7px;width:1.6px;height:28px;background:#f0f0f0;"></div>
<div style="left:1816.95px;top:649.7px;width:102.5px;height:47.9px;background:#561717;"></div>
<div class="t" style="left:1816.95px;top:667.06px;width:102.5px;font-size:18px;line-height:18px;color:#ece4e4;text-align:center;">MUTE</div>
<div style="left:1816.95px;top:697.6px;width:102.5px;height:355.4px;background:#28292e;"></div>
<div style="left:1907.15px;top:697.6px;width:4px;height:14.5px;background:#6a1a1a;"></div>
<div style="left:1907.15px;top:712.1px;width:4px;height:114.1px;background:#734416;"></div>
<div style="left:1907.15px;top:826.2px;width:4px;height:226.8px;background:#2a3a1a;"></div>
<div style="left:1915.95px;top:697.6px;width:3.8px;height:75.5px;background:#ff2418;"></div>
<div style="left:1915.95px;top:808px;width:3.8px;height:75px;background:#ff2418;"></div>
<div class="t" style="left:1831.95px;top:691.72px;width:60px;font-size:19px;line-height:19px;color:#f0f0f0;text-align:center;letter-spacing:-1px">-&#8734;</div>
<div style="left:1860.75px;top:758.2px;width:9px;height:193px;background:#000;"></div>
<div style="left:1841.95px;top:757.5px;width:46px;height:1px;background:#9c9c9c;"></div>
<div class="t" style="left:1808.15px;top:752.42px;width:40px;font-size:11.5px;line-height:11.5px;color:#9c9c9c;text-align:center;">10</div>
<div style="left:1841.95px;top:787.5px;width:46px;height:1px;background:#9c9c9c;"></div>
<div class="t" style="left:1808.15px;top:782.32px;width:40px;font-size:11.5px;line-height:11.5px;color:#9c9c9c;text-align:center;">5</div>
<div style="left:1841.95px;top:816px;width:46px;height:1px;background:#f4f4f4;"></div>
<div style="left:1841.95px;top:817px;width:46px;height:1px;background:rgba(240,240,240,0.45);"></div>
<div class="t" style="left:1808.15px;top:811.22px;width:40px;font-size:11.5px;line-height:11.5px;color:#9c9c9c;text-align:center;">0</div>
<div style="left:1841.95px;top:845.5px;width:46px;height:1px;background:#9c9c9c;"></div>
<div class="t" style="left:1808.15px;top:840.72px;width:40px;font-size:11.5px;line-height:11.5px;color:#9c9c9c;text-align:center;">-5</div>
<div style="left:1841.95px;top:875.5px;width:46px;height:1px;background:#9c9c9c;"></div>
<div class="t" style="left:1808.15px;top:870.42px;width:40px;font-size:11.5px;line-height:11.5px;color:#9c9c9c;text-align:center;">-10</div>
<div style="left:1841.95px;top:905.5px;width:46px;height:1px;background:#9c9c9c;"></div>
<div class="t" style="left:1808.15px;top:899.72px;width:40px;font-size:11.5px;line-height:11.5px;color:#9c9c9c;text-align:center;">-20</div>
<div style="left:1841.95px;top:934.5px;width:46px;height:1px;background:#9c9c9c;"></div>
<div class="t" style="left:1808.15px;top:929.22px;width:40px;font-size:11.5px;line-height:11.5px;color:#9c9c9c;text-align:center;">-30</div>
<div style="left:1841.95px;top:963.5px;width:46px;height:1px;background:#9c9c9c;"></div>
<div class="t" style="left:1808.15px;top:958.22px;width:40px;font-size:11.5px;line-height:11.5px;color:#9c9c9c;text-align:center;">-50</div>
<div style="left:1842.45px;top:949.2px;width:42.5px;height:88.3px;background:linear-gradient(to bottom,#8e8e8e 0%,#b8b8b8 1.5%,#cbcbcb 3%,#cbcbcb 17%,#8a8a8a 17%,#8a8a8a 21%,#a8a8a8 21%,#a8a8a8 22.6%,#8c8c8c 22.6%,#8c8c8c 30.5%,#a5a5a5 30.5%,#a5a5a5 32.2%,#9c9c9c 32.2%,#9c9c9c 38.8%,#c9c9c9 38.8%,#c9c9c9 46.8%,#ffffff 46.8%,#ffffff 51.8%,#cecece 51.8%,#cecece 59%,#a9a9a9 59%,#a9a9a9 60.3%,#c8c8c8 60.3%,#c8c8c8 67.3%,#a9a9a9 67.3%,#a9a9a9 68.5%,#e6e6e6 68.5%,#e6e6e6 76.3%,#b0b0b0 76.3%,#b0b0b0 77.5%,#dadada 77.5%,#dadada 82%,#b2b2b2 82%,#b2b2b2 95%,#9a9a9a 98.5%,#8a8a8a 100%);border-radius:1.5px;box-shadow:3px 3px 4px rgba(0,0,0,.35);"></div>
<div class="t" style="left:1812.45px;top:1037.84px;width:100px;font-size:18.5px;line-height:18.5px;color:#fafafa;text-align:center;">CH 08</div></body></html>
